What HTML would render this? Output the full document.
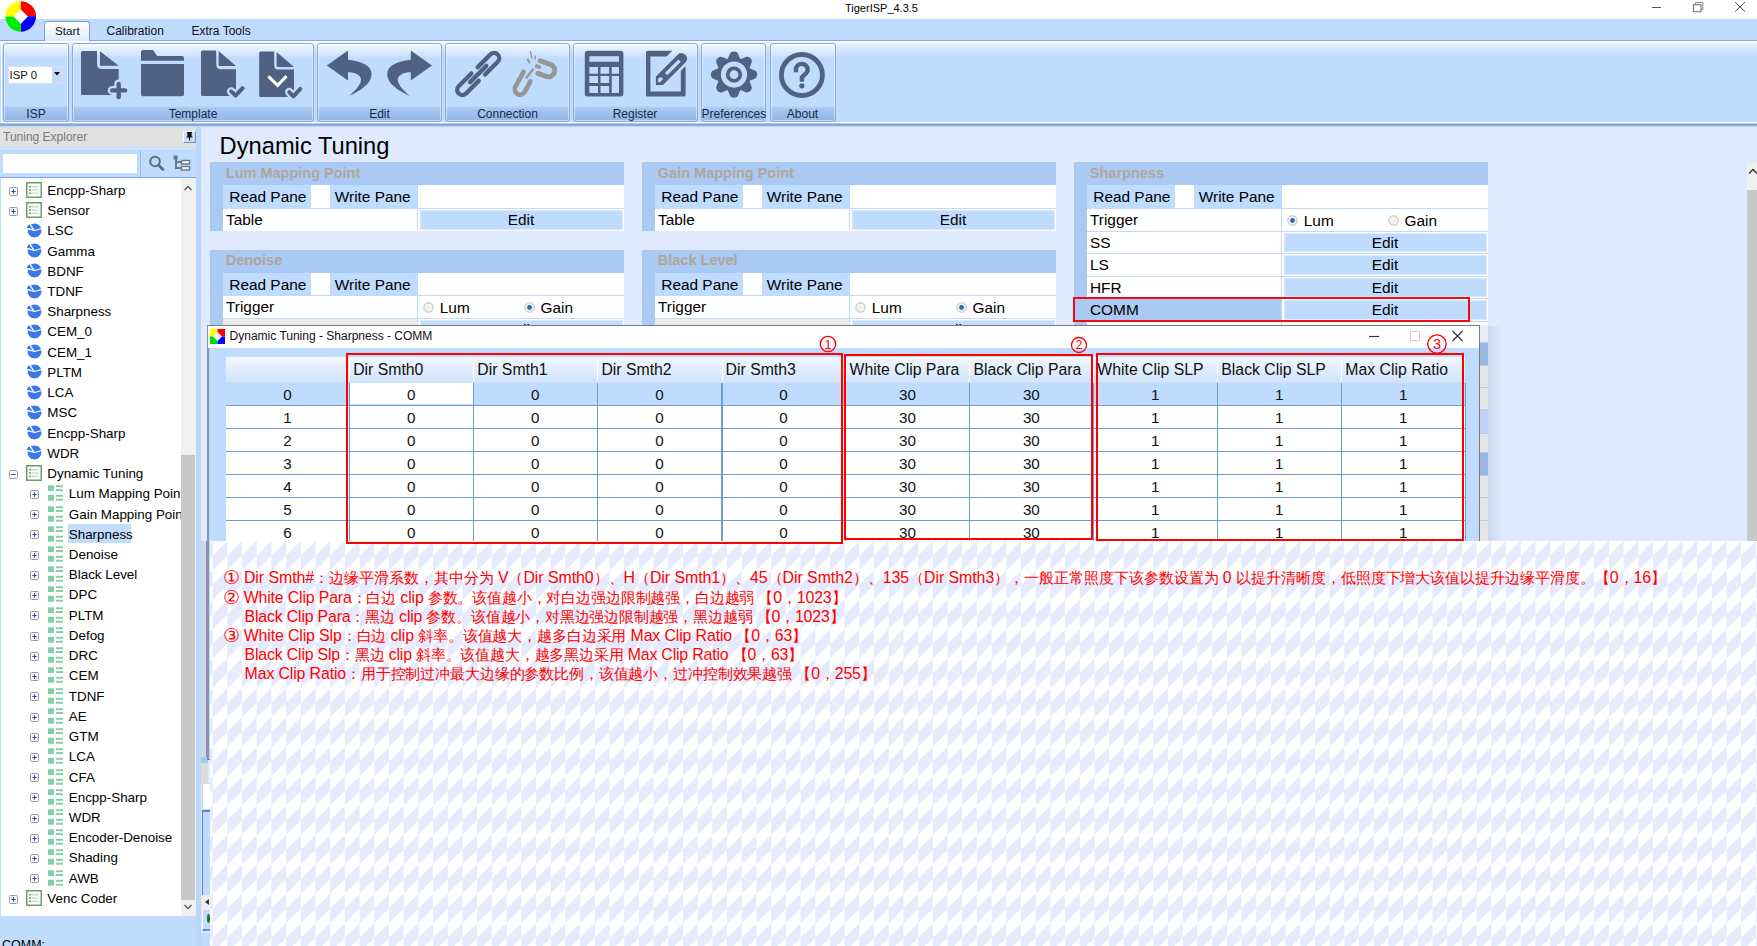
<!DOCTYPE html>
<html><head><meta charset="utf-8">
<style>
*{box-sizing:border-box}
body{margin:0;width:1757px;height:946px;overflow:hidden;position:relative;background:#fff;font-family:"Liberation Sans",sans-serif;color:#111}
.a{position:absolute}
.t{position:absolute;white-space:nowrap;line-height:1}
/* ribbon */
.grp{position:absolute;top:43px;height:79px;border:1px solid #8aabd9;border-radius:3px;background:linear-gradient(#f4f8fe 0,#d6e7fd 9px,#bfdbfe 15px,#bfdbfe 62px,#a9c8f0 64px,#8eb3e4 78px);box-shadow:inset 0 0 0 1px rgba(255,255,255,.45)}
.glab{position:absolute;left:0;right:0;top:62.8px;text-align:center;font-size:12px;line-height:14px;color:#15294a}
/* tree */
.tr{position:absolute;height:20px;font-size:13.4px;line-height:20px;white-space:nowrap;color:#000}
/* panels */
.pn{position:absolute;background:#aac9f3}
.ph{position:absolute;left:16px;top:4px;font-weight:bold;font-size:13.8px;color:#ada69c;white-space:nowrap}
.cell{position:absolute;font-size:15.4px;line-height:22px;white-space:nowrap;color:#000}
</style></head><body>

<!-- title bar -->
<div class="a" style="left:0;top:0;width:1757px;height:19px;background:#fff"></div>
<div class="t" style="left:845px;top:3px;font-size:11px;color:#000">TigerISP_4.3.5</div>
<svg class="a" style="left:0;top:0" width="1757" height="19">
  <g transform="translate(20.7,16.6)">
    <path d="M0,0 L0,-15.2 A15.2,15.2 0 0 1 15.2,0 Z" fill="#ff0000"/>
    <path d="M0,0 L15.2,0 A15.2,15.2 0 0 1 0,15.2 Z" fill="#0000ff"/>
    <path d="M0,0 L0,15.2 A15.2,15.2 0 0 1 -15.2,0 Z" fill="#00ee00"/>
    <path d="M0,0 L-15.2,0 A15.2,15.2 0 0 1 0,-15.2 Z" fill="#ffff00"/>
    <path d="M0,-7.2 L7.2,0 L0,7.2 L-7.2,0 Z" fill="#fff"/>
  </g>
  <line x1="1652" y1="7.5" x2="1661" y2="7.5" stroke="#555" stroke-width="1"/>
  <rect x="1693.5" y="4.7" width="7.5" height="7" fill="none" stroke="#666" stroke-width="1"/>
  <path d="M1695.5,4.5 V2.5 H1702.9 V9.6 H1701" fill="none" stroke="#888" stroke-width="1"/>
  <path d="M1735.2,2.2 L1745,11.6 M1745,2.2 L1735.2,11.6" stroke="#444" stroke-width="1"/>
</svg>
<!-- logo overlaps ribbon -->
<svg class="a" style="left:0;top:0;z-index:5" width="40" height="36">
  <g transform="translate(20.7,16.6)">
    <path d="M0,0 L0,-15.2 A15.2,15.2 0 0 1 15.2,0 Z" fill="#ff0000"/>
    <path d="M0,0 L15.2,0 A15.2,15.2 0 0 1 0,15.2 Z" fill="#0000ff"/>
    <path d="M0,0 L0,15.2 A15.2,15.2 0 0 1 -15.2,0 Z" fill="#00ee00"/>
    <path d="M0,0 L-15.2,0 A15.2,15.2 0 0 1 0,-15.2 Z" fill="#ffff00"/>
    <path d="M0,-7.2 L7.2,0 L0,7.2 L-7.2,0 Z" fill="#fff"/>
  </g>
</svg>

<!-- ribbon tab strip -->
<div class="a" style="left:0;top:19px;width:1757px;height:22px;background:#bfdbff;border-bottom:1px solid #85a9da"></div>
<div class="a" style="left:44px;top:21px;width:46px;height:21px;border:1px solid #7f9fcd;border-bottom:none;border-radius:3px 3px 0 0;background:linear-gradient(#ffffff,#dbe9fd)"></div>
<div class="t" style="left:55px;top:25px;font-size:11.7px;color:#111">Start</div>
<div class="t" style="left:106.5px;top:25px;font-size:12px;color:#111">Calibration</div>
<div class="t" style="left:191.5px;top:25px;font-size:12px;color:#111">Extra Tools</div>

<!-- ribbon body -->
<div class="a" style="left:0;top:41px;width:1757px;height:82px;background:linear-gradient(#f6f9fe 0,#dce9fc 6px,#bfdbfe 14px,#bfdbfe 100%)"></div>
<div class="a" style="left:1px;top:41px;width:1756px;height:82px;border:1px solid #fff;border-right:none;border-radius:4px 0 0 4px"></div>
<div class="a" style="left:0;top:122px;width:1757px;height:5px;background:linear-gradient(#ffffff 0,#ffffff 1px,#86a9d8 1.8px,#7a9fd1 3px,#a7c5ec 4px,#cde1fa 5px)"></div>

<div class="grp" style="left:3px;width:66px"><div class="glab">ISP</div></div>
<div class="grp" style="left:72px;width:242px"><div class="glab">Template</div></div>
<div class="grp" style="left:317px;width:125px"><div class="glab">Edit</div></div>
<div class="grp" style="left:445px;width:125px"><div class="glab">Connection</div></div>
<div class="grp" style="left:572.5px;width:125px"><div class="glab">Register</div></div>
<div class="grp" style="left:700.5px;width:65px"><div class="glab">Preferences</div></div>
<div class="grp" style="left:769.5px;width:66px"><div class="glab">About</div></div>

<!-- ISP combo -->
<div class="a" style="left:8px;top:66px;width:55px;height:18px;background:#fff;border:1px solid #d5e3f5"></div>
<div class="a" style="left:52px;top:67px;width:10px;height:16px;background:#c3dcfb"></div>
<div class="t" style="left:9.5px;top:69.5px;font-size:11.3px;color:#111">ISP 0</div>
<svg class="a" style="left:54px;top:72px" width="6" height="4"><path d="M0,0 H6 L3,3.5 Z" fill="#000"/></svg>

<!-- ribbon icons -->
<svg class="a" style="left:0;top:0" width="840" height="122">
 <g fill="#4f6282">
  <!-- new file -->
  <path d="M82.5,51 H97 V64 Q97,68.9 101,68.9 H118.7 V94.9 H82.5 Q81,94.9 81,93.4 V52.5 Q81,51 82.5,51 Z"/>
  <path d="M100,51.2 L118.7,65.8 H101.2 Q100,65.8 100,64.6 Z"/>
  <path d="M118.7,84 V97 M112.2,90.4 H125.2" stroke="#c0dbfd" stroke-width="9" stroke-linecap="round"/>
  <path d="M118.7,84 V97 M112.2,90.4 H125.2" stroke="#4f6282" stroke-width="4.4" stroke-linecap="round"/>
  <!-- folder -->
  <path d="M143,50.1 H153 L157.2,55.9 H182 Q184,55.9 184,57.9 V60.7 H141 V52.1 Q141,50.1 143,50.1 Z"/>
  <path d="M141,64.1 H184 V94.2 Q184,96.2 182,96.2 H143 Q141,96.2 141,94.2 Z"/>
  <!-- save -->
  <path d="M202.5,50.5 H216.2 V64 Q216.2,69.2 220,69.2 H236 V95.9 H202.5 Q201,95.9 201,94.4 V52 Q201,50.5 202.5,50.5 Z"/>
  <path d="M218.6,51 L236,65.9 H219.8 Q218.6,65.9 218.6,64.7 Z"/>
  <path d="M231.2,91.4 L235.6,95.6 L242.6,88.2" fill="none" stroke="#c0dbfd" stroke-width="8.5" stroke-linecap="round" stroke-linejoin="round"/>
  <path d="M231.2,91.4 L235.6,95.6 L242.6,88.2" fill="none" stroke="#4f6282" stroke-width="4" stroke-linecap="round" stroke-linejoin="round"/>
  <!-- save as -->
  <path d="M260.7,51.5 H274.2 V65 Q274.2,69.6 278,69.6 H294 V96.9 H260.7 Q259.2,96.9 259.2,95.4 V53 Q259.2,51.5 260.7,51.5 Z"/>
  <path d="M276.6,52 L294,67 H277.8 Q276.6,67 276.6,65.8 Z"/>
  <path d="M268.4,76.4 L277.6,85.3 L286.5,76.1" fill="none" stroke="#fff" stroke-width="3"/>
  <path d="M289.3,92.1 L293.4,96.3 L300.3,88.9" fill="none" stroke="#c0dbfd" stroke-width="8.5" stroke-linecap="round" stroke-linejoin="round"/>
  <path d="M289.3,92.1 L293.4,96.3 L300.3,88.9" fill="none" stroke="#4f6282" stroke-width="4" stroke-linecap="round" stroke-linejoin="round"/>
  <!-- undo -->
  <path d="M326.8,65.4 L348,50.5 L348,59.7 C362,61 371.6,66 371.6,74 C371.6,84 360,91 349,95.9 C356,90 361,84.5 361,79.5 C361,75 355,72.3 348,72.3 L348,80.5 Z"/>
  <!-- redo -->
  <path transform="translate(758.8,0) scale(-1,1)" d="M326.8,65.4 L348,50.5 L348,59.7 C362,61 371.6,66 371.6,74 C371.6,84 360,91 349,95.9 C356,90 361,84.5 361,79.5 C361,75 355,72.3 348,72.3 L348,80.5 Z"/>
  <!-- link -->
  <g transform="translate(478.2,74) rotate(-45)" fill="none" stroke="#4f6282" stroke-width="4.3" stroke-linecap="round">
    <path d="M4.5,-5.2 L22.4,-5.2 A5.2,5.2 0 0 1 22.4,5.2 L4.5,5.2"/>
    <path d="M-4.5,-5.2 L-22.4,-5.2 A5.2,5.2 0 0 0 -22.4,5.2 L-4.5,5.2"/>
    <path d="M-11.5,0 L11.5,0"/>
  </g>
  <!-- broken link -->
  <g fill="none" stroke="#969696" stroke-width="4.6" stroke-linecap="round">
    <path transform="translate(520,89.3) rotate(-61)" d="M17,-5.3 L0,-5.3 A5.3,5.3 0 0 0 0,5.3 L12,5.3"/>
    <path transform="translate(548.5,70.5) rotate(20)" d="M-11,-6.3 L0,-6.3 A6.3,6.3 0 0 1 0,6.3 L-9,6.3" stroke-width="4.9"/>
    <path d="M535.2,65.4 L540.8,67.6" stroke-width="3.6" stroke-linecap="butt"/>
    <path d="M526.5,77.5 L533,69.5" stroke-width="2.4"/>
    <path d="M530.6,52 L531.8,58" stroke-width="1.4"/>
    <path d="M535.3,56.2 L535.2,59" stroke-width="1.4"/>
    <path d="M527.8,59.5 L529.5,62.5" stroke-width="2"/>
  </g>
  <!-- calculator -->
  <path fill-rule="evenodd" d="M587.8,50.8 H620.4 Q623.4,50.8 623.4,53.8 V93.6 Q623.4,96.6 620.4,96.6 H587.8 Q584.8,96.6 584.8,93.6 V53.8 Q584.8,50.8 587.8,50.8 Z
    M589.3,56.3 V61.7 H619 V56.3 Z
    M589.3,67 V73.8 H598 V67 Z M600.5,67 V73.8 H609.1 V67 Z M611.7,67 V73.8 H619 V67 Z
    M589.3,76.1 V83.1 H598 V76.1 Z M600.5,76.1 V83.1 H609.1 V76.1 Z M611.7,76.1 V93 H619 V76.1 Z
    M589.3,86 V93 H598 V86 Z M600.5,86 V93 H609.1 V86 Z"/>
  <!-- pencil square -->
  <path d="M647.5,50.8 H672.3 L666.5,56.6 H650.4 V91.4 H680.8 V71 L685.6,66.2 V95.1 Q685.6,96.6 684.1,96.6 H647.5 Q646,96.6 646,95.1 V52.3 Q646,50.8 647.5,50.8 Z"/>
  <path fill-rule="evenodd" d="M655.9,85 V76.4 L677.9,54.4 A5.55,5.55 0 0 1 685.7,62.2 L663,85 Z M664.9,72.9 L678.4,59.4 L680.8,61.8 L667.3,75.3 Z M658.2,82.3 V78.6 L661.3,76.9 L663.1,79.1 L660,82.3 Z"/>
  <!-- gear -->
  <g transform="translate(734,74.6)">
    <path transform="rotate(0)" d="M-6.5,-15 L-4.3,-20.2 Q-3.5,-23 0,-23.2 Q3.5,-23 4.3,-20.2 L6.5,-15 Z"/>
    <path transform="rotate(45)" d="M-6.5,-15 L-4.3,-20.2 Q-3.5,-23 0,-23.2 Q3.5,-23 4.3,-20.2 L6.5,-15 Z"/>
    <path transform="rotate(90)" d="M-6.5,-15 L-4.3,-20.2 Q-3.5,-23 0,-23.2 Q3.5,-23 4.3,-20.2 L6.5,-15 Z"/>
    <path transform="rotate(135)" d="M-6.5,-15 L-4.3,-20.2 Q-3.5,-23 0,-23.2 Q3.5,-23 4.3,-20.2 L6.5,-15 Z"/>
    <path transform="rotate(180)" d="M-6.5,-15 L-4.3,-20.2 Q-3.5,-23 0,-23.2 Q3.5,-23 4.3,-20.2 L6.5,-15 Z"/>
    <path transform="rotate(225)" d="M-6.5,-15 L-4.3,-20.2 Q-3.5,-23 0,-23.2 Q3.5,-23 4.3,-20.2 L6.5,-15 Z"/>
    <path transform="rotate(270)" d="M-6.5,-15 L-4.3,-20.2 Q-3.5,-23 0,-23.2 Q3.5,-23 4.3,-20.2 L6.5,-15 Z"/>
    <path transform="rotate(315)" d="M-6.5,-15 L-4.3,-20.2 Q-3.5,-23 0,-23.2 Q3.5,-23 4.3,-20.2 L6.5,-15 Z"/>
    <circle r="17"/>
    <circle r="13.1" fill="#c0dbfd"/>
    <circle r="6.25" fill="none" stroke="#4f6282" stroke-width="3.7"/>
  </g>
  <!-- question -->
  <circle cx="801.9" cy="75" r="20.5" fill="none" stroke="#4f6282" stroke-width="4.8"/>
  <path d="M795.9,72.2 V69.8 A5.9,5.9 0 0 1 807.7,69.8 C807.7,73.8 803.2,74.6 801.9,77.5 V81.8" fill="none" stroke="#4f6282" stroke-width="4.4"/>
  <circle cx="801.9" cy="85.8" r="2.6"/>
 </g>
</svg>

<!-- LEFT PANEL -->
<div class="a" style="left:0;top:127px;width:201px;height:819px;background:#bfdbfe"></div>
<div class="a" style="left:0;top:127px;width:197px;height:20px;background:#e1e1e1"></div>
<div class="t" style="left:3px;top:131px;font-size:12px;color:#7c7c7c">Tuning Explorer</div>
<div class="a" style="left:183px;top:130.5px;width:12.5px;height:12px;background:#c9defa;border:1px solid #f2f7fe;border-right-color:#6f95c8;border-bottom-color:#6f95c8"></div>
<svg class="a" style="left:185px;top:132px" width="9" height="9"><path d="M2,0.5 H7 M3,0.5 V5 H6 V0.5 M1.5,5 H7.5 M4.5,5 V8.5" stroke="#111" stroke-width="1.2" fill="none"/><rect x="3" y="0.5" width="3" height="4.5" fill="#111"/></svg>
<div class="a" style="left:0;top:148px;width:197px;height:30px;background:#bfdbfe;border-top:1px solid #dbe9fc;border-bottom:1px solid #7fa6dc"></div>
<div class="a" style="left:2.6px;top:154px;width:134px;height:18.6px;background:#fff"></div>
<div class="a" style="left:140px;top:150px;width:1px;height:27px;background:#9ebbe3"></div>
<svg class="a" style="left:146px;top:153px" width="50" height="22">
  <circle cx="9" cy="8.5" r="4.8" fill="none" stroke="#5e6e80" stroke-width="2"/>
  <path d="M12.5,12 L17,16.5" stroke="#5e6e80" stroke-width="2.6" stroke-linecap="round"/>
  <path d="M30,4 V16 M30,9 H35 M30,15 H35" stroke="#6c7787" stroke-width="2" fill="none"/>
  <rect x="27.5" y="2.5" width="4" height="4" fill="#6c7787"/>
  <rect x="35.5" y="7.5" width="8" height="3.5" fill="#fff" stroke="#6c7787" stroke-width="1.4"/>
  <rect x="35.5" y="13.5" width="8" height="3.5" fill="#fff" stroke="#6c7787" stroke-width="1.4"/>
</svg>

<!-- tree -->
<div class="a" style="left:1px;top:178px;width:195px;height:737.6px;background:#fff"></div>
<div class="a" style="left:181px;top:178px;width:14.5px;height:737.6px;background:#f0f0f0"></div>
<div class="a" style="left:181px;top:455px;width:14px;height:445px;background:#c8c8c8"></div>
<svg class="a" style="left:181px;top:178px" width="15" height="738">
  <path d="M3.5,12 L7,8.5 L10.5,12" fill="none" stroke="#555" stroke-width="1.3"/>
  <path d="M3.5,727 L7,730.5 L10.5,727" fill="none" stroke="#555" stroke-width="1.3"/>
</svg>
<div class="a" style="left:1px;top:178px;width:180px;height:737px;overflow:hidden">
<svg class="a" style="left:8.0px;top:8.5px" width="9" height="9"><rect x="0.5" y="0.5" width="8" height="8" rx="1" fill="#f6f6f6" stroke="#9a9a9a"/><path d="M2.3,4.5 H6.7 M4.5,2.3 V6.7" stroke="#2b4a9a" stroke-width="1"/></svg>
<svg class="a" style="left:25.3px;top:4.0px" width="16" height="16"><rect x="0.75" y="0.75" width="14.5" height="14.5" fill="#fff" stroke="#6b9e6b" stroke-width="1.5"/><g fill="#6b9e6b"><circle cx="4" cy="4.8" r="1"/><circle cx="4" cy="8" r="1"/><circle cx="4" cy="11.2" r="1"/></g><path d="M5.5,4.8 H12.5 M5.5,8 H12.5 M5.5,11.2 H12.5" stroke="#a6c6a6" stroke-width="0.9"/></svg>
<div class="tr" style="left:46.3px;top:2.8px">Encpp-Sharp</div>
<svg class="a" style="left:8.0px;top:28.7px" width="9" height="9"><rect x="0.5" y="0.5" width="8" height="8" rx="1" fill="#f6f6f6" stroke="#9a9a9a"/><path d="M2.3,4.5 H6.7 M4.5,2.3 V6.7" stroke="#2b4a9a" stroke-width="1"/></svg>
<svg class="a" style="left:25.3px;top:24.2px" width="16" height="16"><rect x="0.75" y="0.75" width="14.5" height="14.5" fill="#fff" stroke="#6b9e6b" stroke-width="1.5"/><g fill="#6b9e6b"><circle cx="4" cy="4.8" r="1"/><circle cx="4" cy="8" r="1"/><circle cx="4" cy="11.2" r="1"/></g><path d="M5.5,4.8 H12.5 M5.5,8 H12.5 M5.5,11.2 H12.5" stroke="#a6c6a6" stroke-width="0.9"/></svg>
<div class="tr" style="left:46.3px;top:23.0px">Sensor</div>
<svg class="a" style="left:24.5px;top:43.8px" width="17" height="17"><g fill="#3b78e8" stroke="#fff" stroke-width="0.9" stroke-linejoin="round"><path d="M8.50,8.50 L15.60,6.41 A7.4,7.4 0 1 1 1.29,6.84 Z"/><path d="M8.50,8.50 L4.36,2.37 A7.4,7.4 0 0 1 15.60,6.41 Z"/><path d="M7.43,7.76 L0.22,6.10 A7.4,7.4 0 0 1 3.29,1.63 Z"/></g></svg>
<div class="tr" style="left:46.3px;top:43.3px">LSC</div>
<svg class="a" style="left:24.5px;top:64.0px" width="17" height="17"><g fill="#3b78e8" stroke="#fff" stroke-width="0.9" stroke-linejoin="round"><path d="M8.50,8.50 L15.60,6.41 A7.4,7.4 0 1 1 1.29,6.84 Z"/><path d="M8.50,8.50 L4.36,2.37 A7.4,7.4 0 0 1 15.60,6.41 Z"/><path d="M7.43,7.76 L0.22,6.10 A7.4,7.4 0 0 1 3.29,1.63 Z"/></g></svg>
<div class="tr" style="left:46.3px;top:63.5px">Gamma</div>
<svg class="a" style="left:24.5px;top:84.2px" width="17" height="17"><g fill="#3b78e8" stroke="#fff" stroke-width="0.9" stroke-linejoin="round"><path d="M8.50,8.50 L15.60,6.41 A7.4,7.4 0 1 1 1.29,6.84 Z"/><path d="M8.50,8.50 L4.36,2.37 A7.4,7.4 0 0 1 15.60,6.41 Z"/><path d="M7.43,7.76 L0.22,6.10 A7.4,7.4 0 0 1 3.29,1.63 Z"/></g></svg>
<div class="tr" style="left:46.3px;top:83.7px">BDNF</div>
<svg class="a" style="left:24.5px;top:104.5px" width="17" height="17"><g fill="#3b78e8" stroke="#fff" stroke-width="0.9" stroke-linejoin="round"><path d="M8.50,8.50 L15.60,6.41 A7.4,7.4 0 1 1 1.29,6.84 Z"/><path d="M8.50,8.50 L4.36,2.37 A7.4,7.4 0 0 1 15.60,6.41 Z"/><path d="M7.43,7.76 L0.22,6.10 A7.4,7.4 0 0 1 3.29,1.63 Z"/></g></svg>
<div class="tr" style="left:46.3px;top:104.0px">TDNF</div>
<svg class="a" style="left:24.5px;top:124.7px" width="17" height="17"><g fill="#3b78e8" stroke="#fff" stroke-width="0.9" stroke-linejoin="round"><path d="M8.50,8.50 L15.60,6.41 A7.4,7.4 0 1 1 1.29,6.84 Z"/><path d="M8.50,8.50 L4.36,2.37 A7.4,7.4 0 0 1 15.60,6.41 Z"/><path d="M7.43,7.76 L0.22,6.10 A7.4,7.4 0 0 1 3.29,1.63 Z"/></g></svg>
<div class="tr" style="left:46.3px;top:124.2px">Sharpness</div>
<svg class="a" style="left:24.5px;top:144.9px" width="17" height="17"><g fill="#3b78e8" stroke="#fff" stroke-width="0.9" stroke-linejoin="round"><path d="M8.50,8.50 L15.60,6.41 A7.4,7.4 0 1 1 1.29,6.84 Z"/><path d="M8.50,8.50 L4.36,2.37 A7.4,7.4 0 0 1 15.60,6.41 Z"/><path d="M7.43,7.76 L0.22,6.10 A7.4,7.4 0 0 1 3.29,1.63 Z"/></g></svg>
<div class="tr" style="left:46.3px;top:144.4px">CEM_0</div>
<svg class="a" style="left:24.5px;top:165.1px" width="17" height="17"><g fill="#3b78e8" stroke="#fff" stroke-width="0.9" stroke-linejoin="round"><path d="M8.50,8.50 L15.60,6.41 A7.4,7.4 0 1 1 1.29,6.84 Z"/><path d="M8.50,8.50 L4.36,2.37 A7.4,7.4 0 0 1 15.60,6.41 Z"/><path d="M7.43,7.76 L0.22,6.10 A7.4,7.4 0 0 1 3.29,1.63 Z"/></g></svg>
<div class="tr" style="left:46.3px;top:164.6px">CEM_1</div>
<svg class="a" style="left:24.5px;top:185.4px" width="17" height="17"><g fill="#3b78e8" stroke="#fff" stroke-width="0.9" stroke-linejoin="round"><path d="M8.50,8.50 L15.60,6.41 A7.4,7.4 0 1 1 1.29,6.84 Z"/><path d="M8.50,8.50 L4.36,2.37 A7.4,7.4 0 0 1 15.60,6.41 Z"/><path d="M7.43,7.76 L0.22,6.10 A7.4,7.4 0 0 1 3.29,1.63 Z"/></g></svg>
<div class="tr" style="left:46.3px;top:184.9px">PLTM</div>
<svg class="a" style="left:24.5px;top:205.6px" width="17" height="17"><g fill="#3b78e8" stroke="#fff" stroke-width="0.9" stroke-linejoin="round"><path d="M8.50,8.50 L15.60,6.41 A7.4,7.4 0 1 1 1.29,6.84 Z"/><path d="M8.50,8.50 L4.36,2.37 A7.4,7.4 0 0 1 15.60,6.41 Z"/><path d="M7.43,7.76 L0.22,6.10 A7.4,7.4 0 0 1 3.29,1.63 Z"/></g></svg>
<div class="tr" style="left:46.3px;top:205.1px">LCA</div>
<svg class="a" style="left:24.5px;top:225.8px" width="17" height="17"><g fill="#3b78e8" stroke="#fff" stroke-width="0.9" stroke-linejoin="round"><path d="M8.50,8.50 L15.60,6.41 A7.4,7.4 0 1 1 1.29,6.84 Z"/><path d="M8.50,8.50 L4.36,2.37 A7.4,7.4 0 0 1 15.60,6.41 Z"/><path d="M7.43,7.76 L0.22,6.10 A7.4,7.4 0 0 1 3.29,1.63 Z"/></g></svg>
<div class="tr" style="left:46.3px;top:225.3px">MSC</div>
<svg class="a" style="left:24.5px;top:246.1px" width="17" height="17"><g fill="#3b78e8" stroke="#fff" stroke-width="0.9" stroke-linejoin="round"><path d="M8.50,8.50 L15.60,6.41 A7.4,7.4 0 1 1 1.29,6.84 Z"/><path d="M8.50,8.50 L4.36,2.37 A7.4,7.4 0 0 1 15.60,6.41 Z"/><path d="M7.43,7.76 L0.22,6.10 A7.4,7.4 0 0 1 3.29,1.63 Z"/></g></svg>
<div class="tr" style="left:46.3px;top:245.6px">Encpp-Sharp</div>
<svg class="a" style="left:24.5px;top:266.3px" width="17" height="17"><g fill="#3b78e8" stroke="#fff" stroke-width="0.9" stroke-linejoin="round"><path d="M8.50,8.50 L15.60,6.41 A7.4,7.4 0 1 1 1.29,6.84 Z"/><path d="M8.50,8.50 L4.36,2.37 A7.4,7.4 0 0 1 15.60,6.41 Z"/><path d="M7.43,7.76 L0.22,6.10 A7.4,7.4 0 0 1 3.29,1.63 Z"/></g></svg>
<div class="tr" style="left:46.3px;top:265.8px">WDR</div>
<svg class="a" style="left:8.0px;top:291.7px" width="9" height="9"><rect x="0.5" y="0.5" width="8" height="8" rx="1" fill="#f6f6f6" stroke="#9a9a9a"/><path d="M2.3,4.5 H6.7" stroke="#2b4a9a" stroke-width="1"/></svg>
<svg class="a" style="left:25.3px;top:287.2px" width="16" height="16"><rect x="0.75" y="0.75" width="14.5" height="14.5" fill="#fff" stroke="#6b9e6b" stroke-width="1.5"/><g fill="#6b9e6b"><circle cx="4" cy="4.8" r="1"/><circle cx="4" cy="8" r="1"/><circle cx="4" cy="11.2" r="1"/></g><path d="M5.5,4.8 H12.5 M5.5,8 H12.5 M5.5,11.2 H12.5" stroke="#a6c6a6" stroke-width="0.9"/></svg>
<div class="tr" style="left:46.3px;top:286.0px">Dynamic Tuning</div>
<svg class="a" style="left:29.0px;top:311.9px" width="9" height="9"><rect x="0.5" y="0.5" width="8" height="8" rx="1" fill="#f6f6f6" stroke="#9a9a9a"/><path d="M2.3,4.5 H6.7 M4.5,2.3 V6.7" stroke="#2b4a9a" stroke-width="1"/></svg>
<svg class="a" style="left:47.0px;top:307.2px" width="16" height="16"><g fill="#80cfa5"><rect x="0" y="0.3" width="6" height="5.7"/><rect x="0" y="9.8" width="6" height="5.9"/><rect x="8" y="0.3" width="7" height="1.9"/><rect x="8" y="4.1" width="7" height="1.9"/><rect x="8" y="9.8" width="7" height="1.9"/><rect x="8" y="13.8" width="7" height="1.9"/></g></svg>
<div class="tr" style="left:67.8px;top:306.2px">Lum Mapping Point</div>
<svg class="a" style="left:29.0px;top:332.2px" width="9" height="9"><rect x="0.5" y="0.5" width="8" height="8" rx="1" fill="#f6f6f6" stroke="#9a9a9a"/><path d="M2.3,4.5 H6.7 M4.5,2.3 V6.7" stroke="#2b4a9a" stroke-width="1"/></svg>
<svg class="a" style="left:47.0px;top:327.5px" width="16" height="16"><g fill="#80cfa5"><rect x="0" y="0.3" width="6" height="5.7"/><rect x="0" y="9.8" width="6" height="5.9"/><rect x="8" y="0.3" width="7" height="1.9"/><rect x="8" y="4.1" width="7" height="1.9"/><rect x="8" y="9.8" width="7" height="1.9"/><rect x="8" y="13.8" width="7" height="1.9"/></g></svg>
<div class="tr" style="left:67.8px;top:326.5px">Gain Mapping Point</div>
<svg class="a" style="left:29.0px;top:352.4px" width="9" height="9"><rect x="0.5" y="0.5" width="8" height="8" rx="1" fill="#f6f6f6" stroke="#9a9a9a"/><path d="M2.3,4.5 H6.7 M4.5,2.3 V6.7" stroke="#2b4a9a" stroke-width="1"/></svg>
<svg class="a" style="left:47.0px;top:347.7px" width="16" height="16"><g fill="#80cfa5"><rect x="0" y="0.3" width="6" height="5.7"/><rect x="0" y="9.8" width="6" height="5.9"/><rect x="8" y="0.3" width="7" height="1.9"/><rect x="8" y="4.1" width="7" height="1.9"/><rect x="8" y="9.8" width="7" height="1.9"/><rect x="8" y="13.8" width="7" height="1.9"/></g></svg>
<div class="a" style="left:66.8px;top:346.2px;width:63px;height:19px;background:#c2dcfc"></div>
<div class="tr" style="left:67.8px;top:346.7px">Sharpness</div>
<svg class="a" style="left:29.0px;top:372.6px" width="9" height="9"><rect x="0.5" y="0.5" width="8" height="8" rx="1" fill="#f6f6f6" stroke="#9a9a9a"/><path d="M2.3,4.5 H6.7 M4.5,2.3 V6.7" stroke="#2b4a9a" stroke-width="1"/></svg>
<svg class="a" style="left:47.0px;top:367.9px" width="16" height="16"><g fill="#80cfa5"><rect x="0" y="0.3" width="6" height="5.7"/><rect x="0" y="9.8" width="6" height="5.9"/><rect x="8" y="0.3" width="7" height="1.9"/><rect x="8" y="4.1" width="7" height="1.9"/><rect x="8" y="9.8" width="7" height="1.9"/><rect x="8" y="13.8" width="7" height="1.9"/></g></svg>
<div class="tr" style="left:67.8px;top:366.9px">Denoise</div>
<svg class="a" style="left:29.0px;top:392.9px" width="9" height="9"><rect x="0.5" y="0.5" width="8" height="8" rx="1" fill="#f6f6f6" stroke="#9a9a9a"/><path d="M2.3,4.5 H6.7 M4.5,2.3 V6.7" stroke="#2b4a9a" stroke-width="1"/></svg>
<svg class="a" style="left:47.0px;top:388.2px" width="16" height="16"><g fill="#80cfa5"><rect x="0" y="0.3" width="6" height="5.7"/><rect x="0" y="9.8" width="6" height="5.9"/><rect x="8" y="0.3" width="7" height="1.9"/><rect x="8" y="4.1" width="7" height="1.9"/><rect x="8" y="9.8" width="7" height="1.9"/><rect x="8" y="13.8" width="7" height="1.9"/></g></svg>
<div class="tr" style="left:67.8px;top:387.2px">Black Level</div>
<svg class="a" style="left:29.0px;top:413.1px" width="9" height="9"><rect x="0.5" y="0.5" width="8" height="8" rx="1" fill="#f6f6f6" stroke="#9a9a9a"/><path d="M2.3,4.5 H6.7 M4.5,2.3 V6.7" stroke="#2b4a9a" stroke-width="1"/></svg>
<svg class="a" style="left:47.0px;top:408.4px" width="16" height="16"><g fill="#80cfa5"><rect x="0" y="0.3" width="6" height="5.7"/><rect x="0" y="9.8" width="6" height="5.9"/><rect x="8" y="0.3" width="7" height="1.9"/><rect x="8" y="4.1" width="7" height="1.9"/><rect x="8" y="9.8" width="7" height="1.9"/><rect x="8" y="13.8" width="7" height="1.9"/></g></svg>
<div class="tr" style="left:67.8px;top:407.4px">DPC</div>
<svg class="a" style="left:29.0px;top:433.3px" width="9" height="9"><rect x="0.5" y="0.5" width="8" height="8" rx="1" fill="#f6f6f6" stroke="#9a9a9a"/><path d="M2.3,4.5 H6.7 M4.5,2.3 V6.7" stroke="#2b4a9a" stroke-width="1"/></svg>
<svg class="a" style="left:47.0px;top:428.6px" width="16" height="16"><g fill="#80cfa5"><rect x="0" y="0.3" width="6" height="5.7"/><rect x="0" y="9.8" width="6" height="5.9"/><rect x="8" y="0.3" width="7" height="1.9"/><rect x="8" y="4.1" width="7" height="1.9"/><rect x="8" y="9.8" width="7" height="1.9"/><rect x="8" y="13.8" width="7" height="1.9"/></g></svg>
<div class="tr" style="left:67.8px;top:427.6px">PLTM</div>
<svg class="a" style="left:29.0px;top:453.6px" width="9" height="9"><rect x="0.5" y="0.5" width="8" height="8" rx="1" fill="#f6f6f6" stroke="#9a9a9a"/><path d="M2.3,4.5 H6.7 M4.5,2.3 V6.7" stroke="#2b4a9a" stroke-width="1"/></svg>
<svg class="a" style="left:47.0px;top:448.9px" width="16" height="16"><g fill="#80cfa5"><rect x="0" y="0.3" width="6" height="5.7"/><rect x="0" y="9.8" width="6" height="5.9"/><rect x="8" y="0.3" width="7" height="1.9"/><rect x="8" y="4.1" width="7" height="1.9"/><rect x="8" y="9.8" width="7" height="1.9"/><rect x="8" y="13.8" width="7" height="1.9"/></g></svg>
<div class="tr" style="left:67.8px;top:447.9px">Defog</div>
<svg class="a" style="left:29.0px;top:473.8px" width="9" height="9"><rect x="0.5" y="0.5" width="8" height="8" rx="1" fill="#f6f6f6" stroke="#9a9a9a"/><path d="M2.3,4.5 H6.7 M4.5,2.3 V6.7" stroke="#2b4a9a" stroke-width="1"/></svg>
<svg class="a" style="left:47.0px;top:469.1px" width="16" height="16"><g fill="#80cfa5"><rect x="0" y="0.3" width="6" height="5.7"/><rect x="0" y="9.8" width="6" height="5.9"/><rect x="8" y="0.3" width="7" height="1.9"/><rect x="8" y="4.1" width="7" height="1.9"/><rect x="8" y="9.8" width="7" height="1.9"/><rect x="8" y="13.8" width="7" height="1.9"/></g></svg>
<div class="tr" style="left:67.8px;top:468.1px">DRC</div>
<svg class="a" style="left:29.0px;top:494.0px" width="9" height="9"><rect x="0.5" y="0.5" width="8" height="8" rx="1" fill="#f6f6f6" stroke="#9a9a9a"/><path d="M2.3,4.5 H6.7 M4.5,2.3 V6.7" stroke="#2b4a9a" stroke-width="1"/></svg>
<svg class="a" style="left:47.0px;top:489.3px" width="16" height="16"><g fill="#80cfa5"><rect x="0" y="0.3" width="6" height="5.7"/><rect x="0" y="9.8" width="6" height="5.9"/><rect x="8" y="0.3" width="7" height="1.9"/><rect x="8" y="4.1" width="7" height="1.9"/><rect x="8" y="9.8" width="7" height="1.9"/><rect x="8" y="13.8" width="7" height="1.9"/></g></svg>
<div class="tr" style="left:67.8px;top:488.3px">CEM</div>
<svg class="a" style="left:29.0px;top:514.2px" width="9" height="9"><rect x="0.5" y="0.5" width="8" height="8" rx="1" fill="#f6f6f6" stroke="#9a9a9a"/><path d="M2.3,4.5 H6.7 M4.5,2.3 V6.7" stroke="#2b4a9a" stroke-width="1"/></svg>
<svg class="a" style="left:47.0px;top:509.5px" width="16" height="16"><g fill="#80cfa5"><rect x="0" y="0.3" width="6" height="5.7"/><rect x="0" y="9.8" width="6" height="5.9"/><rect x="8" y="0.3" width="7" height="1.9"/><rect x="8" y="4.1" width="7" height="1.9"/><rect x="8" y="9.8" width="7" height="1.9"/><rect x="8" y="13.8" width="7" height="1.9"/></g></svg>
<div class="tr" style="left:67.8px;top:508.5px">TDNF</div>
<svg class="a" style="left:29.0px;top:534.5px" width="9" height="9"><rect x="0.5" y="0.5" width="8" height="8" rx="1" fill="#f6f6f6" stroke="#9a9a9a"/><path d="M2.3,4.5 H6.7 M4.5,2.3 V6.7" stroke="#2b4a9a" stroke-width="1"/></svg>
<svg class="a" style="left:47.0px;top:529.8px" width="16" height="16"><g fill="#80cfa5"><rect x="0" y="0.3" width="6" height="5.7"/><rect x="0" y="9.8" width="6" height="5.9"/><rect x="8" y="0.3" width="7" height="1.9"/><rect x="8" y="4.1" width="7" height="1.9"/><rect x="8" y="9.8" width="7" height="1.9"/><rect x="8" y="13.8" width="7" height="1.9"/></g></svg>
<div class="tr" style="left:67.8px;top:528.8px">AE</div>
<svg class="a" style="left:29.0px;top:554.7px" width="9" height="9"><rect x="0.5" y="0.5" width="8" height="8" rx="1" fill="#f6f6f6" stroke="#9a9a9a"/><path d="M2.3,4.5 H6.7 M4.5,2.3 V6.7" stroke="#2b4a9a" stroke-width="1"/></svg>
<svg class="a" style="left:47.0px;top:550.0px" width="16" height="16"><g fill="#80cfa5"><rect x="0" y="0.3" width="6" height="5.7"/><rect x="0" y="9.8" width="6" height="5.9"/><rect x="8" y="0.3" width="7" height="1.9"/><rect x="8" y="4.1" width="7" height="1.9"/><rect x="8" y="9.8" width="7" height="1.9"/><rect x="8" y="13.8" width="7" height="1.9"/></g></svg>
<div class="tr" style="left:67.8px;top:549.0px">GTM</div>
<svg class="a" style="left:29.0px;top:574.9px" width="9" height="9"><rect x="0.5" y="0.5" width="8" height="8" rx="1" fill="#f6f6f6" stroke="#9a9a9a"/><path d="M2.3,4.5 H6.7 M4.5,2.3 V6.7" stroke="#2b4a9a" stroke-width="1"/></svg>
<svg class="a" style="left:47.0px;top:570.2px" width="16" height="16"><g fill="#80cfa5"><rect x="0" y="0.3" width="6" height="5.7"/><rect x="0" y="9.8" width="6" height="5.9"/><rect x="8" y="0.3" width="7" height="1.9"/><rect x="8" y="4.1" width="7" height="1.9"/><rect x="8" y="9.8" width="7" height="1.9"/><rect x="8" y="13.8" width="7" height="1.9"/></g></svg>
<div class="tr" style="left:67.8px;top:569.2px">LCA</div>
<svg class="a" style="left:29.0px;top:595.2px" width="9" height="9"><rect x="0.5" y="0.5" width="8" height="8" rx="1" fill="#f6f6f6" stroke="#9a9a9a"/><path d="M2.3,4.5 H6.7 M4.5,2.3 V6.7" stroke="#2b4a9a" stroke-width="1"/></svg>
<svg class="a" style="left:47.0px;top:590.5px" width="16" height="16"><g fill="#80cfa5"><rect x="0" y="0.3" width="6" height="5.7"/><rect x="0" y="9.8" width="6" height="5.9"/><rect x="8" y="0.3" width="7" height="1.9"/><rect x="8" y="4.1" width="7" height="1.9"/><rect x="8" y="9.8" width="7" height="1.9"/><rect x="8" y="13.8" width="7" height="1.9"/></g></svg>
<div class="tr" style="left:67.8px;top:589.5px">CFA</div>
<svg class="a" style="left:29.0px;top:615.4px" width="9" height="9"><rect x="0.5" y="0.5" width="8" height="8" rx="1" fill="#f6f6f6" stroke="#9a9a9a"/><path d="M2.3,4.5 H6.7 M4.5,2.3 V6.7" stroke="#2b4a9a" stroke-width="1"/></svg>
<svg class="a" style="left:47.0px;top:610.7px" width="16" height="16"><g fill="#80cfa5"><rect x="0" y="0.3" width="6" height="5.7"/><rect x="0" y="9.8" width="6" height="5.9"/><rect x="8" y="0.3" width="7" height="1.9"/><rect x="8" y="4.1" width="7" height="1.9"/><rect x="8" y="9.8" width="7" height="1.9"/><rect x="8" y="13.8" width="7" height="1.9"/></g></svg>
<div class="tr" style="left:67.8px;top:609.7px">Encpp-Sharp</div>
<svg class="a" style="left:29.0px;top:635.6px" width="9" height="9"><rect x="0.5" y="0.5" width="8" height="8" rx="1" fill="#f6f6f6" stroke="#9a9a9a"/><path d="M2.3,4.5 H6.7 M4.5,2.3 V6.7" stroke="#2b4a9a" stroke-width="1"/></svg>
<svg class="a" style="left:47.0px;top:630.9px" width="16" height="16"><g fill="#80cfa5"><rect x="0" y="0.3" width="6" height="5.7"/><rect x="0" y="9.8" width="6" height="5.9"/><rect x="8" y="0.3" width="7" height="1.9"/><rect x="8" y="4.1" width="7" height="1.9"/><rect x="8" y="9.8" width="7" height="1.9"/><rect x="8" y="13.8" width="7" height="1.9"/></g></svg>
<div class="tr" style="left:67.8px;top:629.9px">WDR</div>
<svg class="a" style="left:29.0px;top:655.9px" width="9" height="9"><rect x="0.5" y="0.5" width="8" height="8" rx="1" fill="#f6f6f6" stroke="#9a9a9a"/><path d="M2.3,4.5 H6.7 M4.5,2.3 V6.7" stroke="#2b4a9a" stroke-width="1"/></svg>
<svg class="a" style="left:47.0px;top:651.2px" width="16" height="16"><g fill="#80cfa5"><rect x="0" y="0.3" width="6" height="5.7"/><rect x="0" y="9.8" width="6" height="5.9"/><rect x="8" y="0.3" width="7" height="1.9"/><rect x="8" y="4.1" width="7" height="1.9"/><rect x="8" y="9.8" width="7" height="1.9"/><rect x="8" y="13.8" width="7" height="1.9"/></g></svg>
<div class="tr" style="left:67.8px;top:650.2px">Encoder-Denoise</div>
<svg class="a" style="left:29.0px;top:676.1px" width="9" height="9"><rect x="0.5" y="0.5" width="8" height="8" rx="1" fill="#f6f6f6" stroke="#9a9a9a"/><path d="M2.3,4.5 H6.7 M4.5,2.3 V6.7" stroke="#2b4a9a" stroke-width="1"/></svg>
<svg class="a" style="left:47.0px;top:671.4px" width="16" height="16"><g fill="#80cfa5"><rect x="0" y="0.3" width="6" height="5.7"/><rect x="0" y="9.8" width="6" height="5.9"/><rect x="8" y="0.3" width="7" height="1.9"/><rect x="8" y="4.1" width="7" height="1.9"/><rect x="8" y="9.8" width="7" height="1.9"/><rect x="8" y="13.8" width="7" height="1.9"/></g></svg>
<div class="tr" style="left:67.8px;top:670.4px">Shading</div>
<svg class="a" style="left:29.0px;top:696.3px" width="9" height="9"><rect x="0.5" y="0.5" width="8" height="8" rx="1" fill="#f6f6f6" stroke="#9a9a9a"/><path d="M2.3,4.5 H6.7 M4.5,2.3 V6.7" stroke="#2b4a9a" stroke-width="1"/></svg>
<svg class="a" style="left:47.0px;top:691.6px" width="16" height="16"><g fill="#80cfa5"><rect x="0" y="0.3" width="6" height="5.7"/><rect x="0" y="9.8" width="6" height="5.9"/><rect x="8" y="0.3" width="7" height="1.9"/><rect x="8" y="4.1" width="7" height="1.9"/><rect x="8" y="9.8" width="7" height="1.9"/><rect x="8" y="13.8" width="7" height="1.9"/></g></svg>
<div class="tr" style="left:67.8px;top:690.6px">AWB</div>
<svg class="a" style="left:8.0px;top:716.6px" width="9" height="9"><rect x="0.5" y="0.5" width="8" height="8" rx="1" fill="#f6f6f6" stroke="#9a9a9a"/><path d="M2.3,4.5 H6.7 M4.5,2.3 V6.7" stroke="#2b4a9a" stroke-width="1"/></svg>
<svg class="a" style="left:25.3px;top:712.1px" width="16" height="16"><rect x="0.75" y="0.75" width="14.5" height="14.5" fill="#fff" stroke="#6b9e6b" stroke-width="1.5"/><g fill="#6b9e6b"><circle cx="4" cy="4.8" r="1"/><circle cx="4" cy="8" r="1"/><circle cx="4" cy="11.2" r="1"/></g><path d="M5.5,4.8 H12.5 M5.5,8 H12.5 M5.5,11.2 H12.5" stroke="#a6c6a6" stroke-width="0.9"/></svg>
<div class="tr" style="left:46.3px;top:710.9px">Venc Coder</div>
</div>

<div class="t" style="left:2px;top:938.5px;font-size:12.5px;color:#000">COMM:</div>

<!-- MAIN AREA -->
<div class="a" style="left:201px;top:127px;width:1556px;height:819px;background:#dfebfc"></div>
<div class="a" style="left:197px;top:127px;width:4px;height:819px;background:#bfdbfe"></div>
<div class="t" style="left:219.6px;top:135.3px;font-size:23.7px;color:#000">Dynamic Tuning</div>

<div class="pn" style="left:210px;top:162.4px;width:414px;height:68.7px"></div>
<div class="t" style="left:225.8px;top:166.0px;font-weight:bold;font-size:14.5px;color:#aea79c">Lum Mapping Point</div>
<div class="a" style="left:223px;top:208px;width:401px;height:23px;background:#c4d9f4"></div>
<div class="a" style="left:223px;top:185px;width:401px;height:23px;background:#fff"></div>
<div class="a" style="left:223px;top:185px;width:88.3px;height:23px;background:#bfdbfe"></div>
<div class="a" style="left:329.9px;top:185px;width:88px;height:23px;background:#bfdbfe"></div>
<div class="cell" style="left:229.3px;top:185.5px">Read Pane</div>
<div class="cell" style="left:334.8px;top:185.5px">Write Pane</div>
<div class="a" style="left:223px;top:209px;width:194px;height:22px;background:#fff"></div>
<div class="a" style="left:418px;top:209px;width:206px;height:22px;background:#fff"></div>
<div class="cell" style="left:226px;top:209.3px">Table</div>
<div class="a" style="left:419.5px;top:210px;width:203px;height:20px;background:#bfdbfe;border:1px solid #dce9fb"></div>
<div class="cell" style="left:418px;top:209.3px;width:206px;text-align:center">Edit</div>
<div class="pn" style="left:642px;top:162.4px;width:414px;height:68.7px"></div>
<div class="t" style="left:657.8px;top:166.0px;font-weight:bold;font-size:14.5px;color:#aea79c">Gain Mapping Point</div>
<div class="a" style="left:655px;top:208px;width:401px;height:23px;background:#c4d9f4"></div>
<div class="a" style="left:655px;top:185px;width:401px;height:23px;background:#fff"></div>
<div class="a" style="left:655px;top:185px;width:88.3px;height:23px;background:#bfdbfe"></div>
<div class="a" style="left:761.9px;top:185px;width:88px;height:23px;background:#bfdbfe"></div>
<div class="cell" style="left:661.3px;top:185.5px">Read Pane</div>
<div class="cell" style="left:766.8px;top:185.5px">Write Pane</div>
<div class="a" style="left:655px;top:209px;width:194px;height:22px;background:#fff"></div>
<div class="a" style="left:850px;top:209px;width:206px;height:22px;background:#fff"></div>
<div class="cell" style="left:658px;top:209.3px">Table</div>
<div class="a" style="left:851.5px;top:210px;width:203px;height:20px;background:#bfdbfe;border:1px solid #dce9fb"></div>
<div class="cell" style="left:850px;top:209.3px;width:206px;text-align:center">Edit</div>
<div class="pn" style="left:1074px;top:162.4px;width:414px;height:249.5px"></div>
<div class="t" style="left:1089.8px;top:166.0px;font-weight:bold;font-size:14.5px;color:#aea79c">Sharpness</div>
<div class="a" style="left:1087px;top:208px;width:401px;height:203px;background:#c4d9f4"></div>
<div class="a" style="left:1087px;top:185px;width:401px;height:23px;background:#fff"></div>
<div class="a" style="left:1087px;top:185px;width:88.3px;height:23px;background:#bfdbfe"></div>
<div class="a" style="left:1193.9px;top:185px;width:88px;height:23px;background:#bfdbfe"></div>
<div class="cell" style="left:1093.3px;top:185.5px">Read Pane</div>
<div class="cell" style="left:1198.8px;top:185.5px">Write Pane</div>
<div class="a" style="left:1087px;top:209px;width:194px;height:22px;background:#fff"></div>
<div class="a" style="left:1282px;top:209px;width:206px;height:22px;background:#fff"></div>
<div class="cell" style="left:1090px;top:209.3px">Trigger</div>
<svg class="a" style="left:1287.2px;top:214.5px" width="11" height="11"><circle cx="5.5" cy="5.5" r="4.8" fill="#f2f2f2" stroke="#b5b5b5" stroke-width="0.9"/><circle cx="5.5" cy="5.5" r="2.4" fill="#1f6db0"/></svg>
<div class="cell" style="left:1303.8px;top:210px">Lum</div>
<svg class="a" style="left:1388.0px;top:214.5px" width="11" height="11"><circle cx="5.5" cy="5.5" r="4.8" fill="#f2f2f2" stroke="#b5b5b5" stroke-width="0.9"/></svg>
<div class="cell" style="left:1404.6px;top:210px">Gain</div>
<div class="a" style="left:1087px;top:232px;width:194px;height:21px;background:#fff"></div>
<div class="a" style="left:1282px;top:232px;width:206px;height:21px;background:#fff"></div>
<div class="cell" style="left:1090px;top:232.3px">SS</div>
<div class="a" style="left:1283.5px;top:233px;width:203px;height:19px;background:#bfdbfe;border:1px solid #dce9fb"></div>
<div class="cell" style="left:1282px;top:232.3px;width:206px;text-align:center">Edit</div>
<div class="a" style="left:1087px;top:254px;width:194px;height:22px;background:#fff"></div>
<div class="a" style="left:1282px;top:254px;width:206px;height:22px;background:#fff"></div>
<div class="cell" style="left:1090px;top:254.3px">LS</div>
<div class="a" style="left:1283.5px;top:255px;width:203px;height:20px;background:#bfdbfe;border:1px solid #dce9fb"></div>
<div class="cell" style="left:1282px;top:254.3px;width:206px;text-align:center">Edit</div>
<div class="a" style="left:1087px;top:277px;width:194px;height:21px;background:#fff"></div>
<div class="a" style="left:1282px;top:277px;width:206px;height:21px;background:#fff"></div>
<div class="cell" style="left:1090px;top:277.3px">HFR</div>
<div class="a" style="left:1283.5px;top:278px;width:203px;height:19px;background:#bfdbfe;border:1px solid #dce9fb"></div>
<div class="cell" style="left:1282px;top:277.3px;width:206px;text-align:center">Edit</div>
<div class="a" style="left:1087px;top:299px;width:194px;height:22px;background:#aac9f3"></div>
<div class="a" style="left:1282px;top:299px;width:206px;height:22px;background:#fff"></div>
<div class="cell" style="left:1090px;top:299.3px">COMM</div>
<div class="a" style="left:1283.5px;top:300px;width:203px;height:20px;background:#bfdbfe;border:1px solid #dce9fb"></div>
<div class="cell" style="left:1282px;top:299.3px;width:206px;text-align:center">Edit</div>
<div class="a" style="left:1087px;top:322px;width:194px;height:22px;background:#fff"></div>
<div class="a" style="left:1282px;top:322px;width:206px;height:22px;background:#fff"></div>
<div class="cell" style="left:1090px;top:322.3px"></div>
<div class="a" style="left:1087px;top:345px;width:194px;height:21px;background:#fff"></div>
<div class="a" style="left:1282px;top:345px;width:206px;height:21px;background:#fff"></div>
<div class="cell" style="left:1090px;top:345.3px"></div>
<div class="a" style="left:1087px;top:367px;width:194px;height:22px;background:#fff"></div>
<div class="a" style="left:1282px;top:367px;width:206px;height:22px;background:#fff"></div>
<div class="cell" style="left:1090px;top:367.3px"></div>
<div class="a" style="left:1087px;top:390px;width:194px;height:21px;background:#fff"></div>
<div class="a" style="left:1282px;top:390px;width:206px;height:21px;background:#fff"></div>
<div class="cell" style="left:1090px;top:390.3px"></div>
<div class="pn" style="left:210px;top:249.8px;width:414px;height:91.3px"></div>
<div class="t" style="left:225.8px;top:253.4px;font-weight:bold;font-size:14.5px;color:#aea79c">Denoise</div>
<div class="a" style="left:223px;top:295px;width:401px;height:46px;background:#c4d9f4"></div>
<div class="a" style="left:223px;top:273px;width:401px;height:22px;background:#fff"></div>
<div class="a" style="left:223px;top:273px;width:88.3px;height:22px;background:#bfdbfe"></div>
<div class="a" style="left:329.9px;top:273px;width:88px;height:22px;background:#bfdbfe"></div>
<div class="cell" style="left:229.3px;top:273.5px">Read Pane</div>
<div class="cell" style="left:334.8px;top:273.5px">Write Pane</div>
<div class="a" style="left:223px;top:296px;width:194px;height:22px;background:#fff"></div>
<div class="a" style="left:418px;top:296px;width:206px;height:22px;background:#fff"></div>
<div class="cell" style="left:226px;top:296.3px">Trigger</div>
<svg class="a" style="left:423.2px;top:301.5px" width="11" height="11"><circle cx="5.5" cy="5.5" r="4.8" fill="#f2f2f2" stroke="#b5b5b5" stroke-width="0.9"/></svg>
<div class="cell" style="left:439.8px;top:297px">Lum</div>
<svg class="a" style="left:524.0px;top:301.5px" width="11" height="11"><circle cx="5.5" cy="5.5" r="4.8" fill="#f2f2f2" stroke="#b5b5b5" stroke-width="0.9"/><circle cx="5.5" cy="5.5" r="2.4" fill="#1f6db0"/></svg>
<div class="cell" style="left:540.6px;top:297px">Gain</div>
<div class="a" style="left:223px;top:319px;width:194px;height:22px;background:#ebebeb"></div>
<div class="a" style="left:418px;top:319px;width:206px;height:22px;background:#fff"></div>
<div class="cell" style="left:226px;top:319.3px"></div>
<div class="a" style="left:419.5px;top:320px;width:203px;height:20px;background:#bfdbfe;border:1px solid #dce9fb"></div>
<div class="cell" style="left:418px;top:319.3px;width:206px;text-align:center">Edit</div>
<div class="pn" style="left:642px;top:249.8px;width:414px;height:91.3px"></div>
<div class="t" style="left:657.8px;top:253.4px;font-weight:bold;font-size:14.5px;color:#aea79c">Black Level</div>
<div class="a" style="left:655px;top:295px;width:401px;height:46px;background:#c4d9f4"></div>
<div class="a" style="left:655px;top:273px;width:401px;height:22px;background:#fff"></div>
<div class="a" style="left:655px;top:273px;width:88.3px;height:22px;background:#bfdbfe"></div>
<div class="a" style="left:761.9px;top:273px;width:88px;height:22px;background:#bfdbfe"></div>
<div class="cell" style="left:661.3px;top:273.5px">Read Pane</div>
<div class="cell" style="left:766.8px;top:273.5px">Write Pane</div>
<div class="a" style="left:655px;top:296px;width:194px;height:22px;background:#fff"></div>
<div class="a" style="left:850px;top:296px;width:206px;height:22px;background:#fff"></div>
<div class="cell" style="left:658px;top:296.3px">Trigger</div>
<svg class="a" style="left:855.2px;top:301.5px" width="11" height="11"><circle cx="5.5" cy="5.5" r="4.8" fill="#f2f2f2" stroke="#b5b5b5" stroke-width="0.9"/></svg>
<div class="cell" style="left:871.8000000000001px;top:297px">Lum</div>
<svg class="a" style="left:956.0px;top:301.5px" width="11" height="11"><circle cx="5.5" cy="5.5" r="4.8" fill="#f2f2f2" stroke="#b5b5b5" stroke-width="0.9"/><circle cx="5.5" cy="5.5" r="2.4" fill="#1f6db0"/></svg>
<div class="cell" style="left:972.6px;top:297px">Gain</div>
<div class="a" style="left:655px;top:319px;width:194px;height:22px;background:#ebebeb"></div>
<div class="a" style="left:850px;top:319px;width:206px;height:22px;background:#fff"></div>
<div class="cell" style="left:658px;top:319.3px"></div>
<div class="a" style="left:851.5px;top:320px;width:203px;height:20px;background:#bfdbfe;border:1px solid #dce9fb"></div>
<div class="cell" style="left:850px;top:319.3px;width:206px;text-align:center">Edit</div>
<div class="a" style="left:1073.3px;top:296.8px;width:397px;height:24.8px;border:2px solid #f20a12;z-index:20"></div>

<!-- main scrollbar -->
<div class="a" style="left:1747px;top:162.5px;width:10px;height:784px;background:#c8c8c8"></div>
<div class="a" style="left:1747px;top:162.5px;width:10px;height:27px;background:#f0f0f0"></div>
<svg class="a" style="left:1747px;top:162px" width="10" height="20"><path d="M2,11.5 L6,7.5 L10,11.5" fill="none" stroke="#333" stroke-width="1.4"/></svg>


<!-- left sliver between explorer and overlay -->
<div class="a" style="left:195.5px;top:127px;width:5.5px;height:819px;background:#bad6f9"></div>
<div class="a" style="left:201px;top:541px;width:8.5px;height:216px;background:#cdd9e8"></div>
<div class="a" style="left:206px;top:541px;width:2px;height:236px;background:#8a939f"></div>
<div class="a" style="left:201px;top:757px;width:7px;height:6px;background:#a9c6ee"></div>
<div class="a" style="left:201px;top:763px;width:7px;height:20px;background:#dcdcdc"></div>
<div class="a" style="left:201.5px;top:783px;width:8px;height:27px;background:#fff;border:1px solid #d0d8e4;border-right:none"></div>
<div class="a" style="left:202px;top:810px;width:7.5px;height:121px;background:#bfdbfe;border-top:2px solid #5b86c6;border-left:1.2px solid #5b86c6"></div>
<div class="a" style="left:202px;top:895px;width:7.5px;height:15px;background:#eeeeee"></div>
<svg class="a" style="left:204px;top:898px" width="6" height="8"><path d="M1,4 L5,1 V7 Z" fill="#333"/></svg>
<div class="a" style="left:202px;top:910px;width:7.5px;height:21px;background:#bfdbfe;border-left:1px solid #fff;border-bottom:2px solid #6b8fc6"></div>
<div class="a" style="left:207px;top:914px;width:3px;height:9px;border-radius:50%;background:#1a7a1a"></div>
<div class="a" style="left:201px;top:933px;width:8.5px;height:13px;background:#bfdbfe"></div>
<div class="a" style="left:1480px;top:325px;width:8px;height:17px;background:#e9eef5"></div>
<div class="a" style="left:1480px;top:342px;width:7.5px;height:22.5px;background:#9ab8e2;border-top:1px solid #b5cdec"></div>
<div class="a" style="left:1480px;top:364.5px;width:7.5px;height:22.5px;background:#e6e6e6;border-top:1px solid #b5cdec"></div>
<div class="a" style="left:1480px;top:387px;width:7.5px;height:22px;background:#e6e6e6;border-top:1px solid #b5cdec"></div>
<div class="a" style="left:1480px;top:409px;width:7.5px;height:24px;background:#bcd4f1;border-top:1px solid #b5cdec"></div>
<div class="a" style="left:1480px;top:433px;width:7.5px;height:19px;background:#e6e6e6;border-top:1px solid #b5cdec"></div>
<div class="a" style="left:1480px;top:452px;width:7.5px;height:23px;background:#9ab8e2;border-top:1px solid #b5cdec"></div>
<div class="a" style="left:1480px;top:475px;width:7.5px;height:22px;background:#e6e6e6;border-top:1px solid #b5cdec"></div>
<div class="a" style="left:1480px;top:497px;width:7.5px;height:23px;background:#e6e6e6;border-top:1px solid #b5cdec"></div>
<div class="a" style="left:1480px;top:520px;width:7.5px;height:21px;background:#e6e6e6;border-top:1px solid #b5cdec"></div>
<div class="a" style="left:1487.5px;top:326px;width:14px;height:215px;background:linear-gradient(90deg,rgba(150,170,200,.28),rgba(223,235,252,0))"></div>
<div class="a" style="left:206.9px;top:324.5px;width:1273.1px;height:435.5px;background:#bfdbfe;border:1px solid #7a7a7a;border-left:2px solid #8a939f"></div>
<div class="a" style="left:207.9px;top:325.5px;width:1271.1px;height:22.5px;background:#fff"></div>
<svg class="a" style="left:210px;top:328.7px" width="15" height="15"><rect x="0" y="0" width="7.5" height="7.5" fill="#ffff00"/><rect x="7.5" y="0" width="7.5" height="7.5" fill="#ff0000"/><rect x="0" y="7.5" width="7.5" height="7.5" fill="#00dd00"/><rect x="7.5" y="7.5" width="7.5" height="7.5" fill="#0000ff"/><path d="M7.5,3 L12,7.5 L7.5,12 L3,7.5 Z" fill="#fff"/></svg>
<div class="t" style="left:229.6px;top:329.5px;font-size:12px;color:#111">Dynamic Tuning - Sharpness - COMM</div>
<svg class="a" style="left:1360px;top:326px" width="110" height="20"><path d="M9,10.5 H19" stroke="#333" stroke-width="1.2"/><rect x="50.5" y="5.5" width="9" height="9" fill="none" stroke="#d0d0d0"/><path d="M92.5,5 L102.5,15 M102.5,5 L92.5,15" stroke="#333" stroke-width="1.2"/></svg>
<div class="a" style="left:226px;top:357.3px;width:1239.3px;height:25.3px;background:linear-gradient(#f3f8fe,#cfe2fb)"></div>
<div class="a" style="left:349.2px;top:359.3px;width:1px;height:21.3px;background:#fff"></div>
<div class="t" style="left:353.2px;top:362.1px;font-size:15.8px;color:#111">Dir Smth0</div>
<div class="a" style="left:473.3px;top:359.3px;width:1px;height:21.3px;background:#fff"></div>
<div class="t" style="left:477.3px;top:362.1px;font-size:15.8px;color:#111">Dir Smth1</div>
<div class="a" style="left:597.4px;top:359.3px;width:1px;height:21.3px;background:#fff"></div>
<div class="t" style="left:601.4px;top:362.1px;font-size:15.8px;color:#111">Dir Smth2</div>
<div class="a" style="left:721.6px;top:359.3px;width:1px;height:21.3px;background:#fff"></div>
<div class="t" style="left:725.6px;top:362.1px;font-size:15.8px;color:#111">Dir Smth3</div>
<div class="a" style="left:845.5px;top:359.3px;width:1px;height:21.3px;background:#fff"></div>
<div class="t" style="left:849.5px;top:362.1px;font-size:15.8px;color:#111">White Clip Para</div>
<div class="a" style="left:969.4px;top:359.3px;width:1px;height:21.3px;background:#fff"></div>
<div class="t" style="left:973.4px;top:362.1px;font-size:15.8px;color:#111">Black Clip Para</div>
<div class="a" style="left:1093.3px;top:359.3px;width:1px;height:21.3px;background:#fff"></div>
<div class="t" style="left:1097.3px;top:362.1px;font-size:15.8px;color:#111">White Clip SLP</div>
<div class="a" style="left:1217.3px;top:359.3px;width:1px;height:21.3px;background:#fff"></div>
<div class="t" style="left:1221.3px;top:362.1px;font-size:15.8px;color:#111">Black Clip SLP</div>
<div class="a" style="left:1341.3px;top:359.3px;width:1px;height:21.3px;background:#fff"></div>
<div class="t" style="left:1345.3px;top:362.1px;font-size:15.8px;color:#111">Max Clip Ratio</div>
<div class="a" style="left:226px;top:382.6px;width:1239.3px;height:23.0px;background:#bfdbfe;border-bottom:1.3px solid #7199d2"></div>
<div class="a" style="left:350.2px;top:382.6px;width:123.10000000000002px;height:21.7px;background:#fff"></div>
<div class="t" style="left:226px;top:387.20000000000005px;width:123.19999999999999px;text-align:center;font-size:15.2px;color:#111">0</div>
<div class="t" style="left:349.2px;top:387.20000000000005px;width:124.10000000000002px;text-align:center;font-size:15.2px;color:#111">0</div>
<div class="t" style="left:473.3px;top:387.20000000000005px;width:124.09999999999997px;text-align:center;font-size:15.2px;color:#111">0</div>
<div class="t" style="left:597.4px;top:387.20000000000005px;width:124.20000000000005px;text-align:center;font-size:15.2px;color:#111">0</div>
<div class="t" style="left:721.6px;top:387.20000000000005px;width:123.89999999999998px;text-align:center;font-size:15.2px;color:#111">0</div>
<div class="t" style="left:845.5px;top:387.20000000000005px;width:123.89999999999998px;text-align:center;font-size:15.2px;color:#111">30</div>
<div class="t" style="left:969.4px;top:387.20000000000005px;width:123.89999999999998px;text-align:center;font-size:15.2px;color:#111">30</div>
<div class="t" style="left:1093.3px;top:387.20000000000005px;width:124.0px;text-align:center;font-size:15.2px;color:#111">1</div>
<div class="t" style="left:1217.3px;top:387.20000000000005px;width:124.0px;text-align:center;font-size:15.2px;color:#111">1</div>
<div class="t" style="left:1341.3px;top:387.20000000000005px;width:124.0px;text-align:center;font-size:15.2px;color:#111">1</div>
<div class="a" style="left:226px;top:405.6px;width:1239.3px;height:23.0px;background:#fff;border-bottom:1.3px solid #7199d2"></div>
<div class="t" style="left:226px;top:410.20000000000005px;width:123.19999999999999px;text-align:center;font-size:15.2px;color:#111">1</div>
<div class="t" style="left:349.2px;top:410.20000000000005px;width:124.10000000000002px;text-align:center;font-size:15.2px;color:#111">0</div>
<div class="t" style="left:473.3px;top:410.20000000000005px;width:124.09999999999997px;text-align:center;font-size:15.2px;color:#111">0</div>
<div class="t" style="left:597.4px;top:410.20000000000005px;width:124.20000000000005px;text-align:center;font-size:15.2px;color:#111">0</div>
<div class="t" style="left:721.6px;top:410.20000000000005px;width:123.89999999999998px;text-align:center;font-size:15.2px;color:#111">0</div>
<div class="t" style="left:845.5px;top:410.20000000000005px;width:123.89999999999998px;text-align:center;font-size:15.2px;color:#111">30</div>
<div class="t" style="left:969.4px;top:410.20000000000005px;width:123.89999999999998px;text-align:center;font-size:15.2px;color:#111">30</div>
<div class="t" style="left:1093.3px;top:410.20000000000005px;width:124.0px;text-align:center;font-size:15.2px;color:#111">1</div>
<div class="t" style="left:1217.3px;top:410.20000000000005px;width:124.0px;text-align:center;font-size:15.2px;color:#111">1</div>
<div class="t" style="left:1341.3px;top:410.20000000000005px;width:124.0px;text-align:center;font-size:15.2px;color:#111">1</div>
<div class="a" style="left:226px;top:428.6px;width:1239.3px;height:23.0px;background:#fff;border-bottom:1.3px solid #7199d2"></div>
<div class="t" style="left:226px;top:433.20000000000005px;width:123.19999999999999px;text-align:center;font-size:15.2px;color:#111">2</div>
<div class="t" style="left:349.2px;top:433.20000000000005px;width:124.10000000000002px;text-align:center;font-size:15.2px;color:#111">0</div>
<div class="t" style="left:473.3px;top:433.20000000000005px;width:124.09999999999997px;text-align:center;font-size:15.2px;color:#111">0</div>
<div class="t" style="left:597.4px;top:433.20000000000005px;width:124.20000000000005px;text-align:center;font-size:15.2px;color:#111">0</div>
<div class="t" style="left:721.6px;top:433.20000000000005px;width:123.89999999999998px;text-align:center;font-size:15.2px;color:#111">0</div>
<div class="t" style="left:845.5px;top:433.20000000000005px;width:123.89999999999998px;text-align:center;font-size:15.2px;color:#111">30</div>
<div class="t" style="left:969.4px;top:433.20000000000005px;width:123.89999999999998px;text-align:center;font-size:15.2px;color:#111">30</div>
<div class="t" style="left:1093.3px;top:433.20000000000005px;width:124.0px;text-align:center;font-size:15.2px;color:#111">1</div>
<div class="t" style="left:1217.3px;top:433.20000000000005px;width:124.0px;text-align:center;font-size:15.2px;color:#111">1</div>
<div class="t" style="left:1341.3px;top:433.20000000000005px;width:124.0px;text-align:center;font-size:15.2px;color:#111">1</div>
<div class="a" style="left:226px;top:451.6px;width:1239.3px;height:23.0px;background:#fff;border-bottom:1.3px solid #7199d2"></div>
<div class="t" style="left:226px;top:456.20000000000005px;width:123.19999999999999px;text-align:center;font-size:15.2px;color:#111">3</div>
<div class="t" style="left:349.2px;top:456.20000000000005px;width:124.10000000000002px;text-align:center;font-size:15.2px;color:#111">0</div>
<div class="t" style="left:473.3px;top:456.20000000000005px;width:124.09999999999997px;text-align:center;font-size:15.2px;color:#111">0</div>
<div class="t" style="left:597.4px;top:456.20000000000005px;width:124.20000000000005px;text-align:center;font-size:15.2px;color:#111">0</div>
<div class="t" style="left:721.6px;top:456.20000000000005px;width:123.89999999999998px;text-align:center;font-size:15.2px;color:#111">0</div>
<div class="t" style="left:845.5px;top:456.20000000000005px;width:123.89999999999998px;text-align:center;font-size:15.2px;color:#111">30</div>
<div class="t" style="left:969.4px;top:456.20000000000005px;width:123.89999999999998px;text-align:center;font-size:15.2px;color:#111">30</div>
<div class="t" style="left:1093.3px;top:456.20000000000005px;width:124.0px;text-align:center;font-size:15.2px;color:#111">1</div>
<div class="t" style="left:1217.3px;top:456.20000000000005px;width:124.0px;text-align:center;font-size:15.2px;color:#111">1</div>
<div class="t" style="left:1341.3px;top:456.20000000000005px;width:124.0px;text-align:center;font-size:15.2px;color:#111">1</div>
<div class="a" style="left:226px;top:474.6px;width:1239.3px;height:23.0px;background:#fff;border-bottom:1.3px solid #7199d2"></div>
<div class="t" style="left:226px;top:479.20000000000005px;width:123.19999999999999px;text-align:center;font-size:15.2px;color:#111">4</div>
<div class="t" style="left:349.2px;top:479.20000000000005px;width:124.10000000000002px;text-align:center;font-size:15.2px;color:#111">0</div>
<div class="t" style="left:473.3px;top:479.20000000000005px;width:124.09999999999997px;text-align:center;font-size:15.2px;color:#111">0</div>
<div class="t" style="left:597.4px;top:479.20000000000005px;width:124.20000000000005px;text-align:center;font-size:15.2px;color:#111">0</div>
<div class="t" style="left:721.6px;top:479.20000000000005px;width:123.89999999999998px;text-align:center;font-size:15.2px;color:#111">0</div>
<div class="t" style="left:845.5px;top:479.20000000000005px;width:123.89999999999998px;text-align:center;font-size:15.2px;color:#111">30</div>
<div class="t" style="left:969.4px;top:479.20000000000005px;width:123.89999999999998px;text-align:center;font-size:15.2px;color:#111">30</div>
<div class="t" style="left:1093.3px;top:479.20000000000005px;width:124.0px;text-align:center;font-size:15.2px;color:#111">1</div>
<div class="t" style="left:1217.3px;top:479.20000000000005px;width:124.0px;text-align:center;font-size:15.2px;color:#111">1</div>
<div class="t" style="left:1341.3px;top:479.20000000000005px;width:124.0px;text-align:center;font-size:15.2px;color:#111">1</div>
<div class="a" style="left:226px;top:497.6px;width:1239.3px;height:23.0px;background:#fff;border-bottom:1.3px solid #7199d2"></div>
<div class="t" style="left:226px;top:502.20000000000005px;width:123.19999999999999px;text-align:center;font-size:15.2px;color:#111">5</div>
<div class="t" style="left:349.2px;top:502.20000000000005px;width:124.10000000000002px;text-align:center;font-size:15.2px;color:#111">0</div>
<div class="t" style="left:473.3px;top:502.20000000000005px;width:124.09999999999997px;text-align:center;font-size:15.2px;color:#111">0</div>
<div class="t" style="left:597.4px;top:502.20000000000005px;width:124.20000000000005px;text-align:center;font-size:15.2px;color:#111">0</div>
<div class="t" style="left:721.6px;top:502.20000000000005px;width:123.89999999999998px;text-align:center;font-size:15.2px;color:#111">0</div>
<div class="t" style="left:845.5px;top:502.20000000000005px;width:123.89999999999998px;text-align:center;font-size:15.2px;color:#111">30</div>
<div class="t" style="left:969.4px;top:502.20000000000005px;width:123.89999999999998px;text-align:center;font-size:15.2px;color:#111">30</div>
<div class="t" style="left:1093.3px;top:502.20000000000005px;width:124.0px;text-align:center;font-size:15.2px;color:#111">1</div>
<div class="t" style="left:1217.3px;top:502.20000000000005px;width:124.0px;text-align:center;font-size:15.2px;color:#111">1</div>
<div class="t" style="left:1341.3px;top:502.20000000000005px;width:124.0px;text-align:center;font-size:15.2px;color:#111">1</div>
<div class="a" style="left:226px;top:520.6px;width:1239.3px;height:23.0px;background:#fff;border-bottom:1.3px solid #7199d2"></div>
<div class="t" style="left:226px;top:525.2px;width:123.19999999999999px;text-align:center;font-size:15.2px;color:#111">6</div>
<div class="t" style="left:349.2px;top:525.2px;width:124.10000000000002px;text-align:center;font-size:15.2px;color:#111">0</div>
<div class="t" style="left:473.3px;top:525.2px;width:124.09999999999997px;text-align:center;font-size:15.2px;color:#111">0</div>
<div class="t" style="left:597.4px;top:525.2px;width:124.20000000000005px;text-align:center;font-size:15.2px;color:#111">0</div>
<div class="t" style="left:721.6px;top:525.2px;width:123.89999999999998px;text-align:center;font-size:15.2px;color:#111">0</div>
<div class="t" style="left:845.5px;top:525.2px;width:123.89999999999998px;text-align:center;font-size:15.2px;color:#111">30</div>
<div class="t" style="left:969.4px;top:525.2px;width:123.89999999999998px;text-align:center;font-size:15.2px;color:#111">30</div>
<div class="t" style="left:1093.3px;top:525.2px;width:124.0px;text-align:center;font-size:15.2px;color:#111">1</div>
<div class="t" style="left:1217.3px;top:525.2px;width:124.0px;text-align:center;font-size:15.2px;color:#111">1</div>
<div class="t" style="left:1341.3px;top:525.2px;width:124.0px;text-align:center;font-size:15.2px;color:#111">1</div>
<div class="a" style="left:348.9px;top:382.6px;width:1.3px;height:161.0px;background:#7199d2"></div>
<div class="a" style="left:473.0px;top:382.6px;width:1.3px;height:161.0px;background:#7199d2"></div>
<div class="a" style="left:597.1px;top:382.6px;width:1.3px;height:161.0px;background:#7199d2"></div>
<div class="a" style="left:721.3000000000001px;top:382.6px;width:1.3px;height:161.0px;background:#7199d2"></div>
<div class="a" style="left:845.2px;top:382.6px;width:1.3px;height:161.0px;background:#7199d2"></div>
<div class="a" style="left:969.1px;top:382.6px;width:1.3px;height:161.0px;background:#7199d2"></div>
<div class="a" style="left:1093.0px;top:382.6px;width:1.3px;height:161.0px;background:#7199d2"></div>
<div class="a" style="left:1217.0px;top:382.6px;width:1.3px;height:161.0px;background:#7199d2"></div>
<div class="a" style="left:1341.0px;top:382.6px;width:1.3px;height:161.0px;background:#7199d2"></div>
<div class="a" style="left:1465.0px;top:382.6px;width:1.3px;height:161.0px;background:#7199d2"></div>
<div class="a" style="left:346px;top:353px;width:496.79999999999995px;height:190.89999999999998px;border:2px solid #ff0000;z-index:20"></div>
<div class="a" style="left:844px;top:354.1px;width:248.79999999999995px;height:185.79999999999995px;border:2px solid #ff0000;z-index:20"></div>
<div class="a" style="left:1096px;top:352.9px;width:368px;height:187.89999999999998px;border:2px solid #ff0000;z-index:20"></div>
<svg class="a" style="left:816.5px;top:333px;z-index:20" width="22" height="22"><circle cx="11" cy="11" r="7.7" fill="none" stroke="#ff0000" stroke-width="1.3"/><text x="11" y="15.5" text-anchor="middle" font-family="Liberation Sans" font-size="12.5" fill="#ff0000">1</text></svg>
<svg class="a" style="left:1067.5px;top:334.4px;z-index:20" width="22" height="22"><circle cx="11" cy="11" r="7.5" fill="none" stroke="#ff0000" stroke-width="1.3"/><text x="11" y="15.3" text-anchor="middle" font-family="Liberation Sans" font-size="12" fill="#ff0000">2</text></svg>
<svg class="a" style="left:1425.9px;top:332.8px;z-index:20" width="22" height="22"><circle cx="11" cy="11" r="9.2" fill="none" stroke="#ff0000" stroke-width="1.3"/><text x="11" y="16.2" text-anchor="middle" font-family="Liberation Sans" font-size="14.5" fill="#ff0000">3</text></svg>
<div class="a" style="left:209.5px;top:541.0px;width:1547.5px;height:405.0px;background:#fff;overflow:hidden"><svg width="1547.5" height="405.0" style="display:block"><path fill="#e5eafc" d="M-12.08,-14.70l14.698,-14.698v14.698l-14.698,14.698zM-12.08,14.70l14.698,-14.698v14.698l-14.698,14.698zM-12.08,44.09l14.698,-14.698v14.698l-14.698,14.698zM-12.08,73.49l14.698,-14.698v14.698l-14.698,14.698zM-12.08,102.89l14.698,-14.698v14.698l-14.698,14.698zM-12.08,132.28l14.698,-14.698v14.698l-14.698,14.698zM-12.08,161.68l14.698,-14.698v14.698l-14.698,14.698zM-12.08,191.07l14.698,-14.698v14.698l-14.698,14.698zM-12.08,220.47l14.698,-14.698v14.698l-14.698,14.698zM-12.08,249.87l14.698,-14.698v14.698l-14.698,14.698zM-12.08,279.26l14.698,-14.698v14.698l-14.698,14.698zM-12.08,308.66l14.698,-14.698v14.698l-14.698,14.698zM-12.08,338.05l14.698,-14.698v14.698l-14.698,14.698zM-12.08,367.45l14.698,-14.698v14.698l-14.698,14.698zM-12.08,396.85l14.698,-14.698v14.698l-14.698,14.698zM2.62,-14.70l14.698,-14.698v14.698l-14.698,14.698zM2.62,14.70l14.698,-14.698v14.698l-14.698,14.698zM2.62,44.09l14.698,-14.698v14.698l-14.698,14.698zM2.62,73.49l14.698,-14.698v14.698l-14.698,14.698zM2.62,102.89l14.698,-14.698v14.698l-14.698,14.698zM2.62,132.28l14.698,-14.698v14.698l-14.698,14.698zM2.62,161.68l14.698,-14.698v14.698l-14.698,14.698zM2.62,191.07l14.698,-14.698v14.698l-14.698,14.698zM2.62,220.47l14.698,-14.698v14.698l-14.698,14.698zM2.62,249.87l14.698,-14.698v14.698l-14.698,14.698zM2.62,279.26l14.698,-14.698v14.698l-14.698,14.698zM2.62,308.66l14.698,-14.698v14.698l-14.698,14.698zM2.62,338.05l14.698,-14.698v14.698l-14.698,14.698zM2.62,367.45l14.698,-14.698v14.698l-14.698,14.698zM2.62,396.85l14.698,-14.698v14.698l-14.698,14.698zM17.32,-14.70l14.698,-14.698v14.698l-14.698,14.698zM17.32,14.70l14.698,-14.698v14.698l-14.698,14.698zM17.32,44.09l14.698,-14.698v14.698l-14.698,14.698zM17.32,73.49l14.698,-14.698v14.698l-14.698,14.698zM17.32,102.89l14.698,-14.698v14.698l-14.698,14.698zM17.32,132.28l14.698,-14.698v14.698l-14.698,14.698zM17.32,161.68l14.698,-14.698v14.698l-14.698,14.698zM17.32,191.07l14.698,-14.698v14.698l-14.698,14.698zM17.32,220.47l14.698,-14.698v14.698l-14.698,14.698zM17.32,249.87l14.698,-14.698v14.698l-14.698,14.698zM17.32,279.26l14.698,-14.698v14.698l-14.698,14.698zM17.32,308.66l14.698,-14.698v14.698l-14.698,14.698zM17.32,338.05l14.698,-14.698v14.698l-14.698,14.698zM17.32,367.45l14.698,-14.698v14.698l-14.698,14.698zM17.32,396.85l14.698,-14.698v14.698l-14.698,14.698zM32.02,-14.70l14.698,-14.698v14.698l-14.698,14.698zM32.02,14.70l14.698,-14.698v14.698l-14.698,14.698zM32.02,44.09l14.698,-14.698v14.698l-14.698,14.698zM32.02,73.49l14.698,-14.698v14.698l-14.698,14.698zM32.02,102.89l14.698,-14.698v14.698l-14.698,14.698zM32.02,132.28l14.698,-14.698v14.698l-14.698,14.698zM32.02,161.68l14.698,-14.698v14.698l-14.698,14.698zM32.02,191.07l14.698,-14.698v14.698l-14.698,14.698zM32.02,220.47l14.698,-14.698v14.698l-14.698,14.698zM32.02,249.87l14.698,-14.698v14.698l-14.698,14.698zM32.02,279.26l14.698,-14.698v14.698l-14.698,14.698zM32.02,308.66l14.698,-14.698v14.698l-14.698,14.698zM32.02,338.05l14.698,-14.698v14.698l-14.698,14.698zM32.02,367.45l14.698,-14.698v14.698l-14.698,14.698zM32.02,396.85l14.698,-14.698v14.698l-14.698,14.698zM46.71,-14.70l14.698,-14.698v14.698l-14.698,14.698zM46.71,14.70l14.698,-14.698v14.698l-14.698,14.698zM46.71,44.09l14.698,-14.698v14.698l-14.698,14.698zM46.71,73.49l14.698,-14.698v14.698l-14.698,14.698zM46.71,102.89l14.698,-14.698v14.698l-14.698,14.698zM46.71,132.28l14.698,-14.698v14.698l-14.698,14.698zM46.71,161.68l14.698,-14.698v14.698l-14.698,14.698zM46.71,191.07l14.698,-14.698v14.698l-14.698,14.698zM46.71,220.47l14.698,-14.698v14.698l-14.698,14.698zM46.71,249.87l14.698,-14.698v14.698l-14.698,14.698zM46.71,279.26l14.698,-14.698v14.698l-14.698,14.698zM46.71,308.66l14.698,-14.698v14.698l-14.698,14.698zM46.71,338.05l14.698,-14.698v14.698l-14.698,14.698zM46.71,367.45l14.698,-14.698v14.698l-14.698,14.698zM46.71,396.85l14.698,-14.698v14.698l-14.698,14.698zM61.41,-14.70l14.698,-14.698v14.698l-14.698,14.698zM61.41,14.70l14.698,-14.698v14.698l-14.698,14.698zM61.41,44.09l14.698,-14.698v14.698l-14.698,14.698zM61.41,73.49l14.698,-14.698v14.698l-14.698,14.698zM61.41,102.89l14.698,-14.698v14.698l-14.698,14.698zM61.41,132.28l14.698,-14.698v14.698l-14.698,14.698zM61.41,161.68l14.698,-14.698v14.698l-14.698,14.698zM61.41,191.07l14.698,-14.698v14.698l-14.698,14.698zM61.41,220.47l14.698,-14.698v14.698l-14.698,14.698zM61.41,249.87l14.698,-14.698v14.698l-14.698,14.698zM61.41,279.26l14.698,-14.698v14.698l-14.698,14.698zM61.41,308.66l14.698,-14.698v14.698l-14.698,14.698zM61.41,338.05l14.698,-14.698v14.698l-14.698,14.698zM61.41,367.45l14.698,-14.698v14.698l-14.698,14.698zM61.41,396.85l14.698,-14.698v14.698l-14.698,14.698zM76.11,-14.70l14.698,-14.698v14.698l-14.698,14.698zM76.11,14.70l14.698,-14.698v14.698l-14.698,14.698zM76.11,44.09l14.698,-14.698v14.698l-14.698,14.698zM76.11,73.49l14.698,-14.698v14.698l-14.698,14.698zM76.11,102.89l14.698,-14.698v14.698l-14.698,14.698zM76.11,132.28l14.698,-14.698v14.698l-14.698,14.698zM76.11,161.68l14.698,-14.698v14.698l-14.698,14.698zM76.11,191.07l14.698,-14.698v14.698l-14.698,14.698zM76.11,220.47l14.698,-14.698v14.698l-14.698,14.698zM76.11,249.87l14.698,-14.698v14.698l-14.698,14.698zM76.11,279.26l14.698,-14.698v14.698l-14.698,14.698zM76.11,308.66l14.698,-14.698v14.698l-14.698,14.698zM76.11,338.05l14.698,-14.698v14.698l-14.698,14.698zM76.11,367.45l14.698,-14.698v14.698l-14.698,14.698zM76.11,396.85l14.698,-14.698v14.698l-14.698,14.698zM90.81,-14.70l14.698,-14.698v14.698l-14.698,14.698zM90.81,14.70l14.698,-14.698v14.698l-14.698,14.698zM90.81,44.09l14.698,-14.698v14.698l-14.698,14.698zM90.81,73.49l14.698,-14.698v14.698l-14.698,14.698zM90.81,102.89l14.698,-14.698v14.698l-14.698,14.698zM90.81,132.28l14.698,-14.698v14.698l-14.698,14.698zM90.81,161.68l14.698,-14.698v14.698l-14.698,14.698zM90.81,191.07l14.698,-14.698v14.698l-14.698,14.698zM90.81,220.47l14.698,-14.698v14.698l-14.698,14.698zM90.81,249.87l14.698,-14.698v14.698l-14.698,14.698zM90.81,279.26l14.698,-14.698v14.698l-14.698,14.698zM90.81,308.66l14.698,-14.698v14.698l-14.698,14.698zM90.81,338.05l14.698,-14.698v14.698l-14.698,14.698zM90.81,367.45l14.698,-14.698v14.698l-14.698,14.698zM90.81,396.85l14.698,-14.698v14.698l-14.698,14.698zM105.51,-14.70l14.698,-14.698v14.698l-14.698,14.698zM105.51,14.70l14.698,-14.698v14.698l-14.698,14.698zM105.51,44.09l14.698,-14.698v14.698l-14.698,14.698zM105.51,73.49l14.698,-14.698v14.698l-14.698,14.698zM105.51,102.89l14.698,-14.698v14.698l-14.698,14.698zM105.51,132.28l14.698,-14.698v14.698l-14.698,14.698zM105.51,161.68l14.698,-14.698v14.698l-14.698,14.698zM105.51,191.07l14.698,-14.698v14.698l-14.698,14.698zM105.51,220.47l14.698,-14.698v14.698l-14.698,14.698zM105.51,249.87l14.698,-14.698v14.698l-14.698,14.698zM105.51,279.26l14.698,-14.698v14.698l-14.698,14.698zM105.51,308.66l14.698,-14.698v14.698l-14.698,14.698zM105.51,338.05l14.698,-14.698v14.698l-14.698,14.698zM105.51,367.45l14.698,-14.698v14.698l-14.698,14.698zM105.51,396.85l14.698,-14.698v14.698l-14.698,14.698zM120.20,-14.70l14.698,-14.698v14.698l-14.698,14.698zM120.20,14.70l14.698,-14.698v14.698l-14.698,14.698zM120.20,44.09l14.698,-14.698v14.698l-14.698,14.698zM120.20,73.49l14.698,-14.698v14.698l-14.698,14.698zM120.20,102.89l14.698,-14.698v14.698l-14.698,14.698zM120.20,132.28l14.698,-14.698v14.698l-14.698,14.698zM120.20,161.68l14.698,-14.698v14.698l-14.698,14.698zM120.20,191.07l14.698,-14.698v14.698l-14.698,14.698zM120.20,220.47l14.698,-14.698v14.698l-14.698,14.698zM120.20,249.87l14.698,-14.698v14.698l-14.698,14.698zM120.20,279.26l14.698,-14.698v14.698l-14.698,14.698zM120.20,308.66l14.698,-14.698v14.698l-14.698,14.698zM120.20,338.05l14.698,-14.698v14.698l-14.698,14.698zM120.20,367.45l14.698,-14.698v14.698l-14.698,14.698zM120.20,396.85l14.698,-14.698v14.698l-14.698,14.698zM134.90,-14.70l14.698,-14.698v14.698l-14.698,14.698zM134.90,14.70l14.698,-14.698v14.698l-14.698,14.698zM134.90,44.09l14.698,-14.698v14.698l-14.698,14.698zM134.90,73.49l14.698,-14.698v14.698l-14.698,14.698zM134.90,102.89l14.698,-14.698v14.698l-14.698,14.698zM134.90,132.28l14.698,-14.698v14.698l-14.698,14.698zM134.90,161.68l14.698,-14.698v14.698l-14.698,14.698zM134.90,191.07l14.698,-14.698v14.698l-14.698,14.698zM134.90,220.47l14.698,-14.698v14.698l-14.698,14.698zM134.90,249.87l14.698,-14.698v14.698l-14.698,14.698zM134.90,279.26l14.698,-14.698v14.698l-14.698,14.698zM134.90,308.66l14.698,-14.698v14.698l-14.698,14.698zM134.90,338.05l14.698,-14.698v14.698l-14.698,14.698zM134.90,367.45l14.698,-14.698v14.698l-14.698,14.698zM134.90,396.85l14.698,-14.698v14.698l-14.698,14.698zM149.60,-14.70l14.698,-14.698v14.698l-14.698,14.698zM149.60,14.70l14.698,-14.698v14.698l-14.698,14.698zM149.60,44.09l14.698,-14.698v14.698l-14.698,14.698zM149.60,73.49l14.698,-14.698v14.698l-14.698,14.698zM149.60,102.89l14.698,-14.698v14.698l-14.698,14.698zM149.60,132.28l14.698,-14.698v14.698l-14.698,14.698zM149.60,161.68l14.698,-14.698v14.698l-14.698,14.698zM149.60,191.07l14.698,-14.698v14.698l-14.698,14.698zM149.60,220.47l14.698,-14.698v14.698l-14.698,14.698zM149.60,249.87l14.698,-14.698v14.698l-14.698,14.698zM149.60,279.26l14.698,-14.698v14.698l-14.698,14.698zM149.60,308.66l14.698,-14.698v14.698l-14.698,14.698zM149.60,338.05l14.698,-14.698v14.698l-14.698,14.698zM149.60,367.45l14.698,-14.698v14.698l-14.698,14.698zM149.60,396.85l14.698,-14.698v14.698l-14.698,14.698zM164.30,-14.70l14.698,-14.698v14.698l-14.698,14.698zM164.30,14.70l14.698,-14.698v14.698l-14.698,14.698zM164.30,44.09l14.698,-14.698v14.698l-14.698,14.698zM164.30,73.49l14.698,-14.698v14.698l-14.698,14.698zM164.30,102.89l14.698,-14.698v14.698l-14.698,14.698zM164.30,132.28l14.698,-14.698v14.698l-14.698,14.698zM164.30,161.68l14.698,-14.698v14.698l-14.698,14.698zM164.30,191.07l14.698,-14.698v14.698l-14.698,14.698zM164.30,220.47l14.698,-14.698v14.698l-14.698,14.698zM164.30,249.87l14.698,-14.698v14.698l-14.698,14.698zM164.30,279.26l14.698,-14.698v14.698l-14.698,14.698zM164.30,308.66l14.698,-14.698v14.698l-14.698,14.698zM164.30,338.05l14.698,-14.698v14.698l-14.698,14.698zM164.30,367.45l14.698,-14.698v14.698l-14.698,14.698zM164.30,396.85l14.698,-14.698v14.698l-14.698,14.698zM179.00,-14.70l14.698,-14.698v14.698l-14.698,14.698zM179.00,14.70l14.698,-14.698v14.698l-14.698,14.698zM179.00,44.09l14.698,-14.698v14.698l-14.698,14.698zM179.00,73.49l14.698,-14.698v14.698l-14.698,14.698zM179.00,102.89l14.698,-14.698v14.698l-14.698,14.698zM179.00,132.28l14.698,-14.698v14.698l-14.698,14.698zM179.00,161.68l14.698,-14.698v14.698l-14.698,14.698zM179.00,191.07l14.698,-14.698v14.698l-14.698,14.698zM179.00,220.47l14.698,-14.698v14.698l-14.698,14.698zM179.00,249.87l14.698,-14.698v14.698l-14.698,14.698zM179.00,279.26l14.698,-14.698v14.698l-14.698,14.698zM179.00,308.66l14.698,-14.698v14.698l-14.698,14.698zM179.00,338.05l14.698,-14.698v14.698l-14.698,14.698zM179.00,367.45l14.698,-14.698v14.698l-14.698,14.698zM179.00,396.85l14.698,-14.698v14.698l-14.698,14.698zM193.69,-14.70l14.698,-14.698v14.698l-14.698,14.698zM193.69,14.70l14.698,-14.698v14.698l-14.698,14.698zM193.69,44.09l14.698,-14.698v14.698l-14.698,14.698zM193.69,73.49l14.698,-14.698v14.698l-14.698,14.698zM193.69,102.89l14.698,-14.698v14.698l-14.698,14.698zM193.69,132.28l14.698,-14.698v14.698l-14.698,14.698zM193.69,161.68l14.698,-14.698v14.698l-14.698,14.698zM193.69,191.07l14.698,-14.698v14.698l-14.698,14.698zM193.69,220.47l14.698,-14.698v14.698l-14.698,14.698zM193.69,249.87l14.698,-14.698v14.698l-14.698,14.698zM193.69,279.26l14.698,-14.698v14.698l-14.698,14.698zM193.69,308.66l14.698,-14.698v14.698l-14.698,14.698zM193.69,338.05l14.698,-14.698v14.698l-14.698,14.698zM193.69,367.45l14.698,-14.698v14.698l-14.698,14.698zM193.69,396.85l14.698,-14.698v14.698l-14.698,14.698zM208.39,-14.70l14.698,-14.698v14.698l-14.698,14.698zM208.39,14.70l14.698,-14.698v14.698l-14.698,14.698zM208.39,44.09l14.698,-14.698v14.698l-14.698,14.698zM208.39,73.49l14.698,-14.698v14.698l-14.698,14.698zM208.39,102.89l14.698,-14.698v14.698l-14.698,14.698zM208.39,132.28l14.698,-14.698v14.698l-14.698,14.698zM208.39,161.68l14.698,-14.698v14.698l-14.698,14.698zM208.39,191.07l14.698,-14.698v14.698l-14.698,14.698zM208.39,220.47l14.698,-14.698v14.698l-14.698,14.698zM208.39,249.87l14.698,-14.698v14.698l-14.698,14.698zM208.39,279.26l14.698,-14.698v14.698l-14.698,14.698zM208.39,308.66l14.698,-14.698v14.698l-14.698,14.698zM208.39,338.05l14.698,-14.698v14.698l-14.698,14.698zM208.39,367.45l14.698,-14.698v14.698l-14.698,14.698zM208.39,396.85l14.698,-14.698v14.698l-14.698,14.698zM223.09,-14.70l14.698,-14.698v14.698l-14.698,14.698zM223.09,14.70l14.698,-14.698v14.698l-14.698,14.698zM223.09,44.09l14.698,-14.698v14.698l-14.698,14.698zM223.09,73.49l14.698,-14.698v14.698l-14.698,14.698zM223.09,102.89l14.698,-14.698v14.698l-14.698,14.698zM223.09,132.28l14.698,-14.698v14.698l-14.698,14.698zM223.09,161.68l14.698,-14.698v14.698l-14.698,14.698zM223.09,191.07l14.698,-14.698v14.698l-14.698,14.698zM223.09,220.47l14.698,-14.698v14.698l-14.698,14.698zM223.09,249.87l14.698,-14.698v14.698l-14.698,14.698zM223.09,279.26l14.698,-14.698v14.698l-14.698,14.698zM223.09,308.66l14.698,-14.698v14.698l-14.698,14.698zM223.09,338.05l14.698,-14.698v14.698l-14.698,14.698zM223.09,367.45l14.698,-14.698v14.698l-14.698,14.698zM223.09,396.85l14.698,-14.698v14.698l-14.698,14.698zM237.79,-14.70l14.698,-14.698v14.698l-14.698,14.698zM237.79,14.70l14.698,-14.698v14.698l-14.698,14.698zM237.79,44.09l14.698,-14.698v14.698l-14.698,14.698zM237.79,73.49l14.698,-14.698v14.698l-14.698,14.698zM237.79,102.89l14.698,-14.698v14.698l-14.698,14.698zM237.79,132.28l14.698,-14.698v14.698l-14.698,14.698zM237.79,161.68l14.698,-14.698v14.698l-14.698,14.698zM237.79,191.07l14.698,-14.698v14.698l-14.698,14.698zM237.79,220.47l14.698,-14.698v14.698l-14.698,14.698zM237.79,249.87l14.698,-14.698v14.698l-14.698,14.698zM237.79,279.26l14.698,-14.698v14.698l-14.698,14.698zM237.79,308.66l14.698,-14.698v14.698l-14.698,14.698zM237.79,338.05l14.698,-14.698v14.698l-14.698,14.698zM237.79,367.45l14.698,-14.698v14.698l-14.698,14.698zM237.79,396.85l14.698,-14.698v14.698l-14.698,14.698zM252.49,-14.70l14.698,-14.698v14.698l-14.698,14.698zM252.49,14.70l14.698,-14.698v14.698l-14.698,14.698zM252.49,44.09l14.698,-14.698v14.698l-14.698,14.698zM252.49,73.49l14.698,-14.698v14.698l-14.698,14.698zM252.49,102.89l14.698,-14.698v14.698l-14.698,14.698zM252.49,132.28l14.698,-14.698v14.698l-14.698,14.698zM252.49,161.68l14.698,-14.698v14.698l-14.698,14.698zM252.49,191.07l14.698,-14.698v14.698l-14.698,14.698zM252.49,220.47l14.698,-14.698v14.698l-14.698,14.698zM252.49,249.87l14.698,-14.698v14.698l-14.698,14.698zM252.49,279.26l14.698,-14.698v14.698l-14.698,14.698zM252.49,308.66l14.698,-14.698v14.698l-14.698,14.698zM252.49,338.05l14.698,-14.698v14.698l-14.698,14.698zM252.49,367.45l14.698,-14.698v14.698l-14.698,14.698zM252.49,396.85l14.698,-14.698v14.698l-14.698,14.698zM267.18,-14.70l14.698,-14.698v14.698l-14.698,14.698zM267.18,14.70l14.698,-14.698v14.698l-14.698,14.698zM267.18,44.09l14.698,-14.698v14.698l-14.698,14.698zM267.18,73.49l14.698,-14.698v14.698l-14.698,14.698zM267.18,102.89l14.698,-14.698v14.698l-14.698,14.698zM267.18,132.28l14.698,-14.698v14.698l-14.698,14.698zM267.18,161.68l14.698,-14.698v14.698l-14.698,14.698zM267.18,191.07l14.698,-14.698v14.698l-14.698,14.698zM267.18,220.47l14.698,-14.698v14.698l-14.698,14.698zM267.18,249.87l14.698,-14.698v14.698l-14.698,14.698zM267.18,279.26l14.698,-14.698v14.698l-14.698,14.698zM267.18,308.66l14.698,-14.698v14.698l-14.698,14.698zM267.18,338.05l14.698,-14.698v14.698l-14.698,14.698zM267.18,367.45l14.698,-14.698v14.698l-14.698,14.698zM267.18,396.85l14.698,-14.698v14.698l-14.698,14.698zM281.88,-14.70l14.698,-14.698v14.698l-14.698,14.698zM281.88,14.70l14.698,-14.698v14.698l-14.698,14.698zM281.88,44.09l14.698,-14.698v14.698l-14.698,14.698zM281.88,73.49l14.698,-14.698v14.698l-14.698,14.698zM281.88,102.89l14.698,-14.698v14.698l-14.698,14.698zM281.88,132.28l14.698,-14.698v14.698l-14.698,14.698zM281.88,161.68l14.698,-14.698v14.698l-14.698,14.698zM281.88,191.07l14.698,-14.698v14.698l-14.698,14.698zM281.88,220.47l14.698,-14.698v14.698l-14.698,14.698zM281.88,249.87l14.698,-14.698v14.698l-14.698,14.698zM281.88,279.26l14.698,-14.698v14.698l-14.698,14.698zM281.88,308.66l14.698,-14.698v14.698l-14.698,14.698zM281.88,338.05l14.698,-14.698v14.698l-14.698,14.698zM281.88,367.45l14.698,-14.698v14.698l-14.698,14.698zM281.88,396.85l14.698,-14.698v14.698l-14.698,14.698zM296.58,-14.70l14.698,-14.698v14.698l-14.698,14.698zM296.58,14.70l14.698,-14.698v14.698l-14.698,14.698zM296.58,44.09l14.698,-14.698v14.698l-14.698,14.698zM296.58,73.49l14.698,-14.698v14.698l-14.698,14.698zM296.58,102.89l14.698,-14.698v14.698l-14.698,14.698zM296.58,132.28l14.698,-14.698v14.698l-14.698,14.698zM296.58,161.68l14.698,-14.698v14.698l-14.698,14.698zM296.58,191.07l14.698,-14.698v14.698l-14.698,14.698zM296.58,220.47l14.698,-14.698v14.698l-14.698,14.698zM296.58,249.87l14.698,-14.698v14.698l-14.698,14.698zM296.58,279.26l14.698,-14.698v14.698l-14.698,14.698zM296.58,308.66l14.698,-14.698v14.698l-14.698,14.698zM296.58,338.05l14.698,-14.698v14.698l-14.698,14.698zM296.58,367.45l14.698,-14.698v14.698l-14.698,14.698zM296.58,396.85l14.698,-14.698v14.698l-14.698,14.698zM311.28,-14.70l14.698,-14.698v14.698l-14.698,14.698zM311.28,14.70l14.698,-14.698v14.698l-14.698,14.698zM311.28,44.09l14.698,-14.698v14.698l-14.698,14.698zM311.28,73.49l14.698,-14.698v14.698l-14.698,14.698zM311.28,102.89l14.698,-14.698v14.698l-14.698,14.698zM311.28,132.28l14.698,-14.698v14.698l-14.698,14.698zM311.28,161.68l14.698,-14.698v14.698l-14.698,14.698zM311.28,191.07l14.698,-14.698v14.698l-14.698,14.698zM311.28,220.47l14.698,-14.698v14.698l-14.698,14.698zM311.28,249.87l14.698,-14.698v14.698l-14.698,14.698zM311.28,279.26l14.698,-14.698v14.698l-14.698,14.698zM311.28,308.66l14.698,-14.698v14.698l-14.698,14.698zM311.28,338.05l14.698,-14.698v14.698l-14.698,14.698zM311.28,367.45l14.698,-14.698v14.698l-14.698,14.698zM311.28,396.85l14.698,-14.698v14.698l-14.698,14.698zM325.98,-14.70l14.698,-14.698v14.698l-14.698,14.698zM325.98,14.70l14.698,-14.698v14.698l-14.698,14.698zM325.98,44.09l14.698,-14.698v14.698l-14.698,14.698zM325.98,73.49l14.698,-14.698v14.698l-14.698,14.698zM325.98,102.89l14.698,-14.698v14.698l-14.698,14.698zM325.98,132.28l14.698,-14.698v14.698l-14.698,14.698zM325.98,161.68l14.698,-14.698v14.698l-14.698,14.698zM325.98,191.07l14.698,-14.698v14.698l-14.698,14.698zM325.98,220.47l14.698,-14.698v14.698l-14.698,14.698zM325.98,249.87l14.698,-14.698v14.698l-14.698,14.698zM325.98,279.26l14.698,-14.698v14.698l-14.698,14.698zM325.98,308.66l14.698,-14.698v14.698l-14.698,14.698zM325.98,338.05l14.698,-14.698v14.698l-14.698,14.698zM325.98,367.45l14.698,-14.698v14.698l-14.698,14.698zM325.98,396.85l14.698,-14.698v14.698l-14.698,14.698zM340.67,-14.70l14.698,-14.698v14.698l-14.698,14.698zM340.67,14.70l14.698,-14.698v14.698l-14.698,14.698zM340.67,44.09l14.698,-14.698v14.698l-14.698,14.698zM340.67,73.49l14.698,-14.698v14.698l-14.698,14.698zM340.67,102.89l14.698,-14.698v14.698l-14.698,14.698zM340.67,132.28l14.698,-14.698v14.698l-14.698,14.698zM340.67,161.68l14.698,-14.698v14.698l-14.698,14.698zM340.67,191.07l14.698,-14.698v14.698l-14.698,14.698zM340.67,220.47l14.698,-14.698v14.698l-14.698,14.698zM340.67,249.87l14.698,-14.698v14.698l-14.698,14.698zM340.67,279.26l14.698,-14.698v14.698l-14.698,14.698zM340.67,308.66l14.698,-14.698v14.698l-14.698,14.698zM340.67,338.05l14.698,-14.698v14.698l-14.698,14.698zM340.67,367.45l14.698,-14.698v14.698l-14.698,14.698zM340.67,396.85l14.698,-14.698v14.698l-14.698,14.698zM355.37,-14.70l14.698,-14.698v14.698l-14.698,14.698zM355.37,14.70l14.698,-14.698v14.698l-14.698,14.698zM355.37,44.09l14.698,-14.698v14.698l-14.698,14.698zM355.37,73.49l14.698,-14.698v14.698l-14.698,14.698zM355.37,102.89l14.698,-14.698v14.698l-14.698,14.698zM355.37,132.28l14.698,-14.698v14.698l-14.698,14.698zM355.37,161.68l14.698,-14.698v14.698l-14.698,14.698zM355.37,191.07l14.698,-14.698v14.698l-14.698,14.698zM355.37,220.47l14.698,-14.698v14.698l-14.698,14.698zM355.37,249.87l14.698,-14.698v14.698l-14.698,14.698zM355.37,279.26l14.698,-14.698v14.698l-14.698,14.698zM355.37,308.66l14.698,-14.698v14.698l-14.698,14.698zM355.37,338.05l14.698,-14.698v14.698l-14.698,14.698zM355.37,367.45l14.698,-14.698v14.698l-14.698,14.698zM355.37,396.85l14.698,-14.698v14.698l-14.698,14.698zM370.07,-14.70l14.698,-14.698v14.698l-14.698,14.698zM370.07,14.70l14.698,-14.698v14.698l-14.698,14.698zM370.07,44.09l14.698,-14.698v14.698l-14.698,14.698zM370.07,73.49l14.698,-14.698v14.698l-14.698,14.698zM370.07,102.89l14.698,-14.698v14.698l-14.698,14.698zM370.07,132.28l14.698,-14.698v14.698l-14.698,14.698zM370.07,161.68l14.698,-14.698v14.698l-14.698,14.698zM370.07,191.07l14.698,-14.698v14.698l-14.698,14.698zM370.07,220.47l14.698,-14.698v14.698l-14.698,14.698zM370.07,249.87l14.698,-14.698v14.698l-14.698,14.698zM370.07,279.26l14.698,-14.698v14.698l-14.698,14.698zM370.07,308.66l14.698,-14.698v14.698l-14.698,14.698zM370.07,338.05l14.698,-14.698v14.698l-14.698,14.698zM370.07,367.45l14.698,-14.698v14.698l-14.698,14.698zM370.07,396.85l14.698,-14.698v14.698l-14.698,14.698zM384.77,-14.70l14.698,-14.698v14.698l-14.698,14.698zM384.77,14.70l14.698,-14.698v14.698l-14.698,14.698zM384.77,44.09l14.698,-14.698v14.698l-14.698,14.698zM384.77,73.49l14.698,-14.698v14.698l-14.698,14.698zM384.77,102.89l14.698,-14.698v14.698l-14.698,14.698zM384.77,132.28l14.698,-14.698v14.698l-14.698,14.698zM384.77,161.68l14.698,-14.698v14.698l-14.698,14.698zM384.77,191.07l14.698,-14.698v14.698l-14.698,14.698zM384.77,220.47l14.698,-14.698v14.698l-14.698,14.698zM384.77,249.87l14.698,-14.698v14.698l-14.698,14.698zM384.77,279.26l14.698,-14.698v14.698l-14.698,14.698zM384.77,308.66l14.698,-14.698v14.698l-14.698,14.698zM384.77,338.05l14.698,-14.698v14.698l-14.698,14.698zM384.77,367.45l14.698,-14.698v14.698l-14.698,14.698zM384.77,396.85l14.698,-14.698v14.698l-14.698,14.698zM399.47,-14.70l14.698,-14.698v14.698l-14.698,14.698zM399.47,14.70l14.698,-14.698v14.698l-14.698,14.698zM399.47,44.09l14.698,-14.698v14.698l-14.698,14.698zM399.47,73.49l14.698,-14.698v14.698l-14.698,14.698zM399.47,102.89l14.698,-14.698v14.698l-14.698,14.698zM399.47,132.28l14.698,-14.698v14.698l-14.698,14.698zM399.47,161.68l14.698,-14.698v14.698l-14.698,14.698zM399.47,191.07l14.698,-14.698v14.698l-14.698,14.698zM399.47,220.47l14.698,-14.698v14.698l-14.698,14.698zM399.47,249.87l14.698,-14.698v14.698l-14.698,14.698zM399.47,279.26l14.698,-14.698v14.698l-14.698,14.698zM399.47,308.66l14.698,-14.698v14.698l-14.698,14.698zM399.47,338.05l14.698,-14.698v14.698l-14.698,14.698zM399.47,367.45l14.698,-14.698v14.698l-14.698,14.698zM399.47,396.85l14.698,-14.698v14.698l-14.698,14.698zM414.16,-14.70l14.698,-14.698v14.698l-14.698,14.698zM414.16,14.70l14.698,-14.698v14.698l-14.698,14.698zM414.16,44.09l14.698,-14.698v14.698l-14.698,14.698zM414.16,73.49l14.698,-14.698v14.698l-14.698,14.698zM414.16,102.89l14.698,-14.698v14.698l-14.698,14.698zM414.16,132.28l14.698,-14.698v14.698l-14.698,14.698zM414.16,161.68l14.698,-14.698v14.698l-14.698,14.698zM414.16,191.07l14.698,-14.698v14.698l-14.698,14.698zM414.16,220.47l14.698,-14.698v14.698l-14.698,14.698zM414.16,249.87l14.698,-14.698v14.698l-14.698,14.698zM414.16,279.26l14.698,-14.698v14.698l-14.698,14.698zM414.16,308.66l14.698,-14.698v14.698l-14.698,14.698zM414.16,338.05l14.698,-14.698v14.698l-14.698,14.698zM414.16,367.45l14.698,-14.698v14.698l-14.698,14.698zM414.16,396.85l14.698,-14.698v14.698l-14.698,14.698zM428.86,-14.70l14.698,-14.698v14.698l-14.698,14.698zM428.86,14.70l14.698,-14.698v14.698l-14.698,14.698zM428.86,44.09l14.698,-14.698v14.698l-14.698,14.698zM428.86,73.49l14.698,-14.698v14.698l-14.698,14.698zM428.86,102.89l14.698,-14.698v14.698l-14.698,14.698zM428.86,132.28l14.698,-14.698v14.698l-14.698,14.698zM428.86,161.68l14.698,-14.698v14.698l-14.698,14.698zM428.86,191.07l14.698,-14.698v14.698l-14.698,14.698zM428.86,220.47l14.698,-14.698v14.698l-14.698,14.698zM428.86,249.87l14.698,-14.698v14.698l-14.698,14.698zM428.86,279.26l14.698,-14.698v14.698l-14.698,14.698zM428.86,308.66l14.698,-14.698v14.698l-14.698,14.698zM428.86,338.05l14.698,-14.698v14.698l-14.698,14.698zM428.86,367.45l14.698,-14.698v14.698l-14.698,14.698zM428.86,396.85l14.698,-14.698v14.698l-14.698,14.698zM443.56,-14.70l14.698,-14.698v14.698l-14.698,14.698zM443.56,14.70l14.698,-14.698v14.698l-14.698,14.698zM443.56,44.09l14.698,-14.698v14.698l-14.698,14.698zM443.56,73.49l14.698,-14.698v14.698l-14.698,14.698zM443.56,102.89l14.698,-14.698v14.698l-14.698,14.698zM443.56,132.28l14.698,-14.698v14.698l-14.698,14.698zM443.56,161.68l14.698,-14.698v14.698l-14.698,14.698zM443.56,191.07l14.698,-14.698v14.698l-14.698,14.698zM443.56,220.47l14.698,-14.698v14.698l-14.698,14.698zM443.56,249.87l14.698,-14.698v14.698l-14.698,14.698zM443.56,279.26l14.698,-14.698v14.698l-14.698,14.698zM443.56,308.66l14.698,-14.698v14.698l-14.698,14.698zM443.56,338.05l14.698,-14.698v14.698l-14.698,14.698zM443.56,367.45l14.698,-14.698v14.698l-14.698,14.698zM443.56,396.85l14.698,-14.698v14.698l-14.698,14.698zM458.26,-14.70l14.698,-14.698v14.698l-14.698,14.698zM458.26,14.70l14.698,-14.698v14.698l-14.698,14.698zM458.26,44.09l14.698,-14.698v14.698l-14.698,14.698zM458.26,73.49l14.698,-14.698v14.698l-14.698,14.698zM458.26,102.89l14.698,-14.698v14.698l-14.698,14.698zM458.26,132.28l14.698,-14.698v14.698l-14.698,14.698zM458.26,161.68l14.698,-14.698v14.698l-14.698,14.698zM458.26,191.07l14.698,-14.698v14.698l-14.698,14.698zM458.26,220.47l14.698,-14.698v14.698l-14.698,14.698zM458.26,249.87l14.698,-14.698v14.698l-14.698,14.698zM458.26,279.26l14.698,-14.698v14.698l-14.698,14.698zM458.26,308.66l14.698,-14.698v14.698l-14.698,14.698zM458.26,338.05l14.698,-14.698v14.698l-14.698,14.698zM458.26,367.45l14.698,-14.698v14.698l-14.698,14.698zM458.26,396.85l14.698,-14.698v14.698l-14.698,14.698zM472.96,-14.70l14.698,-14.698v14.698l-14.698,14.698zM472.96,14.70l14.698,-14.698v14.698l-14.698,14.698zM472.96,44.09l14.698,-14.698v14.698l-14.698,14.698zM472.96,73.49l14.698,-14.698v14.698l-14.698,14.698zM472.96,102.89l14.698,-14.698v14.698l-14.698,14.698zM472.96,132.28l14.698,-14.698v14.698l-14.698,14.698zM472.96,161.68l14.698,-14.698v14.698l-14.698,14.698zM472.96,191.07l14.698,-14.698v14.698l-14.698,14.698zM472.96,220.47l14.698,-14.698v14.698l-14.698,14.698zM472.96,249.87l14.698,-14.698v14.698l-14.698,14.698zM472.96,279.26l14.698,-14.698v14.698l-14.698,14.698zM472.96,308.66l14.698,-14.698v14.698l-14.698,14.698zM472.96,338.05l14.698,-14.698v14.698l-14.698,14.698zM472.96,367.45l14.698,-14.698v14.698l-14.698,14.698zM472.96,396.85l14.698,-14.698v14.698l-14.698,14.698zM487.65,-14.70l14.698,-14.698v14.698l-14.698,14.698zM487.65,14.70l14.698,-14.698v14.698l-14.698,14.698zM487.65,44.09l14.698,-14.698v14.698l-14.698,14.698zM487.65,73.49l14.698,-14.698v14.698l-14.698,14.698zM487.65,102.89l14.698,-14.698v14.698l-14.698,14.698zM487.65,132.28l14.698,-14.698v14.698l-14.698,14.698zM487.65,161.68l14.698,-14.698v14.698l-14.698,14.698zM487.65,191.07l14.698,-14.698v14.698l-14.698,14.698zM487.65,220.47l14.698,-14.698v14.698l-14.698,14.698zM487.65,249.87l14.698,-14.698v14.698l-14.698,14.698zM487.65,279.26l14.698,-14.698v14.698l-14.698,14.698zM487.65,308.66l14.698,-14.698v14.698l-14.698,14.698zM487.65,338.05l14.698,-14.698v14.698l-14.698,14.698zM487.65,367.45l14.698,-14.698v14.698l-14.698,14.698zM487.65,396.85l14.698,-14.698v14.698l-14.698,14.698zM502.35,-14.70l14.698,-14.698v14.698l-14.698,14.698zM502.35,14.70l14.698,-14.698v14.698l-14.698,14.698zM502.35,44.09l14.698,-14.698v14.698l-14.698,14.698zM502.35,73.49l14.698,-14.698v14.698l-14.698,14.698zM502.35,102.89l14.698,-14.698v14.698l-14.698,14.698zM502.35,132.28l14.698,-14.698v14.698l-14.698,14.698zM502.35,161.68l14.698,-14.698v14.698l-14.698,14.698zM502.35,191.07l14.698,-14.698v14.698l-14.698,14.698zM502.35,220.47l14.698,-14.698v14.698l-14.698,14.698zM502.35,249.87l14.698,-14.698v14.698l-14.698,14.698zM502.35,279.26l14.698,-14.698v14.698l-14.698,14.698zM502.35,308.66l14.698,-14.698v14.698l-14.698,14.698zM502.35,338.05l14.698,-14.698v14.698l-14.698,14.698zM502.35,367.45l14.698,-14.698v14.698l-14.698,14.698zM502.35,396.85l14.698,-14.698v14.698l-14.698,14.698zM517.05,-14.70l14.698,-14.698v14.698l-14.698,14.698zM517.05,14.70l14.698,-14.698v14.698l-14.698,14.698zM517.05,44.09l14.698,-14.698v14.698l-14.698,14.698zM517.05,73.49l14.698,-14.698v14.698l-14.698,14.698zM517.05,102.89l14.698,-14.698v14.698l-14.698,14.698zM517.05,132.28l14.698,-14.698v14.698l-14.698,14.698zM517.05,161.68l14.698,-14.698v14.698l-14.698,14.698zM517.05,191.07l14.698,-14.698v14.698l-14.698,14.698zM517.05,220.47l14.698,-14.698v14.698l-14.698,14.698zM517.05,249.87l14.698,-14.698v14.698l-14.698,14.698zM517.05,279.26l14.698,-14.698v14.698l-14.698,14.698zM517.05,308.66l14.698,-14.698v14.698l-14.698,14.698zM517.05,338.05l14.698,-14.698v14.698l-14.698,14.698zM517.05,367.45l14.698,-14.698v14.698l-14.698,14.698zM517.05,396.85l14.698,-14.698v14.698l-14.698,14.698zM531.75,-14.70l14.698,-14.698v14.698l-14.698,14.698zM531.75,14.70l14.698,-14.698v14.698l-14.698,14.698zM531.75,44.09l14.698,-14.698v14.698l-14.698,14.698zM531.75,73.49l14.698,-14.698v14.698l-14.698,14.698zM531.75,102.89l14.698,-14.698v14.698l-14.698,14.698zM531.75,132.28l14.698,-14.698v14.698l-14.698,14.698zM531.75,161.68l14.698,-14.698v14.698l-14.698,14.698zM531.75,191.07l14.698,-14.698v14.698l-14.698,14.698zM531.75,220.47l14.698,-14.698v14.698l-14.698,14.698zM531.75,249.87l14.698,-14.698v14.698l-14.698,14.698zM531.75,279.26l14.698,-14.698v14.698l-14.698,14.698zM531.75,308.66l14.698,-14.698v14.698l-14.698,14.698zM531.75,338.05l14.698,-14.698v14.698l-14.698,14.698zM531.75,367.45l14.698,-14.698v14.698l-14.698,14.698zM531.75,396.85l14.698,-14.698v14.698l-14.698,14.698zM546.45,-14.70l14.698,-14.698v14.698l-14.698,14.698zM546.45,14.70l14.698,-14.698v14.698l-14.698,14.698zM546.45,44.09l14.698,-14.698v14.698l-14.698,14.698zM546.45,73.49l14.698,-14.698v14.698l-14.698,14.698zM546.45,102.89l14.698,-14.698v14.698l-14.698,14.698zM546.45,132.28l14.698,-14.698v14.698l-14.698,14.698zM546.45,161.68l14.698,-14.698v14.698l-14.698,14.698zM546.45,191.07l14.698,-14.698v14.698l-14.698,14.698zM546.45,220.47l14.698,-14.698v14.698l-14.698,14.698zM546.45,249.87l14.698,-14.698v14.698l-14.698,14.698zM546.45,279.26l14.698,-14.698v14.698l-14.698,14.698zM546.45,308.66l14.698,-14.698v14.698l-14.698,14.698zM546.45,338.05l14.698,-14.698v14.698l-14.698,14.698zM546.45,367.45l14.698,-14.698v14.698l-14.698,14.698zM546.45,396.85l14.698,-14.698v14.698l-14.698,14.698zM561.14,-14.70l14.698,-14.698v14.698l-14.698,14.698zM561.14,14.70l14.698,-14.698v14.698l-14.698,14.698zM561.14,44.09l14.698,-14.698v14.698l-14.698,14.698zM561.14,73.49l14.698,-14.698v14.698l-14.698,14.698zM561.14,102.89l14.698,-14.698v14.698l-14.698,14.698zM561.14,132.28l14.698,-14.698v14.698l-14.698,14.698zM561.14,161.68l14.698,-14.698v14.698l-14.698,14.698zM561.14,191.07l14.698,-14.698v14.698l-14.698,14.698zM561.14,220.47l14.698,-14.698v14.698l-14.698,14.698zM561.14,249.87l14.698,-14.698v14.698l-14.698,14.698zM561.14,279.26l14.698,-14.698v14.698l-14.698,14.698zM561.14,308.66l14.698,-14.698v14.698l-14.698,14.698zM561.14,338.05l14.698,-14.698v14.698l-14.698,14.698zM561.14,367.45l14.698,-14.698v14.698l-14.698,14.698zM561.14,396.85l14.698,-14.698v14.698l-14.698,14.698zM575.84,-14.70l14.698,-14.698v14.698l-14.698,14.698zM575.84,14.70l14.698,-14.698v14.698l-14.698,14.698zM575.84,44.09l14.698,-14.698v14.698l-14.698,14.698zM575.84,73.49l14.698,-14.698v14.698l-14.698,14.698zM575.84,102.89l14.698,-14.698v14.698l-14.698,14.698zM575.84,132.28l14.698,-14.698v14.698l-14.698,14.698zM575.84,161.68l14.698,-14.698v14.698l-14.698,14.698zM575.84,191.07l14.698,-14.698v14.698l-14.698,14.698zM575.84,220.47l14.698,-14.698v14.698l-14.698,14.698zM575.84,249.87l14.698,-14.698v14.698l-14.698,14.698zM575.84,279.26l14.698,-14.698v14.698l-14.698,14.698zM575.84,308.66l14.698,-14.698v14.698l-14.698,14.698zM575.84,338.05l14.698,-14.698v14.698l-14.698,14.698zM575.84,367.45l14.698,-14.698v14.698l-14.698,14.698zM575.84,396.85l14.698,-14.698v14.698l-14.698,14.698zM590.54,-14.70l14.698,-14.698v14.698l-14.698,14.698zM590.54,14.70l14.698,-14.698v14.698l-14.698,14.698zM590.54,44.09l14.698,-14.698v14.698l-14.698,14.698zM590.54,73.49l14.698,-14.698v14.698l-14.698,14.698zM590.54,102.89l14.698,-14.698v14.698l-14.698,14.698zM590.54,132.28l14.698,-14.698v14.698l-14.698,14.698zM590.54,161.68l14.698,-14.698v14.698l-14.698,14.698zM590.54,191.07l14.698,-14.698v14.698l-14.698,14.698zM590.54,220.47l14.698,-14.698v14.698l-14.698,14.698zM590.54,249.87l14.698,-14.698v14.698l-14.698,14.698zM590.54,279.26l14.698,-14.698v14.698l-14.698,14.698zM590.54,308.66l14.698,-14.698v14.698l-14.698,14.698zM590.54,338.05l14.698,-14.698v14.698l-14.698,14.698zM590.54,367.45l14.698,-14.698v14.698l-14.698,14.698zM590.54,396.85l14.698,-14.698v14.698l-14.698,14.698zM605.24,-14.70l14.698,-14.698v14.698l-14.698,14.698zM605.24,14.70l14.698,-14.698v14.698l-14.698,14.698zM605.24,44.09l14.698,-14.698v14.698l-14.698,14.698zM605.24,73.49l14.698,-14.698v14.698l-14.698,14.698zM605.24,102.89l14.698,-14.698v14.698l-14.698,14.698zM605.24,132.28l14.698,-14.698v14.698l-14.698,14.698zM605.24,161.68l14.698,-14.698v14.698l-14.698,14.698zM605.24,191.07l14.698,-14.698v14.698l-14.698,14.698zM605.24,220.47l14.698,-14.698v14.698l-14.698,14.698zM605.24,249.87l14.698,-14.698v14.698l-14.698,14.698zM605.24,279.26l14.698,-14.698v14.698l-14.698,14.698zM605.24,308.66l14.698,-14.698v14.698l-14.698,14.698zM605.24,338.05l14.698,-14.698v14.698l-14.698,14.698zM605.24,367.45l14.698,-14.698v14.698l-14.698,14.698zM605.24,396.85l14.698,-14.698v14.698l-14.698,14.698zM619.94,-14.70l14.698,-14.698v14.698l-14.698,14.698zM619.94,14.70l14.698,-14.698v14.698l-14.698,14.698zM619.94,44.09l14.698,-14.698v14.698l-14.698,14.698zM619.94,73.49l14.698,-14.698v14.698l-14.698,14.698zM619.94,102.89l14.698,-14.698v14.698l-14.698,14.698zM619.94,132.28l14.698,-14.698v14.698l-14.698,14.698zM619.94,161.68l14.698,-14.698v14.698l-14.698,14.698zM619.94,191.07l14.698,-14.698v14.698l-14.698,14.698zM619.94,220.47l14.698,-14.698v14.698l-14.698,14.698zM619.94,249.87l14.698,-14.698v14.698l-14.698,14.698zM619.94,279.26l14.698,-14.698v14.698l-14.698,14.698zM619.94,308.66l14.698,-14.698v14.698l-14.698,14.698zM619.94,338.05l14.698,-14.698v14.698l-14.698,14.698zM619.94,367.45l14.698,-14.698v14.698l-14.698,14.698zM619.94,396.85l14.698,-14.698v14.698l-14.698,14.698zM634.63,-14.70l14.698,-14.698v14.698l-14.698,14.698zM634.63,14.70l14.698,-14.698v14.698l-14.698,14.698zM634.63,44.09l14.698,-14.698v14.698l-14.698,14.698zM634.63,73.49l14.698,-14.698v14.698l-14.698,14.698zM634.63,102.89l14.698,-14.698v14.698l-14.698,14.698zM634.63,132.28l14.698,-14.698v14.698l-14.698,14.698zM634.63,161.68l14.698,-14.698v14.698l-14.698,14.698zM634.63,191.07l14.698,-14.698v14.698l-14.698,14.698zM634.63,220.47l14.698,-14.698v14.698l-14.698,14.698zM634.63,249.87l14.698,-14.698v14.698l-14.698,14.698zM634.63,279.26l14.698,-14.698v14.698l-14.698,14.698zM634.63,308.66l14.698,-14.698v14.698l-14.698,14.698zM634.63,338.05l14.698,-14.698v14.698l-14.698,14.698zM634.63,367.45l14.698,-14.698v14.698l-14.698,14.698zM634.63,396.85l14.698,-14.698v14.698l-14.698,14.698zM649.33,-14.70l14.698,-14.698v14.698l-14.698,14.698zM649.33,14.70l14.698,-14.698v14.698l-14.698,14.698zM649.33,44.09l14.698,-14.698v14.698l-14.698,14.698zM649.33,73.49l14.698,-14.698v14.698l-14.698,14.698zM649.33,102.89l14.698,-14.698v14.698l-14.698,14.698zM649.33,132.28l14.698,-14.698v14.698l-14.698,14.698zM649.33,161.68l14.698,-14.698v14.698l-14.698,14.698zM649.33,191.07l14.698,-14.698v14.698l-14.698,14.698zM649.33,220.47l14.698,-14.698v14.698l-14.698,14.698zM649.33,249.87l14.698,-14.698v14.698l-14.698,14.698zM649.33,279.26l14.698,-14.698v14.698l-14.698,14.698zM649.33,308.66l14.698,-14.698v14.698l-14.698,14.698zM649.33,338.05l14.698,-14.698v14.698l-14.698,14.698zM649.33,367.45l14.698,-14.698v14.698l-14.698,14.698zM649.33,396.85l14.698,-14.698v14.698l-14.698,14.698zM664.03,-14.70l14.698,-14.698v14.698l-14.698,14.698zM664.03,14.70l14.698,-14.698v14.698l-14.698,14.698zM664.03,44.09l14.698,-14.698v14.698l-14.698,14.698zM664.03,73.49l14.698,-14.698v14.698l-14.698,14.698zM664.03,102.89l14.698,-14.698v14.698l-14.698,14.698zM664.03,132.28l14.698,-14.698v14.698l-14.698,14.698zM664.03,161.68l14.698,-14.698v14.698l-14.698,14.698zM664.03,191.07l14.698,-14.698v14.698l-14.698,14.698zM664.03,220.47l14.698,-14.698v14.698l-14.698,14.698zM664.03,249.87l14.698,-14.698v14.698l-14.698,14.698zM664.03,279.26l14.698,-14.698v14.698l-14.698,14.698zM664.03,308.66l14.698,-14.698v14.698l-14.698,14.698zM664.03,338.05l14.698,-14.698v14.698l-14.698,14.698zM664.03,367.45l14.698,-14.698v14.698l-14.698,14.698zM664.03,396.85l14.698,-14.698v14.698l-14.698,14.698zM678.73,-14.70l14.698,-14.698v14.698l-14.698,14.698zM678.73,14.70l14.698,-14.698v14.698l-14.698,14.698zM678.73,44.09l14.698,-14.698v14.698l-14.698,14.698zM678.73,73.49l14.698,-14.698v14.698l-14.698,14.698zM678.73,102.89l14.698,-14.698v14.698l-14.698,14.698zM678.73,132.28l14.698,-14.698v14.698l-14.698,14.698zM678.73,161.68l14.698,-14.698v14.698l-14.698,14.698zM678.73,191.07l14.698,-14.698v14.698l-14.698,14.698zM678.73,220.47l14.698,-14.698v14.698l-14.698,14.698zM678.73,249.87l14.698,-14.698v14.698l-14.698,14.698zM678.73,279.26l14.698,-14.698v14.698l-14.698,14.698zM678.73,308.66l14.698,-14.698v14.698l-14.698,14.698zM678.73,338.05l14.698,-14.698v14.698l-14.698,14.698zM678.73,367.45l14.698,-14.698v14.698l-14.698,14.698zM678.73,396.85l14.698,-14.698v14.698l-14.698,14.698zM693.43,-14.70l14.698,-14.698v14.698l-14.698,14.698zM693.43,14.70l14.698,-14.698v14.698l-14.698,14.698zM693.43,44.09l14.698,-14.698v14.698l-14.698,14.698zM693.43,73.49l14.698,-14.698v14.698l-14.698,14.698zM693.43,102.89l14.698,-14.698v14.698l-14.698,14.698zM693.43,132.28l14.698,-14.698v14.698l-14.698,14.698zM693.43,161.68l14.698,-14.698v14.698l-14.698,14.698zM693.43,191.07l14.698,-14.698v14.698l-14.698,14.698zM693.43,220.47l14.698,-14.698v14.698l-14.698,14.698zM693.43,249.87l14.698,-14.698v14.698l-14.698,14.698zM693.43,279.26l14.698,-14.698v14.698l-14.698,14.698zM693.43,308.66l14.698,-14.698v14.698l-14.698,14.698zM693.43,338.05l14.698,-14.698v14.698l-14.698,14.698zM693.43,367.45l14.698,-14.698v14.698l-14.698,14.698zM693.43,396.85l14.698,-14.698v14.698l-14.698,14.698zM708.12,-14.70l14.698,-14.698v14.698l-14.698,14.698zM708.12,14.70l14.698,-14.698v14.698l-14.698,14.698zM708.12,44.09l14.698,-14.698v14.698l-14.698,14.698zM708.12,73.49l14.698,-14.698v14.698l-14.698,14.698zM708.12,102.89l14.698,-14.698v14.698l-14.698,14.698zM708.12,132.28l14.698,-14.698v14.698l-14.698,14.698zM708.12,161.68l14.698,-14.698v14.698l-14.698,14.698zM708.12,191.07l14.698,-14.698v14.698l-14.698,14.698zM708.12,220.47l14.698,-14.698v14.698l-14.698,14.698zM708.12,249.87l14.698,-14.698v14.698l-14.698,14.698zM708.12,279.26l14.698,-14.698v14.698l-14.698,14.698zM708.12,308.66l14.698,-14.698v14.698l-14.698,14.698zM708.12,338.05l14.698,-14.698v14.698l-14.698,14.698zM708.12,367.45l14.698,-14.698v14.698l-14.698,14.698zM708.12,396.85l14.698,-14.698v14.698l-14.698,14.698zM722.82,-14.70l14.698,-14.698v14.698l-14.698,14.698zM722.82,14.70l14.698,-14.698v14.698l-14.698,14.698zM722.82,44.09l14.698,-14.698v14.698l-14.698,14.698zM722.82,73.49l14.698,-14.698v14.698l-14.698,14.698zM722.82,102.89l14.698,-14.698v14.698l-14.698,14.698zM722.82,132.28l14.698,-14.698v14.698l-14.698,14.698zM722.82,161.68l14.698,-14.698v14.698l-14.698,14.698zM722.82,191.07l14.698,-14.698v14.698l-14.698,14.698zM722.82,220.47l14.698,-14.698v14.698l-14.698,14.698zM722.82,249.87l14.698,-14.698v14.698l-14.698,14.698zM722.82,279.26l14.698,-14.698v14.698l-14.698,14.698zM722.82,308.66l14.698,-14.698v14.698l-14.698,14.698zM722.82,338.05l14.698,-14.698v14.698l-14.698,14.698zM722.82,367.45l14.698,-14.698v14.698l-14.698,14.698zM722.82,396.85l14.698,-14.698v14.698l-14.698,14.698zM737.52,-14.70l14.698,-14.698v14.698l-14.698,14.698zM737.52,14.70l14.698,-14.698v14.698l-14.698,14.698zM737.52,44.09l14.698,-14.698v14.698l-14.698,14.698zM737.52,73.49l14.698,-14.698v14.698l-14.698,14.698zM737.52,102.89l14.698,-14.698v14.698l-14.698,14.698zM737.52,132.28l14.698,-14.698v14.698l-14.698,14.698zM737.52,161.68l14.698,-14.698v14.698l-14.698,14.698zM737.52,191.07l14.698,-14.698v14.698l-14.698,14.698zM737.52,220.47l14.698,-14.698v14.698l-14.698,14.698zM737.52,249.87l14.698,-14.698v14.698l-14.698,14.698zM737.52,279.26l14.698,-14.698v14.698l-14.698,14.698zM737.52,308.66l14.698,-14.698v14.698l-14.698,14.698zM737.52,338.05l14.698,-14.698v14.698l-14.698,14.698zM737.52,367.45l14.698,-14.698v14.698l-14.698,14.698zM737.52,396.85l14.698,-14.698v14.698l-14.698,14.698zM752.22,-14.70l14.698,-14.698v14.698l-14.698,14.698zM752.22,14.70l14.698,-14.698v14.698l-14.698,14.698zM752.22,44.09l14.698,-14.698v14.698l-14.698,14.698zM752.22,73.49l14.698,-14.698v14.698l-14.698,14.698zM752.22,102.89l14.698,-14.698v14.698l-14.698,14.698zM752.22,132.28l14.698,-14.698v14.698l-14.698,14.698zM752.22,161.68l14.698,-14.698v14.698l-14.698,14.698zM752.22,191.07l14.698,-14.698v14.698l-14.698,14.698zM752.22,220.47l14.698,-14.698v14.698l-14.698,14.698zM752.22,249.87l14.698,-14.698v14.698l-14.698,14.698zM752.22,279.26l14.698,-14.698v14.698l-14.698,14.698zM752.22,308.66l14.698,-14.698v14.698l-14.698,14.698zM752.22,338.05l14.698,-14.698v14.698l-14.698,14.698zM752.22,367.45l14.698,-14.698v14.698l-14.698,14.698zM752.22,396.85l14.698,-14.698v14.698l-14.698,14.698zM766.92,-14.70l14.698,-14.698v14.698l-14.698,14.698zM766.92,14.70l14.698,-14.698v14.698l-14.698,14.698zM766.92,44.09l14.698,-14.698v14.698l-14.698,14.698zM766.92,73.49l14.698,-14.698v14.698l-14.698,14.698zM766.92,102.89l14.698,-14.698v14.698l-14.698,14.698zM766.92,132.28l14.698,-14.698v14.698l-14.698,14.698zM766.92,161.68l14.698,-14.698v14.698l-14.698,14.698zM766.92,191.07l14.698,-14.698v14.698l-14.698,14.698zM766.92,220.47l14.698,-14.698v14.698l-14.698,14.698zM766.92,249.87l14.698,-14.698v14.698l-14.698,14.698zM766.92,279.26l14.698,-14.698v14.698l-14.698,14.698zM766.92,308.66l14.698,-14.698v14.698l-14.698,14.698zM766.92,338.05l14.698,-14.698v14.698l-14.698,14.698zM766.92,367.45l14.698,-14.698v14.698l-14.698,14.698zM766.92,396.85l14.698,-14.698v14.698l-14.698,14.698zM781.61,-14.70l14.698,-14.698v14.698l-14.698,14.698zM781.61,14.70l14.698,-14.698v14.698l-14.698,14.698zM781.61,44.09l14.698,-14.698v14.698l-14.698,14.698zM781.61,73.49l14.698,-14.698v14.698l-14.698,14.698zM781.61,102.89l14.698,-14.698v14.698l-14.698,14.698zM781.61,132.28l14.698,-14.698v14.698l-14.698,14.698zM781.61,161.68l14.698,-14.698v14.698l-14.698,14.698zM781.61,191.07l14.698,-14.698v14.698l-14.698,14.698zM781.61,220.47l14.698,-14.698v14.698l-14.698,14.698zM781.61,249.87l14.698,-14.698v14.698l-14.698,14.698zM781.61,279.26l14.698,-14.698v14.698l-14.698,14.698zM781.61,308.66l14.698,-14.698v14.698l-14.698,14.698zM781.61,338.05l14.698,-14.698v14.698l-14.698,14.698zM781.61,367.45l14.698,-14.698v14.698l-14.698,14.698zM781.61,396.85l14.698,-14.698v14.698l-14.698,14.698zM796.31,-14.70l14.698,-14.698v14.698l-14.698,14.698zM796.31,14.70l14.698,-14.698v14.698l-14.698,14.698zM796.31,44.09l14.698,-14.698v14.698l-14.698,14.698zM796.31,73.49l14.698,-14.698v14.698l-14.698,14.698zM796.31,102.89l14.698,-14.698v14.698l-14.698,14.698zM796.31,132.28l14.698,-14.698v14.698l-14.698,14.698zM796.31,161.68l14.698,-14.698v14.698l-14.698,14.698zM796.31,191.07l14.698,-14.698v14.698l-14.698,14.698zM796.31,220.47l14.698,-14.698v14.698l-14.698,14.698zM796.31,249.87l14.698,-14.698v14.698l-14.698,14.698zM796.31,279.26l14.698,-14.698v14.698l-14.698,14.698zM796.31,308.66l14.698,-14.698v14.698l-14.698,14.698zM796.31,338.05l14.698,-14.698v14.698l-14.698,14.698zM796.31,367.45l14.698,-14.698v14.698l-14.698,14.698zM796.31,396.85l14.698,-14.698v14.698l-14.698,14.698zM811.01,-14.70l14.698,-14.698v14.698l-14.698,14.698zM811.01,14.70l14.698,-14.698v14.698l-14.698,14.698zM811.01,44.09l14.698,-14.698v14.698l-14.698,14.698zM811.01,73.49l14.698,-14.698v14.698l-14.698,14.698zM811.01,102.89l14.698,-14.698v14.698l-14.698,14.698zM811.01,132.28l14.698,-14.698v14.698l-14.698,14.698zM811.01,161.68l14.698,-14.698v14.698l-14.698,14.698zM811.01,191.07l14.698,-14.698v14.698l-14.698,14.698zM811.01,220.47l14.698,-14.698v14.698l-14.698,14.698zM811.01,249.87l14.698,-14.698v14.698l-14.698,14.698zM811.01,279.26l14.698,-14.698v14.698l-14.698,14.698zM811.01,308.66l14.698,-14.698v14.698l-14.698,14.698zM811.01,338.05l14.698,-14.698v14.698l-14.698,14.698zM811.01,367.45l14.698,-14.698v14.698l-14.698,14.698zM811.01,396.85l14.698,-14.698v14.698l-14.698,14.698zM825.71,-14.70l14.698,-14.698v14.698l-14.698,14.698zM825.71,14.70l14.698,-14.698v14.698l-14.698,14.698zM825.71,44.09l14.698,-14.698v14.698l-14.698,14.698zM825.71,73.49l14.698,-14.698v14.698l-14.698,14.698zM825.71,102.89l14.698,-14.698v14.698l-14.698,14.698zM825.71,132.28l14.698,-14.698v14.698l-14.698,14.698zM825.71,161.68l14.698,-14.698v14.698l-14.698,14.698zM825.71,191.07l14.698,-14.698v14.698l-14.698,14.698zM825.71,220.47l14.698,-14.698v14.698l-14.698,14.698zM825.71,249.87l14.698,-14.698v14.698l-14.698,14.698zM825.71,279.26l14.698,-14.698v14.698l-14.698,14.698zM825.71,308.66l14.698,-14.698v14.698l-14.698,14.698zM825.71,338.05l14.698,-14.698v14.698l-14.698,14.698zM825.71,367.45l14.698,-14.698v14.698l-14.698,14.698zM825.71,396.85l14.698,-14.698v14.698l-14.698,14.698zM840.41,-14.70l14.698,-14.698v14.698l-14.698,14.698zM840.41,14.70l14.698,-14.698v14.698l-14.698,14.698zM840.41,44.09l14.698,-14.698v14.698l-14.698,14.698zM840.41,73.49l14.698,-14.698v14.698l-14.698,14.698zM840.41,102.89l14.698,-14.698v14.698l-14.698,14.698zM840.41,132.28l14.698,-14.698v14.698l-14.698,14.698zM840.41,161.68l14.698,-14.698v14.698l-14.698,14.698zM840.41,191.07l14.698,-14.698v14.698l-14.698,14.698zM840.41,220.47l14.698,-14.698v14.698l-14.698,14.698zM840.41,249.87l14.698,-14.698v14.698l-14.698,14.698zM840.41,279.26l14.698,-14.698v14.698l-14.698,14.698zM840.41,308.66l14.698,-14.698v14.698l-14.698,14.698zM840.41,338.05l14.698,-14.698v14.698l-14.698,14.698zM840.41,367.45l14.698,-14.698v14.698l-14.698,14.698zM840.41,396.85l14.698,-14.698v14.698l-14.698,14.698zM855.10,-14.70l14.698,-14.698v14.698l-14.698,14.698zM855.10,14.70l14.698,-14.698v14.698l-14.698,14.698zM855.10,44.09l14.698,-14.698v14.698l-14.698,14.698zM855.10,73.49l14.698,-14.698v14.698l-14.698,14.698zM855.10,102.89l14.698,-14.698v14.698l-14.698,14.698zM855.10,132.28l14.698,-14.698v14.698l-14.698,14.698zM855.10,161.68l14.698,-14.698v14.698l-14.698,14.698zM855.10,191.07l14.698,-14.698v14.698l-14.698,14.698zM855.10,220.47l14.698,-14.698v14.698l-14.698,14.698zM855.10,249.87l14.698,-14.698v14.698l-14.698,14.698zM855.10,279.26l14.698,-14.698v14.698l-14.698,14.698zM855.10,308.66l14.698,-14.698v14.698l-14.698,14.698zM855.10,338.05l14.698,-14.698v14.698l-14.698,14.698zM855.10,367.45l14.698,-14.698v14.698l-14.698,14.698zM855.10,396.85l14.698,-14.698v14.698l-14.698,14.698zM869.80,-14.70l14.698,-14.698v14.698l-14.698,14.698zM869.80,14.70l14.698,-14.698v14.698l-14.698,14.698zM869.80,44.09l14.698,-14.698v14.698l-14.698,14.698zM869.80,73.49l14.698,-14.698v14.698l-14.698,14.698zM869.80,102.89l14.698,-14.698v14.698l-14.698,14.698zM869.80,132.28l14.698,-14.698v14.698l-14.698,14.698zM869.80,161.68l14.698,-14.698v14.698l-14.698,14.698zM869.80,191.07l14.698,-14.698v14.698l-14.698,14.698zM869.80,220.47l14.698,-14.698v14.698l-14.698,14.698zM869.80,249.87l14.698,-14.698v14.698l-14.698,14.698zM869.80,279.26l14.698,-14.698v14.698l-14.698,14.698zM869.80,308.66l14.698,-14.698v14.698l-14.698,14.698zM869.80,338.05l14.698,-14.698v14.698l-14.698,14.698zM869.80,367.45l14.698,-14.698v14.698l-14.698,14.698zM869.80,396.85l14.698,-14.698v14.698l-14.698,14.698zM884.50,-14.70l14.698,-14.698v14.698l-14.698,14.698zM884.50,14.70l14.698,-14.698v14.698l-14.698,14.698zM884.50,44.09l14.698,-14.698v14.698l-14.698,14.698zM884.50,73.49l14.698,-14.698v14.698l-14.698,14.698zM884.50,102.89l14.698,-14.698v14.698l-14.698,14.698zM884.50,132.28l14.698,-14.698v14.698l-14.698,14.698zM884.50,161.68l14.698,-14.698v14.698l-14.698,14.698zM884.50,191.07l14.698,-14.698v14.698l-14.698,14.698zM884.50,220.47l14.698,-14.698v14.698l-14.698,14.698zM884.50,249.87l14.698,-14.698v14.698l-14.698,14.698zM884.50,279.26l14.698,-14.698v14.698l-14.698,14.698zM884.50,308.66l14.698,-14.698v14.698l-14.698,14.698zM884.50,338.05l14.698,-14.698v14.698l-14.698,14.698zM884.50,367.45l14.698,-14.698v14.698l-14.698,14.698zM884.50,396.85l14.698,-14.698v14.698l-14.698,14.698zM899.20,-14.70l14.698,-14.698v14.698l-14.698,14.698zM899.20,14.70l14.698,-14.698v14.698l-14.698,14.698zM899.20,44.09l14.698,-14.698v14.698l-14.698,14.698zM899.20,73.49l14.698,-14.698v14.698l-14.698,14.698zM899.20,102.89l14.698,-14.698v14.698l-14.698,14.698zM899.20,132.28l14.698,-14.698v14.698l-14.698,14.698zM899.20,161.68l14.698,-14.698v14.698l-14.698,14.698zM899.20,191.07l14.698,-14.698v14.698l-14.698,14.698zM899.20,220.47l14.698,-14.698v14.698l-14.698,14.698zM899.20,249.87l14.698,-14.698v14.698l-14.698,14.698zM899.20,279.26l14.698,-14.698v14.698l-14.698,14.698zM899.20,308.66l14.698,-14.698v14.698l-14.698,14.698zM899.20,338.05l14.698,-14.698v14.698l-14.698,14.698zM899.20,367.45l14.698,-14.698v14.698l-14.698,14.698zM899.20,396.85l14.698,-14.698v14.698l-14.698,14.698zM913.90,-14.70l14.698,-14.698v14.698l-14.698,14.698zM913.90,14.70l14.698,-14.698v14.698l-14.698,14.698zM913.90,44.09l14.698,-14.698v14.698l-14.698,14.698zM913.90,73.49l14.698,-14.698v14.698l-14.698,14.698zM913.90,102.89l14.698,-14.698v14.698l-14.698,14.698zM913.90,132.28l14.698,-14.698v14.698l-14.698,14.698zM913.90,161.68l14.698,-14.698v14.698l-14.698,14.698zM913.90,191.07l14.698,-14.698v14.698l-14.698,14.698zM913.90,220.47l14.698,-14.698v14.698l-14.698,14.698zM913.90,249.87l14.698,-14.698v14.698l-14.698,14.698zM913.90,279.26l14.698,-14.698v14.698l-14.698,14.698zM913.90,308.66l14.698,-14.698v14.698l-14.698,14.698zM913.90,338.05l14.698,-14.698v14.698l-14.698,14.698zM913.90,367.45l14.698,-14.698v14.698l-14.698,14.698zM913.90,396.85l14.698,-14.698v14.698l-14.698,14.698zM928.59,-14.70l14.698,-14.698v14.698l-14.698,14.698zM928.59,14.70l14.698,-14.698v14.698l-14.698,14.698zM928.59,44.09l14.698,-14.698v14.698l-14.698,14.698zM928.59,73.49l14.698,-14.698v14.698l-14.698,14.698zM928.59,102.89l14.698,-14.698v14.698l-14.698,14.698zM928.59,132.28l14.698,-14.698v14.698l-14.698,14.698zM928.59,161.68l14.698,-14.698v14.698l-14.698,14.698zM928.59,191.07l14.698,-14.698v14.698l-14.698,14.698zM928.59,220.47l14.698,-14.698v14.698l-14.698,14.698zM928.59,249.87l14.698,-14.698v14.698l-14.698,14.698zM928.59,279.26l14.698,-14.698v14.698l-14.698,14.698zM928.59,308.66l14.698,-14.698v14.698l-14.698,14.698zM928.59,338.05l14.698,-14.698v14.698l-14.698,14.698zM928.59,367.45l14.698,-14.698v14.698l-14.698,14.698zM928.59,396.85l14.698,-14.698v14.698l-14.698,14.698zM943.29,-14.70l14.698,-14.698v14.698l-14.698,14.698zM943.29,14.70l14.698,-14.698v14.698l-14.698,14.698zM943.29,44.09l14.698,-14.698v14.698l-14.698,14.698zM943.29,73.49l14.698,-14.698v14.698l-14.698,14.698zM943.29,102.89l14.698,-14.698v14.698l-14.698,14.698zM943.29,132.28l14.698,-14.698v14.698l-14.698,14.698zM943.29,161.68l14.698,-14.698v14.698l-14.698,14.698zM943.29,191.07l14.698,-14.698v14.698l-14.698,14.698zM943.29,220.47l14.698,-14.698v14.698l-14.698,14.698zM943.29,249.87l14.698,-14.698v14.698l-14.698,14.698zM943.29,279.26l14.698,-14.698v14.698l-14.698,14.698zM943.29,308.66l14.698,-14.698v14.698l-14.698,14.698zM943.29,338.05l14.698,-14.698v14.698l-14.698,14.698zM943.29,367.45l14.698,-14.698v14.698l-14.698,14.698zM943.29,396.85l14.698,-14.698v14.698l-14.698,14.698zM957.99,-14.70l14.698,-14.698v14.698l-14.698,14.698zM957.99,14.70l14.698,-14.698v14.698l-14.698,14.698zM957.99,44.09l14.698,-14.698v14.698l-14.698,14.698zM957.99,73.49l14.698,-14.698v14.698l-14.698,14.698zM957.99,102.89l14.698,-14.698v14.698l-14.698,14.698zM957.99,132.28l14.698,-14.698v14.698l-14.698,14.698zM957.99,161.68l14.698,-14.698v14.698l-14.698,14.698zM957.99,191.07l14.698,-14.698v14.698l-14.698,14.698zM957.99,220.47l14.698,-14.698v14.698l-14.698,14.698zM957.99,249.87l14.698,-14.698v14.698l-14.698,14.698zM957.99,279.26l14.698,-14.698v14.698l-14.698,14.698zM957.99,308.66l14.698,-14.698v14.698l-14.698,14.698zM957.99,338.05l14.698,-14.698v14.698l-14.698,14.698zM957.99,367.45l14.698,-14.698v14.698l-14.698,14.698zM957.99,396.85l14.698,-14.698v14.698l-14.698,14.698zM972.69,-14.70l14.698,-14.698v14.698l-14.698,14.698zM972.69,14.70l14.698,-14.698v14.698l-14.698,14.698zM972.69,44.09l14.698,-14.698v14.698l-14.698,14.698zM972.69,73.49l14.698,-14.698v14.698l-14.698,14.698zM972.69,102.89l14.698,-14.698v14.698l-14.698,14.698zM972.69,132.28l14.698,-14.698v14.698l-14.698,14.698zM972.69,161.68l14.698,-14.698v14.698l-14.698,14.698zM972.69,191.07l14.698,-14.698v14.698l-14.698,14.698zM972.69,220.47l14.698,-14.698v14.698l-14.698,14.698zM972.69,249.87l14.698,-14.698v14.698l-14.698,14.698zM972.69,279.26l14.698,-14.698v14.698l-14.698,14.698zM972.69,308.66l14.698,-14.698v14.698l-14.698,14.698zM972.69,338.05l14.698,-14.698v14.698l-14.698,14.698zM972.69,367.45l14.698,-14.698v14.698l-14.698,14.698zM972.69,396.85l14.698,-14.698v14.698l-14.698,14.698zM987.39,-14.70l14.698,-14.698v14.698l-14.698,14.698zM987.39,14.70l14.698,-14.698v14.698l-14.698,14.698zM987.39,44.09l14.698,-14.698v14.698l-14.698,14.698zM987.39,73.49l14.698,-14.698v14.698l-14.698,14.698zM987.39,102.89l14.698,-14.698v14.698l-14.698,14.698zM987.39,132.28l14.698,-14.698v14.698l-14.698,14.698zM987.39,161.68l14.698,-14.698v14.698l-14.698,14.698zM987.39,191.07l14.698,-14.698v14.698l-14.698,14.698zM987.39,220.47l14.698,-14.698v14.698l-14.698,14.698zM987.39,249.87l14.698,-14.698v14.698l-14.698,14.698zM987.39,279.26l14.698,-14.698v14.698l-14.698,14.698zM987.39,308.66l14.698,-14.698v14.698l-14.698,14.698zM987.39,338.05l14.698,-14.698v14.698l-14.698,14.698zM987.39,367.45l14.698,-14.698v14.698l-14.698,14.698zM987.39,396.85l14.698,-14.698v14.698l-14.698,14.698zM1002.08,-14.70l14.698,-14.698v14.698l-14.698,14.698zM1002.08,14.70l14.698,-14.698v14.698l-14.698,14.698zM1002.08,44.09l14.698,-14.698v14.698l-14.698,14.698zM1002.08,73.49l14.698,-14.698v14.698l-14.698,14.698zM1002.08,102.89l14.698,-14.698v14.698l-14.698,14.698zM1002.08,132.28l14.698,-14.698v14.698l-14.698,14.698zM1002.08,161.68l14.698,-14.698v14.698l-14.698,14.698zM1002.08,191.07l14.698,-14.698v14.698l-14.698,14.698zM1002.08,220.47l14.698,-14.698v14.698l-14.698,14.698zM1002.08,249.87l14.698,-14.698v14.698l-14.698,14.698zM1002.08,279.26l14.698,-14.698v14.698l-14.698,14.698zM1002.08,308.66l14.698,-14.698v14.698l-14.698,14.698zM1002.08,338.05l14.698,-14.698v14.698l-14.698,14.698zM1002.08,367.45l14.698,-14.698v14.698l-14.698,14.698zM1002.08,396.85l14.698,-14.698v14.698l-14.698,14.698zM1016.78,-14.70l14.698,-14.698v14.698l-14.698,14.698zM1016.78,14.70l14.698,-14.698v14.698l-14.698,14.698zM1016.78,44.09l14.698,-14.698v14.698l-14.698,14.698zM1016.78,73.49l14.698,-14.698v14.698l-14.698,14.698zM1016.78,102.89l14.698,-14.698v14.698l-14.698,14.698zM1016.78,132.28l14.698,-14.698v14.698l-14.698,14.698zM1016.78,161.68l14.698,-14.698v14.698l-14.698,14.698zM1016.78,191.07l14.698,-14.698v14.698l-14.698,14.698zM1016.78,220.47l14.698,-14.698v14.698l-14.698,14.698zM1016.78,249.87l14.698,-14.698v14.698l-14.698,14.698zM1016.78,279.26l14.698,-14.698v14.698l-14.698,14.698zM1016.78,308.66l14.698,-14.698v14.698l-14.698,14.698zM1016.78,338.05l14.698,-14.698v14.698l-14.698,14.698zM1016.78,367.45l14.698,-14.698v14.698l-14.698,14.698zM1016.78,396.85l14.698,-14.698v14.698l-14.698,14.698zM1031.48,-14.70l14.698,-14.698v14.698l-14.698,14.698zM1031.48,14.70l14.698,-14.698v14.698l-14.698,14.698zM1031.48,44.09l14.698,-14.698v14.698l-14.698,14.698zM1031.48,73.49l14.698,-14.698v14.698l-14.698,14.698zM1031.48,102.89l14.698,-14.698v14.698l-14.698,14.698zM1031.48,132.28l14.698,-14.698v14.698l-14.698,14.698zM1031.48,161.68l14.698,-14.698v14.698l-14.698,14.698zM1031.48,191.07l14.698,-14.698v14.698l-14.698,14.698zM1031.48,220.47l14.698,-14.698v14.698l-14.698,14.698zM1031.48,249.87l14.698,-14.698v14.698l-14.698,14.698zM1031.48,279.26l14.698,-14.698v14.698l-14.698,14.698zM1031.48,308.66l14.698,-14.698v14.698l-14.698,14.698zM1031.48,338.05l14.698,-14.698v14.698l-14.698,14.698zM1031.48,367.45l14.698,-14.698v14.698l-14.698,14.698zM1031.48,396.85l14.698,-14.698v14.698l-14.698,14.698zM1046.18,-14.70l14.698,-14.698v14.698l-14.698,14.698zM1046.18,14.70l14.698,-14.698v14.698l-14.698,14.698zM1046.18,44.09l14.698,-14.698v14.698l-14.698,14.698zM1046.18,73.49l14.698,-14.698v14.698l-14.698,14.698zM1046.18,102.89l14.698,-14.698v14.698l-14.698,14.698zM1046.18,132.28l14.698,-14.698v14.698l-14.698,14.698zM1046.18,161.68l14.698,-14.698v14.698l-14.698,14.698zM1046.18,191.07l14.698,-14.698v14.698l-14.698,14.698zM1046.18,220.47l14.698,-14.698v14.698l-14.698,14.698zM1046.18,249.87l14.698,-14.698v14.698l-14.698,14.698zM1046.18,279.26l14.698,-14.698v14.698l-14.698,14.698zM1046.18,308.66l14.698,-14.698v14.698l-14.698,14.698zM1046.18,338.05l14.698,-14.698v14.698l-14.698,14.698zM1046.18,367.45l14.698,-14.698v14.698l-14.698,14.698zM1046.18,396.85l14.698,-14.698v14.698l-14.698,14.698zM1060.88,-14.70l14.698,-14.698v14.698l-14.698,14.698zM1060.88,14.70l14.698,-14.698v14.698l-14.698,14.698zM1060.88,44.09l14.698,-14.698v14.698l-14.698,14.698zM1060.88,73.49l14.698,-14.698v14.698l-14.698,14.698zM1060.88,102.89l14.698,-14.698v14.698l-14.698,14.698zM1060.88,132.28l14.698,-14.698v14.698l-14.698,14.698zM1060.88,161.68l14.698,-14.698v14.698l-14.698,14.698zM1060.88,191.07l14.698,-14.698v14.698l-14.698,14.698zM1060.88,220.47l14.698,-14.698v14.698l-14.698,14.698zM1060.88,249.87l14.698,-14.698v14.698l-14.698,14.698zM1060.88,279.26l14.698,-14.698v14.698l-14.698,14.698zM1060.88,308.66l14.698,-14.698v14.698l-14.698,14.698zM1060.88,338.05l14.698,-14.698v14.698l-14.698,14.698zM1060.88,367.45l14.698,-14.698v14.698l-14.698,14.698zM1060.88,396.85l14.698,-14.698v14.698l-14.698,14.698zM1075.57,-14.70l14.698,-14.698v14.698l-14.698,14.698zM1075.57,14.70l14.698,-14.698v14.698l-14.698,14.698zM1075.57,44.09l14.698,-14.698v14.698l-14.698,14.698zM1075.57,73.49l14.698,-14.698v14.698l-14.698,14.698zM1075.57,102.89l14.698,-14.698v14.698l-14.698,14.698zM1075.57,132.28l14.698,-14.698v14.698l-14.698,14.698zM1075.57,161.68l14.698,-14.698v14.698l-14.698,14.698zM1075.57,191.07l14.698,-14.698v14.698l-14.698,14.698zM1075.57,220.47l14.698,-14.698v14.698l-14.698,14.698zM1075.57,249.87l14.698,-14.698v14.698l-14.698,14.698zM1075.57,279.26l14.698,-14.698v14.698l-14.698,14.698zM1075.57,308.66l14.698,-14.698v14.698l-14.698,14.698zM1075.57,338.05l14.698,-14.698v14.698l-14.698,14.698zM1075.57,367.45l14.698,-14.698v14.698l-14.698,14.698zM1075.57,396.85l14.698,-14.698v14.698l-14.698,14.698zM1090.27,-14.70l14.698,-14.698v14.698l-14.698,14.698zM1090.27,14.70l14.698,-14.698v14.698l-14.698,14.698zM1090.27,44.09l14.698,-14.698v14.698l-14.698,14.698zM1090.27,73.49l14.698,-14.698v14.698l-14.698,14.698zM1090.27,102.89l14.698,-14.698v14.698l-14.698,14.698zM1090.27,132.28l14.698,-14.698v14.698l-14.698,14.698zM1090.27,161.68l14.698,-14.698v14.698l-14.698,14.698zM1090.27,191.07l14.698,-14.698v14.698l-14.698,14.698zM1090.27,220.47l14.698,-14.698v14.698l-14.698,14.698zM1090.27,249.87l14.698,-14.698v14.698l-14.698,14.698zM1090.27,279.26l14.698,-14.698v14.698l-14.698,14.698zM1090.27,308.66l14.698,-14.698v14.698l-14.698,14.698zM1090.27,338.05l14.698,-14.698v14.698l-14.698,14.698zM1090.27,367.45l14.698,-14.698v14.698l-14.698,14.698zM1090.27,396.85l14.698,-14.698v14.698l-14.698,14.698zM1104.97,-14.70l14.698,-14.698v14.698l-14.698,14.698zM1104.97,14.70l14.698,-14.698v14.698l-14.698,14.698zM1104.97,44.09l14.698,-14.698v14.698l-14.698,14.698zM1104.97,73.49l14.698,-14.698v14.698l-14.698,14.698zM1104.97,102.89l14.698,-14.698v14.698l-14.698,14.698zM1104.97,132.28l14.698,-14.698v14.698l-14.698,14.698zM1104.97,161.68l14.698,-14.698v14.698l-14.698,14.698zM1104.97,191.07l14.698,-14.698v14.698l-14.698,14.698zM1104.97,220.47l14.698,-14.698v14.698l-14.698,14.698zM1104.97,249.87l14.698,-14.698v14.698l-14.698,14.698zM1104.97,279.26l14.698,-14.698v14.698l-14.698,14.698zM1104.97,308.66l14.698,-14.698v14.698l-14.698,14.698zM1104.97,338.05l14.698,-14.698v14.698l-14.698,14.698zM1104.97,367.45l14.698,-14.698v14.698l-14.698,14.698zM1104.97,396.85l14.698,-14.698v14.698l-14.698,14.698zM1119.67,-14.70l14.698,-14.698v14.698l-14.698,14.698zM1119.67,14.70l14.698,-14.698v14.698l-14.698,14.698zM1119.67,44.09l14.698,-14.698v14.698l-14.698,14.698zM1119.67,73.49l14.698,-14.698v14.698l-14.698,14.698zM1119.67,102.89l14.698,-14.698v14.698l-14.698,14.698zM1119.67,132.28l14.698,-14.698v14.698l-14.698,14.698zM1119.67,161.68l14.698,-14.698v14.698l-14.698,14.698zM1119.67,191.07l14.698,-14.698v14.698l-14.698,14.698zM1119.67,220.47l14.698,-14.698v14.698l-14.698,14.698zM1119.67,249.87l14.698,-14.698v14.698l-14.698,14.698zM1119.67,279.26l14.698,-14.698v14.698l-14.698,14.698zM1119.67,308.66l14.698,-14.698v14.698l-14.698,14.698zM1119.67,338.05l14.698,-14.698v14.698l-14.698,14.698zM1119.67,367.45l14.698,-14.698v14.698l-14.698,14.698zM1119.67,396.85l14.698,-14.698v14.698l-14.698,14.698zM1134.37,-14.70l14.698,-14.698v14.698l-14.698,14.698zM1134.37,14.70l14.698,-14.698v14.698l-14.698,14.698zM1134.37,44.09l14.698,-14.698v14.698l-14.698,14.698zM1134.37,73.49l14.698,-14.698v14.698l-14.698,14.698zM1134.37,102.89l14.698,-14.698v14.698l-14.698,14.698zM1134.37,132.28l14.698,-14.698v14.698l-14.698,14.698zM1134.37,161.68l14.698,-14.698v14.698l-14.698,14.698zM1134.37,191.07l14.698,-14.698v14.698l-14.698,14.698zM1134.37,220.47l14.698,-14.698v14.698l-14.698,14.698zM1134.37,249.87l14.698,-14.698v14.698l-14.698,14.698zM1134.37,279.26l14.698,-14.698v14.698l-14.698,14.698zM1134.37,308.66l14.698,-14.698v14.698l-14.698,14.698zM1134.37,338.05l14.698,-14.698v14.698l-14.698,14.698zM1134.37,367.45l14.698,-14.698v14.698l-14.698,14.698zM1134.37,396.85l14.698,-14.698v14.698l-14.698,14.698zM1149.06,-14.70l14.698,-14.698v14.698l-14.698,14.698zM1149.06,14.70l14.698,-14.698v14.698l-14.698,14.698zM1149.06,44.09l14.698,-14.698v14.698l-14.698,14.698zM1149.06,73.49l14.698,-14.698v14.698l-14.698,14.698zM1149.06,102.89l14.698,-14.698v14.698l-14.698,14.698zM1149.06,132.28l14.698,-14.698v14.698l-14.698,14.698zM1149.06,161.68l14.698,-14.698v14.698l-14.698,14.698zM1149.06,191.07l14.698,-14.698v14.698l-14.698,14.698zM1149.06,220.47l14.698,-14.698v14.698l-14.698,14.698zM1149.06,249.87l14.698,-14.698v14.698l-14.698,14.698zM1149.06,279.26l14.698,-14.698v14.698l-14.698,14.698zM1149.06,308.66l14.698,-14.698v14.698l-14.698,14.698zM1149.06,338.05l14.698,-14.698v14.698l-14.698,14.698zM1149.06,367.45l14.698,-14.698v14.698l-14.698,14.698zM1149.06,396.85l14.698,-14.698v14.698l-14.698,14.698zM1163.76,-14.70l14.698,-14.698v14.698l-14.698,14.698zM1163.76,14.70l14.698,-14.698v14.698l-14.698,14.698zM1163.76,44.09l14.698,-14.698v14.698l-14.698,14.698zM1163.76,73.49l14.698,-14.698v14.698l-14.698,14.698zM1163.76,102.89l14.698,-14.698v14.698l-14.698,14.698zM1163.76,132.28l14.698,-14.698v14.698l-14.698,14.698zM1163.76,161.68l14.698,-14.698v14.698l-14.698,14.698zM1163.76,191.07l14.698,-14.698v14.698l-14.698,14.698zM1163.76,220.47l14.698,-14.698v14.698l-14.698,14.698zM1163.76,249.87l14.698,-14.698v14.698l-14.698,14.698zM1163.76,279.26l14.698,-14.698v14.698l-14.698,14.698zM1163.76,308.66l14.698,-14.698v14.698l-14.698,14.698zM1163.76,338.05l14.698,-14.698v14.698l-14.698,14.698zM1163.76,367.45l14.698,-14.698v14.698l-14.698,14.698zM1163.76,396.85l14.698,-14.698v14.698l-14.698,14.698zM1178.46,-14.70l14.698,-14.698v14.698l-14.698,14.698zM1178.46,14.70l14.698,-14.698v14.698l-14.698,14.698zM1178.46,44.09l14.698,-14.698v14.698l-14.698,14.698zM1178.46,73.49l14.698,-14.698v14.698l-14.698,14.698zM1178.46,102.89l14.698,-14.698v14.698l-14.698,14.698zM1178.46,132.28l14.698,-14.698v14.698l-14.698,14.698zM1178.46,161.68l14.698,-14.698v14.698l-14.698,14.698zM1178.46,191.07l14.698,-14.698v14.698l-14.698,14.698zM1178.46,220.47l14.698,-14.698v14.698l-14.698,14.698zM1178.46,249.87l14.698,-14.698v14.698l-14.698,14.698zM1178.46,279.26l14.698,-14.698v14.698l-14.698,14.698zM1178.46,308.66l14.698,-14.698v14.698l-14.698,14.698zM1178.46,338.05l14.698,-14.698v14.698l-14.698,14.698zM1178.46,367.45l14.698,-14.698v14.698l-14.698,14.698zM1178.46,396.85l14.698,-14.698v14.698l-14.698,14.698zM1193.16,-14.70l14.698,-14.698v14.698l-14.698,14.698zM1193.16,14.70l14.698,-14.698v14.698l-14.698,14.698zM1193.16,44.09l14.698,-14.698v14.698l-14.698,14.698zM1193.16,73.49l14.698,-14.698v14.698l-14.698,14.698zM1193.16,102.89l14.698,-14.698v14.698l-14.698,14.698zM1193.16,132.28l14.698,-14.698v14.698l-14.698,14.698zM1193.16,161.68l14.698,-14.698v14.698l-14.698,14.698zM1193.16,191.07l14.698,-14.698v14.698l-14.698,14.698zM1193.16,220.47l14.698,-14.698v14.698l-14.698,14.698zM1193.16,249.87l14.698,-14.698v14.698l-14.698,14.698zM1193.16,279.26l14.698,-14.698v14.698l-14.698,14.698zM1193.16,308.66l14.698,-14.698v14.698l-14.698,14.698zM1193.16,338.05l14.698,-14.698v14.698l-14.698,14.698zM1193.16,367.45l14.698,-14.698v14.698l-14.698,14.698zM1193.16,396.85l14.698,-14.698v14.698l-14.698,14.698zM1207.86,-14.70l14.698,-14.698v14.698l-14.698,14.698zM1207.86,14.70l14.698,-14.698v14.698l-14.698,14.698zM1207.86,44.09l14.698,-14.698v14.698l-14.698,14.698zM1207.86,73.49l14.698,-14.698v14.698l-14.698,14.698zM1207.86,102.89l14.698,-14.698v14.698l-14.698,14.698zM1207.86,132.28l14.698,-14.698v14.698l-14.698,14.698zM1207.86,161.68l14.698,-14.698v14.698l-14.698,14.698zM1207.86,191.07l14.698,-14.698v14.698l-14.698,14.698zM1207.86,220.47l14.698,-14.698v14.698l-14.698,14.698zM1207.86,249.87l14.698,-14.698v14.698l-14.698,14.698zM1207.86,279.26l14.698,-14.698v14.698l-14.698,14.698zM1207.86,308.66l14.698,-14.698v14.698l-14.698,14.698zM1207.86,338.05l14.698,-14.698v14.698l-14.698,14.698zM1207.86,367.45l14.698,-14.698v14.698l-14.698,14.698zM1207.86,396.85l14.698,-14.698v14.698l-14.698,14.698zM1222.55,-14.70l14.698,-14.698v14.698l-14.698,14.698zM1222.55,14.70l14.698,-14.698v14.698l-14.698,14.698zM1222.55,44.09l14.698,-14.698v14.698l-14.698,14.698zM1222.55,73.49l14.698,-14.698v14.698l-14.698,14.698zM1222.55,102.89l14.698,-14.698v14.698l-14.698,14.698zM1222.55,132.28l14.698,-14.698v14.698l-14.698,14.698zM1222.55,161.68l14.698,-14.698v14.698l-14.698,14.698zM1222.55,191.07l14.698,-14.698v14.698l-14.698,14.698zM1222.55,220.47l14.698,-14.698v14.698l-14.698,14.698zM1222.55,249.87l14.698,-14.698v14.698l-14.698,14.698zM1222.55,279.26l14.698,-14.698v14.698l-14.698,14.698zM1222.55,308.66l14.698,-14.698v14.698l-14.698,14.698zM1222.55,338.05l14.698,-14.698v14.698l-14.698,14.698zM1222.55,367.45l14.698,-14.698v14.698l-14.698,14.698zM1222.55,396.85l14.698,-14.698v14.698l-14.698,14.698zM1237.25,-14.70l14.698,-14.698v14.698l-14.698,14.698zM1237.25,14.70l14.698,-14.698v14.698l-14.698,14.698zM1237.25,44.09l14.698,-14.698v14.698l-14.698,14.698zM1237.25,73.49l14.698,-14.698v14.698l-14.698,14.698zM1237.25,102.89l14.698,-14.698v14.698l-14.698,14.698zM1237.25,132.28l14.698,-14.698v14.698l-14.698,14.698zM1237.25,161.68l14.698,-14.698v14.698l-14.698,14.698zM1237.25,191.07l14.698,-14.698v14.698l-14.698,14.698zM1237.25,220.47l14.698,-14.698v14.698l-14.698,14.698zM1237.25,249.87l14.698,-14.698v14.698l-14.698,14.698zM1237.25,279.26l14.698,-14.698v14.698l-14.698,14.698zM1237.25,308.66l14.698,-14.698v14.698l-14.698,14.698zM1237.25,338.05l14.698,-14.698v14.698l-14.698,14.698zM1237.25,367.45l14.698,-14.698v14.698l-14.698,14.698zM1237.25,396.85l14.698,-14.698v14.698l-14.698,14.698zM1251.95,-14.70l14.698,-14.698v14.698l-14.698,14.698zM1251.95,14.70l14.698,-14.698v14.698l-14.698,14.698zM1251.95,44.09l14.698,-14.698v14.698l-14.698,14.698zM1251.95,73.49l14.698,-14.698v14.698l-14.698,14.698zM1251.95,102.89l14.698,-14.698v14.698l-14.698,14.698zM1251.95,132.28l14.698,-14.698v14.698l-14.698,14.698zM1251.95,161.68l14.698,-14.698v14.698l-14.698,14.698zM1251.95,191.07l14.698,-14.698v14.698l-14.698,14.698zM1251.95,220.47l14.698,-14.698v14.698l-14.698,14.698zM1251.95,249.87l14.698,-14.698v14.698l-14.698,14.698zM1251.95,279.26l14.698,-14.698v14.698l-14.698,14.698zM1251.95,308.66l14.698,-14.698v14.698l-14.698,14.698zM1251.95,338.05l14.698,-14.698v14.698l-14.698,14.698zM1251.95,367.45l14.698,-14.698v14.698l-14.698,14.698zM1251.95,396.85l14.698,-14.698v14.698l-14.698,14.698zM1266.65,-14.70l14.698,-14.698v14.698l-14.698,14.698zM1266.65,14.70l14.698,-14.698v14.698l-14.698,14.698zM1266.65,44.09l14.698,-14.698v14.698l-14.698,14.698zM1266.65,73.49l14.698,-14.698v14.698l-14.698,14.698zM1266.65,102.89l14.698,-14.698v14.698l-14.698,14.698zM1266.65,132.28l14.698,-14.698v14.698l-14.698,14.698zM1266.65,161.68l14.698,-14.698v14.698l-14.698,14.698zM1266.65,191.07l14.698,-14.698v14.698l-14.698,14.698zM1266.65,220.47l14.698,-14.698v14.698l-14.698,14.698zM1266.65,249.87l14.698,-14.698v14.698l-14.698,14.698zM1266.65,279.26l14.698,-14.698v14.698l-14.698,14.698zM1266.65,308.66l14.698,-14.698v14.698l-14.698,14.698zM1266.65,338.05l14.698,-14.698v14.698l-14.698,14.698zM1266.65,367.45l14.698,-14.698v14.698l-14.698,14.698zM1266.65,396.85l14.698,-14.698v14.698l-14.698,14.698zM1281.35,-14.70l14.698,-14.698v14.698l-14.698,14.698zM1281.35,14.70l14.698,-14.698v14.698l-14.698,14.698zM1281.35,44.09l14.698,-14.698v14.698l-14.698,14.698zM1281.35,73.49l14.698,-14.698v14.698l-14.698,14.698zM1281.35,102.89l14.698,-14.698v14.698l-14.698,14.698zM1281.35,132.28l14.698,-14.698v14.698l-14.698,14.698zM1281.35,161.68l14.698,-14.698v14.698l-14.698,14.698zM1281.35,191.07l14.698,-14.698v14.698l-14.698,14.698zM1281.35,220.47l14.698,-14.698v14.698l-14.698,14.698zM1281.35,249.87l14.698,-14.698v14.698l-14.698,14.698zM1281.35,279.26l14.698,-14.698v14.698l-14.698,14.698zM1281.35,308.66l14.698,-14.698v14.698l-14.698,14.698zM1281.35,338.05l14.698,-14.698v14.698l-14.698,14.698zM1281.35,367.45l14.698,-14.698v14.698l-14.698,14.698zM1281.35,396.85l14.698,-14.698v14.698l-14.698,14.698zM1296.04,-14.70l14.698,-14.698v14.698l-14.698,14.698zM1296.04,14.70l14.698,-14.698v14.698l-14.698,14.698zM1296.04,44.09l14.698,-14.698v14.698l-14.698,14.698zM1296.04,73.49l14.698,-14.698v14.698l-14.698,14.698zM1296.04,102.89l14.698,-14.698v14.698l-14.698,14.698zM1296.04,132.28l14.698,-14.698v14.698l-14.698,14.698zM1296.04,161.68l14.698,-14.698v14.698l-14.698,14.698zM1296.04,191.07l14.698,-14.698v14.698l-14.698,14.698zM1296.04,220.47l14.698,-14.698v14.698l-14.698,14.698zM1296.04,249.87l14.698,-14.698v14.698l-14.698,14.698zM1296.04,279.26l14.698,-14.698v14.698l-14.698,14.698zM1296.04,308.66l14.698,-14.698v14.698l-14.698,14.698zM1296.04,338.05l14.698,-14.698v14.698l-14.698,14.698zM1296.04,367.45l14.698,-14.698v14.698l-14.698,14.698zM1296.04,396.85l14.698,-14.698v14.698l-14.698,14.698zM1310.74,-14.70l14.698,-14.698v14.698l-14.698,14.698zM1310.74,14.70l14.698,-14.698v14.698l-14.698,14.698zM1310.74,44.09l14.698,-14.698v14.698l-14.698,14.698zM1310.74,73.49l14.698,-14.698v14.698l-14.698,14.698zM1310.74,102.89l14.698,-14.698v14.698l-14.698,14.698zM1310.74,132.28l14.698,-14.698v14.698l-14.698,14.698zM1310.74,161.68l14.698,-14.698v14.698l-14.698,14.698zM1310.74,191.07l14.698,-14.698v14.698l-14.698,14.698zM1310.74,220.47l14.698,-14.698v14.698l-14.698,14.698zM1310.74,249.87l14.698,-14.698v14.698l-14.698,14.698zM1310.74,279.26l14.698,-14.698v14.698l-14.698,14.698zM1310.74,308.66l14.698,-14.698v14.698l-14.698,14.698zM1310.74,338.05l14.698,-14.698v14.698l-14.698,14.698zM1310.74,367.45l14.698,-14.698v14.698l-14.698,14.698zM1310.74,396.85l14.698,-14.698v14.698l-14.698,14.698zM1325.44,-14.70l14.698,-14.698v14.698l-14.698,14.698zM1325.44,14.70l14.698,-14.698v14.698l-14.698,14.698zM1325.44,44.09l14.698,-14.698v14.698l-14.698,14.698zM1325.44,73.49l14.698,-14.698v14.698l-14.698,14.698zM1325.44,102.89l14.698,-14.698v14.698l-14.698,14.698zM1325.44,132.28l14.698,-14.698v14.698l-14.698,14.698zM1325.44,161.68l14.698,-14.698v14.698l-14.698,14.698zM1325.44,191.07l14.698,-14.698v14.698l-14.698,14.698zM1325.44,220.47l14.698,-14.698v14.698l-14.698,14.698zM1325.44,249.87l14.698,-14.698v14.698l-14.698,14.698zM1325.44,279.26l14.698,-14.698v14.698l-14.698,14.698zM1325.44,308.66l14.698,-14.698v14.698l-14.698,14.698zM1325.44,338.05l14.698,-14.698v14.698l-14.698,14.698zM1325.44,367.45l14.698,-14.698v14.698l-14.698,14.698zM1325.44,396.85l14.698,-14.698v14.698l-14.698,14.698zM1340.14,-14.70l14.698,-14.698v14.698l-14.698,14.698zM1340.14,14.70l14.698,-14.698v14.698l-14.698,14.698zM1340.14,44.09l14.698,-14.698v14.698l-14.698,14.698zM1340.14,73.49l14.698,-14.698v14.698l-14.698,14.698zM1340.14,102.89l14.698,-14.698v14.698l-14.698,14.698zM1340.14,132.28l14.698,-14.698v14.698l-14.698,14.698zM1340.14,161.68l14.698,-14.698v14.698l-14.698,14.698zM1340.14,191.07l14.698,-14.698v14.698l-14.698,14.698zM1340.14,220.47l14.698,-14.698v14.698l-14.698,14.698zM1340.14,249.87l14.698,-14.698v14.698l-14.698,14.698zM1340.14,279.26l14.698,-14.698v14.698l-14.698,14.698zM1340.14,308.66l14.698,-14.698v14.698l-14.698,14.698zM1340.14,338.05l14.698,-14.698v14.698l-14.698,14.698zM1340.14,367.45l14.698,-14.698v14.698l-14.698,14.698zM1340.14,396.85l14.698,-14.698v14.698l-14.698,14.698zM1354.84,-14.70l14.698,-14.698v14.698l-14.698,14.698zM1354.84,14.70l14.698,-14.698v14.698l-14.698,14.698zM1354.84,44.09l14.698,-14.698v14.698l-14.698,14.698zM1354.84,73.49l14.698,-14.698v14.698l-14.698,14.698zM1354.84,102.89l14.698,-14.698v14.698l-14.698,14.698zM1354.84,132.28l14.698,-14.698v14.698l-14.698,14.698zM1354.84,161.68l14.698,-14.698v14.698l-14.698,14.698zM1354.84,191.07l14.698,-14.698v14.698l-14.698,14.698zM1354.84,220.47l14.698,-14.698v14.698l-14.698,14.698zM1354.84,249.87l14.698,-14.698v14.698l-14.698,14.698zM1354.84,279.26l14.698,-14.698v14.698l-14.698,14.698zM1354.84,308.66l14.698,-14.698v14.698l-14.698,14.698zM1354.84,338.05l14.698,-14.698v14.698l-14.698,14.698zM1354.84,367.45l14.698,-14.698v14.698l-14.698,14.698zM1354.84,396.85l14.698,-14.698v14.698l-14.698,14.698zM1369.53,-14.70l14.698,-14.698v14.698l-14.698,14.698zM1369.53,14.70l14.698,-14.698v14.698l-14.698,14.698zM1369.53,44.09l14.698,-14.698v14.698l-14.698,14.698zM1369.53,73.49l14.698,-14.698v14.698l-14.698,14.698zM1369.53,102.89l14.698,-14.698v14.698l-14.698,14.698zM1369.53,132.28l14.698,-14.698v14.698l-14.698,14.698zM1369.53,161.68l14.698,-14.698v14.698l-14.698,14.698zM1369.53,191.07l14.698,-14.698v14.698l-14.698,14.698zM1369.53,220.47l14.698,-14.698v14.698l-14.698,14.698zM1369.53,249.87l14.698,-14.698v14.698l-14.698,14.698zM1369.53,279.26l14.698,-14.698v14.698l-14.698,14.698zM1369.53,308.66l14.698,-14.698v14.698l-14.698,14.698zM1369.53,338.05l14.698,-14.698v14.698l-14.698,14.698zM1369.53,367.45l14.698,-14.698v14.698l-14.698,14.698zM1369.53,396.85l14.698,-14.698v14.698l-14.698,14.698zM1384.23,-14.70l14.698,-14.698v14.698l-14.698,14.698zM1384.23,14.70l14.698,-14.698v14.698l-14.698,14.698zM1384.23,44.09l14.698,-14.698v14.698l-14.698,14.698zM1384.23,73.49l14.698,-14.698v14.698l-14.698,14.698zM1384.23,102.89l14.698,-14.698v14.698l-14.698,14.698zM1384.23,132.28l14.698,-14.698v14.698l-14.698,14.698zM1384.23,161.68l14.698,-14.698v14.698l-14.698,14.698zM1384.23,191.07l14.698,-14.698v14.698l-14.698,14.698zM1384.23,220.47l14.698,-14.698v14.698l-14.698,14.698zM1384.23,249.87l14.698,-14.698v14.698l-14.698,14.698zM1384.23,279.26l14.698,-14.698v14.698l-14.698,14.698zM1384.23,308.66l14.698,-14.698v14.698l-14.698,14.698zM1384.23,338.05l14.698,-14.698v14.698l-14.698,14.698zM1384.23,367.45l14.698,-14.698v14.698l-14.698,14.698zM1384.23,396.85l14.698,-14.698v14.698l-14.698,14.698zM1398.93,-14.70l14.698,-14.698v14.698l-14.698,14.698zM1398.93,14.70l14.698,-14.698v14.698l-14.698,14.698zM1398.93,44.09l14.698,-14.698v14.698l-14.698,14.698zM1398.93,73.49l14.698,-14.698v14.698l-14.698,14.698zM1398.93,102.89l14.698,-14.698v14.698l-14.698,14.698zM1398.93,132.28l14.698,-14.698v14.698l-14.698,14.698zM1398.93,161.68l14.698,-14.698v14.698l-14.698,14.698zM1398.93,191.07l14.698,-14.698v14.698l-14.698,14.698zM1398.93,220.47l14.698,-14.698v14.698l-14.698,14.698zM1398.93,249.87l14.698,-14.698v14.698l-14.698,14.698zM1398.93,279.26l14.698,-14.698v14.698l-14.698,14.698zM1398.93,308.66l14.698,-14.698v14.698l-14.698,14.698zM1398.93,338.05l14.698,-14.698v14.698l-14.698,14.698zM1398.93,367.45l14.698,-14.698v14.698l-14.698,14.698zM1398.93,396.85l14.698,-14.698v14.698l-14.698,14.698zM1413.63,-14.70l14.698,-14.698v14.698l-14.698,14.698zM1413.63,14.70l14.698,-14.698v14.698l-14.698,14.698zM1413.63,44.09l14.698,-14.698v14.698l-14.698,14.698zM1413.63,73.49l14.698,-14.698v14.698l-14.698,14.698zM1413.63,102.89l14.698,-14.698v14.698l-14.698,14.698zM1413.63,132.28l14.698,-14.698v14.698l-14.698,14.698zM1413.63,161.68l14.698,-14.698v14.698l-14.698,14.698zM1413.63,191.07l14.698,-14.698v14.698l-14.698,14.698zM1413.63,220.47l14.698,-14.698v14.698l-14.698,14.698zM1413.63,249.87l14.698,-14.698v14.698l-14.698,14.698zM1413.63,279.26l14.698,-14.698v14.698l-14.698,14.698zM1413.63,308.66l14.698,-14.698v14.698l-14.698,14.698zM1413.63,338.05l14.698,-14.698v14.698l-14.698,14.698zM1413.63,367.45l14.698,-14.698v14.698l-14.698,14.698zM1413.63,396.85l14.698,-14.698v14.698l-14.698,14.698zM1428.33,-14.70l14.698,-14.698v14.698l-14.698,14.698zM1428.33,14.70l14.698,-14.698v14.698l-14.698,14.698zM1428.33,44.09l14.698,-14.698v14.698l-14.698,14.698zM1428.33,73.49l14.698,-14.698v14.698l-14.698,14.698zM1428.33,102.89l14.698,-14.698v14.698l-14.698,14.698zM1428.33,132.28l14.698,-14.698v14.698l-14.698,14.698zM1428.33,161.68l14.698,-14.698v14.698l-14.698,14.698zM1428.33,191.07l14.698,-14.698v14.698l-14.698,14.698zM1428.33,220.47l14.698,-14.698v14.698l-14.698,14.698zM1428.33,249.87l14.698,-14.698v14.698l-14.698,14.698zM1428.33,279.26l14.698,-14.698v14.698l-14.698,14.698zM1428.33,308.66l14.698,-14.698v14.698l-14.698,14.698zM1428.33,338.05l14.698,-14.698v14.698l-14.698,14.698zM1428.33,367.45l14.698,-14.698v14.698l-14.698,14.698zM1428.33,396.85l14.698,-14.698v14.698l-14.698,14.698zM1443.02,-14.70l14.698,-14.698v14.698l-14.698,14.698zM1443.02,14.70l14.698,-14.698v14.698l-14.698,14.698zM1443.02,44.09l14.698,-14.698v14.698l-14.698,14.698zM1443.02,73.49l14.698,-14.698v14.698l-14.698,14.698zM1443.02,102.89l14.698,-14.698v14.698l-14.698,14.698zM1443.02,132.28l14.698,-14.698v14.698l-14.698,14.698zM1443.02,161.68l14.698,-14.698v14.698l-14.698,14.698zM1443.02,191.07l14.698,-14.698v14.698l-14.698,14.698zM1443.02,220.47l14.698,-14.698v14.698l-14.698,14.698zM1443.02,249.87l14.698,-14.698v14.698l-14.698,14.698zM1443.02,279.26l14.698,-14.698v14.698l-14.698,14.698zM1443.02,308.66l14.698,-14.698v14.698l-14.698,14.698zM1443.02,338.05l14.698,-14.698v14.698l-14.698,14.698zM1443.02,367.45l14.698,-14.698v14.698l-14.698,14.698zM1443.02,396.85l14.698,-14.698v14.698l-14.698,14.698zM1457.72,-14.70l14.698,-14.698v14.698l-14.698,14.698zM1457.72,14.70l14.698,-14.698v14.698l-14.698,14.698zM1457.72,44.09l14.698,-14.698v14.698l-14.698,14.698zM1457.72,73.49l14.698,-14.698v14.698l-14.698,14.698zM1457.72,102.89l14.698,-14.698v14.698l-14.698,14.698zM1457.72,132.28l14.698,-14.698v14.698l-14.698,14.698zM1457.72,161.68l14.698,-14.698v14.698l-14.698,14.698zM1457.72,191.07l14.698,-14.698v14.698l-14.698,14.698zM1457.72,220.47l14.698,-14.698v14.698l-14.698,14.698zM1457.72,249.87l14.698,-14.698v14.698l-14.698,14.698zM1457.72,279.26l14.698,-14.698v14.698l-14.698,14.698zM1457.72,308.66l14.698,-14.698v14.698l-14.698,14.698zM1457.72,338.05l14.698,-14.698v14.698l-14.698,14.698zM1457.72,367.45l14.698,-14.698v14.698l-14.698,14.698zM1457.72,396.85l14.698,-14.698v14.698l-14.698,14.698zM1472.42,-14.70l14.698,-14.698v14.698l-14.698,14.698zM1472.42,14.70l14.698,-14.698v14.698l-14.698,14.698zM1472.42,44.09l14.698,-14.698v14.698l-14.698,14.698zM1472.42,73.49l14.698,-14.698v14.698l-14.698,14.698zM1472.42,102.89l14.698,-14.698v14.698l-14.698,14.698zM1472.42,132.28l14.698,-14.698v14.698l-14.698,14.698zM1472.42,161.68l14.698,-14.698v14.698l-14.698,14.698zM1472.42,191.07l14.698,-14.698v14.698l-14.698,14.698zM1472.42,220.47l14.698,-14.698v14.698l-14.698,14.698zM1472.42,249.87l14.698,-14.698v14.698l-14.698,14.698zM1472.42,279.26l14.698,-14.698v14.698l-14.698,14.698zM1472.42,308.66l14.698,-14.698v14.698l-14.698,14.698zM1472.42,338.05l14.698,-14.698v14.698l-14.698,14.698zM1472.42,367.45l14.698,-14.698v14.698l-14.698,14.698zM1472.42,396.85l14.698,-14.698v14.698l-14.698,14.698zM1487.12,-14.70l14.698,-14.698v14.698l-14.698,14.698zM1487.12,14.70l14.698,-14.698v14.698l-14.698,14.698zM1487.12,44.09l14.698,-14.698v14.698l-14.698,14.698zM1487.12,73.49l14.698,-14.698v14.698l-14.698,14.698zM1487.12,102.89l14.698,-14.698v14.698l-14.698,14.698zM1487.12,132.28l14.698,-14.698v14.698l-14.698,14.698zM1487.12,161.68l14.698,-14.698v14.698l-14.698,14.698zM1487.12,191.07l14.698,-14.698v14.698l-14.698,14.698zM1487.12,220.47l14.698,-14.698v14.698l-14.698,14.698zM1487.12,249.87l14.698,-14.698v14.698l-14.698,14.698zM1487.12,279.26l14.698,-14.698v14.698l-14.698,14.698zM1487.12,308.66l14.698,-14.698v14.698l-14.698,14.698zM1487.12,338.05l14.698,-14.698v14.698l-14.698,14.698zM1487.12,367.45l14.698,-14.698v14.698l-14.698,14.698zM1487.12,396.85l14.698,-14.698v14.698l-14.698,14.698zM1501.82,-14.70l14.698,-14.698v14.698l-14.698,14.698zM1501.82,14.70l14.698,-14.698v14.698l-14.698,14.698zM1501.82,44.09l14.698,-14.698v14.698l-14.698,14.698zM1501.82,73.49l14.698,-14.698v14.698l-14.698,14.698zM1501.82,102.89l14.698,-14.698v14.698l-14.698,14.698zM1501.82,132.28l14.698,-14.698v14.698l-14.698,14.698zM1501.82,161.68l14.698,-14.698v14.698l-14.698,14.698zM1501.82,191.07l14.698,-14.698v14.698l-14.698,14.698zM1501.82,220.47l14.698,-14.698v14.698l-14.698,14.698zM1501.82,249.87l14.698,-14.698v14.698l-14.698,14.698zM1501.82,279.26l14.698,-14.698v14.698l-14.698,14.698zM1501.82,308.66l14.698,-14.698v14.698l-14.698,14.698zM1501.82,338.05l14.698,-14.698v14.698l-14.698,14.698zM1501.82,367.45l14.698,-14.698v14.698l-14.698,14.698zM1501.82,396.85l14.698,-14.698v14.698l-14.698,14.698zM1516.51,-14.70l14.698,-14.698v14.698l-14.698,14.698zM1516.51,14.70l14.698,-14.698v14.698l-14.698,14.698zM1516.51,44.09l14.698,-14.698v14.698l-14.698,14.698zM1516.51,73.49l14.698,-14.698v14.698l-14.698,14.698zM1516.51,102.89l14.698,-14.698v14.698l-14.698,14.698zM1516.51,132.28l14.698,-14.698v14.698l-14.698,14.698zM1516.51,161.68l14.698,-14.698v14.698l-14.698,14.698zM1516.51,191.07l14.698,-14.698v14.698l-14.698,14.698zM1516.51,220.47l14.698,-14.698v14.698l-14.698,14.698zM1516.51,249.87l14.698,-14.698v14.698l-14.698,14.698zM1516.51,279.26l14.698,-14.698v14.698l-14.698,14.698zM1516.51,308.66l14.698,-14.698v14.698l-14.698,14.698zM1516.51,338.05l14.698,-14.698v14.698l-14.698,14.698zM1516.51,367.45l14.698,-14.698v14.698l-14.698,14.698zM1516.51,396.85l14.698,-14.698v14.698l-14.698,14.698zM1531.21,-14.70l14.698,-14.698v14.698l-14.698,14.698zM1531.21,14.70l14.698,-14.698v14.698l-14.698,14.698zM1531.21,44.09l14.698,-14.698v14.698l-14.698,14.698zM1531.21,73.49l14.698,-14.698v14.698l-14.698,14.698zM1531.21,102.89l14.698,-14.698v14.698l-14.698,14.698zM1531.21,132.28l14.698,-14.698v14.698l-14.698,14.698zM1531.21,161.68l14.698,-14.698v14.698l-14.698,14.698zM1531.21,191.07l14.698,-14.698v14.698l-14.698,14.698zM1531.21,220.47l14.698,-14.698v14.698l-14.698,14.698zM1531.21,249.87l14.698,-14.698v14.698l-14.698,14.698zM1531.21,279.26l14.698,-14.698v14.698l-14.698,14.698zM1531.21,308.66l14.698,-14.698v14.698l-14.698,14.698zM1531.21,338.05l14.698,-14.698v14.698l-14.698,14.698zM1531.21,367.45l14.698,-14.698v14.698l-14.698,14.698zM1531.21,396.85l14.698,-14.698v14.698l-14.698,14.698zM1545.91,-14.70l14.698,-14.698v14.698l-14.698,14.698zM1545.91,14.70l14.698,-14.698v14.698l-14.698,14.698zM1545.91,44.09l14.698,-14.698v14.698l-14.698,14.698zM1545.91,73.49l14.698,-14.698v14.698l-14.698,14.698zM1545.91,102.89l14.698,-14.698v14.698l-14.698,14.698zM1545.91,132.28l14.698,-14.698v14.698l-14.698,14.698zM1545.91,161.68l14.698,-14.698v14.698l-14.698,14.698zM1545.91,191.07l14.698,-14.698v14.698l-14.698,14.698zM1545.91,220.47l14.698,-14.698v14.698l-14.698,14.698zM1545.91,249.87l14.698,-14.698v14.698l-14.698,14.698zM1545.91,279.26l14.698,-14.698v14.698l-14.698,14.698zM1545.91,308.66l14.698,-14.698v14.698l-14.698,14.698zM1545.91,338.05l14.698,-14.698v14.698l-14.698,14.698zM1545.91,367.45l14.698,-14.698v14.698l-14.698,14.698zM1545.91,396.85l14.698,-14.698v14.698l-14.698,14.698z"/></svg></div>
<div class="t ovl" style="left:222.6px;top:569.2px;font-size:15px;line-height:17px;height:17px;color:#ff0000;z-index:21;letter-spacing:-0.049px"><span style="font-size:19px;line-height:0;vertical-align:-1px">①</span><span style="font-size:15.9px"> Dir Smth#</span>：边缘平滑系数，其中分为<span style="font-size:15.9px"> V</span>（<span style="font-size:15.9px">Dir Smth0</span>）、<span style="font-size:15.9px">H</span>（<span style="font-size:15.9px">Dir Smth1</span>）、<span style="font-size:15.9px">45</span>（<span style="font-size:15.9px">Dir Smth2</span>）、<span style="font-size:15.9px">135</span>（<span style="font-size:15.9px">Dir Smth3</span>），一般正常照度下该参数设置为<span style="font-size:15.9px"> 0 </span>以提升清晰度，低照度下增大该值以提升边缘平滑度。【<span style="font-size:15.9px">0</span>，<span style="font-size:15.9px">16</span>】</div>
<div class="t ovl" style="left:222.6px;top:588.5px;font-size:15px;line-height:17px;height:17px;color:#ff0000;z-index:21;letter-spacing:-0.165px"><span style="font-size:19px;line-height:0;vertical-align:-1px">②</span><span style="font-size:15.9px"> White Clip Para</span>：白边<span style="font-size:15.9px"> clip </span>参数。该值越小，对白边强边限制越强，白边越弱<span style="font-size:15.9px"> </span>【<span style="font-size:15.9px">0</span>，<span style="font-size:15.9px">1023</span>】</div>
<div class="t ovl" style="left:244.6px;top:607.7px;font-size:15px;line-height:17px;height:17px;color:#ff0000;z-index:21;letter-spacing:-0.186px"><span style="font-size:15.9px">Black Clip Para</span>：黑边<span style="font-size:15.9px"> clip </span>参数。该值越小，对黑边强边限制越强，黑边越弱<span style="font-size:15.9px"> </span>【<span style="font-size:15.9px">0</span>，<span style="font-size:15.9px">1023</span>】</div>
<div class="t ovl" style="left:222.6px;top:626.9px;font-size:15px;line-height:17px;height:17px;color:#ff0000;z-index:21;letter-spacing:-0.134px"><span style="font-size:19px;line-height:0;vertical-align:-1px">③</span><span style="font-size:15.9px"> White Clip Slp</span>：白边<span style="font-size:15.9px"> clip </span>斜率。该值越大，越多白边采用<span style="font-size:15.9px"> Max Clip Ratio </span>【<span style="font-size:15.9px">0</span>，<span style="font-size:15.9px">63</span>】</div>
<div class="t ovl" style="left:244.6px;top:646.2px;font-size:15px;line-height:17px;height:17px;color:#ff0000;z-index:21;letter-spacing:-0.186px"><span style="font-size:15.9px">Black Clip Slp</span>：黑边<span style="font-size:15.9px"> clip </span>斜率。该值越大，越多黑边采用<span style="font-size:15.9px"> Max Clip Ratio </span>【<span style="font-size:15.9px">0</span>，<span style="font-size:15.9px">63</span>】</div>
<div class="t ovl" style="left:244.6px;top:665.4px;font-size:15px;line-height:17px;height:17px;color:#ff0000;z-index:21;letter-spacing:-0.135px"><span style="font-size:15.9px">Max Clip Ratio</span>：用于控制过冲最大边缘的参数比例，该值越小，过冲控制效果越强<span style="font-size:15.9px"> </span>【<span style="font-size:15.9px">0</span>，<span style="font-size:15.9px">255</span>】</div>

</body></html>
